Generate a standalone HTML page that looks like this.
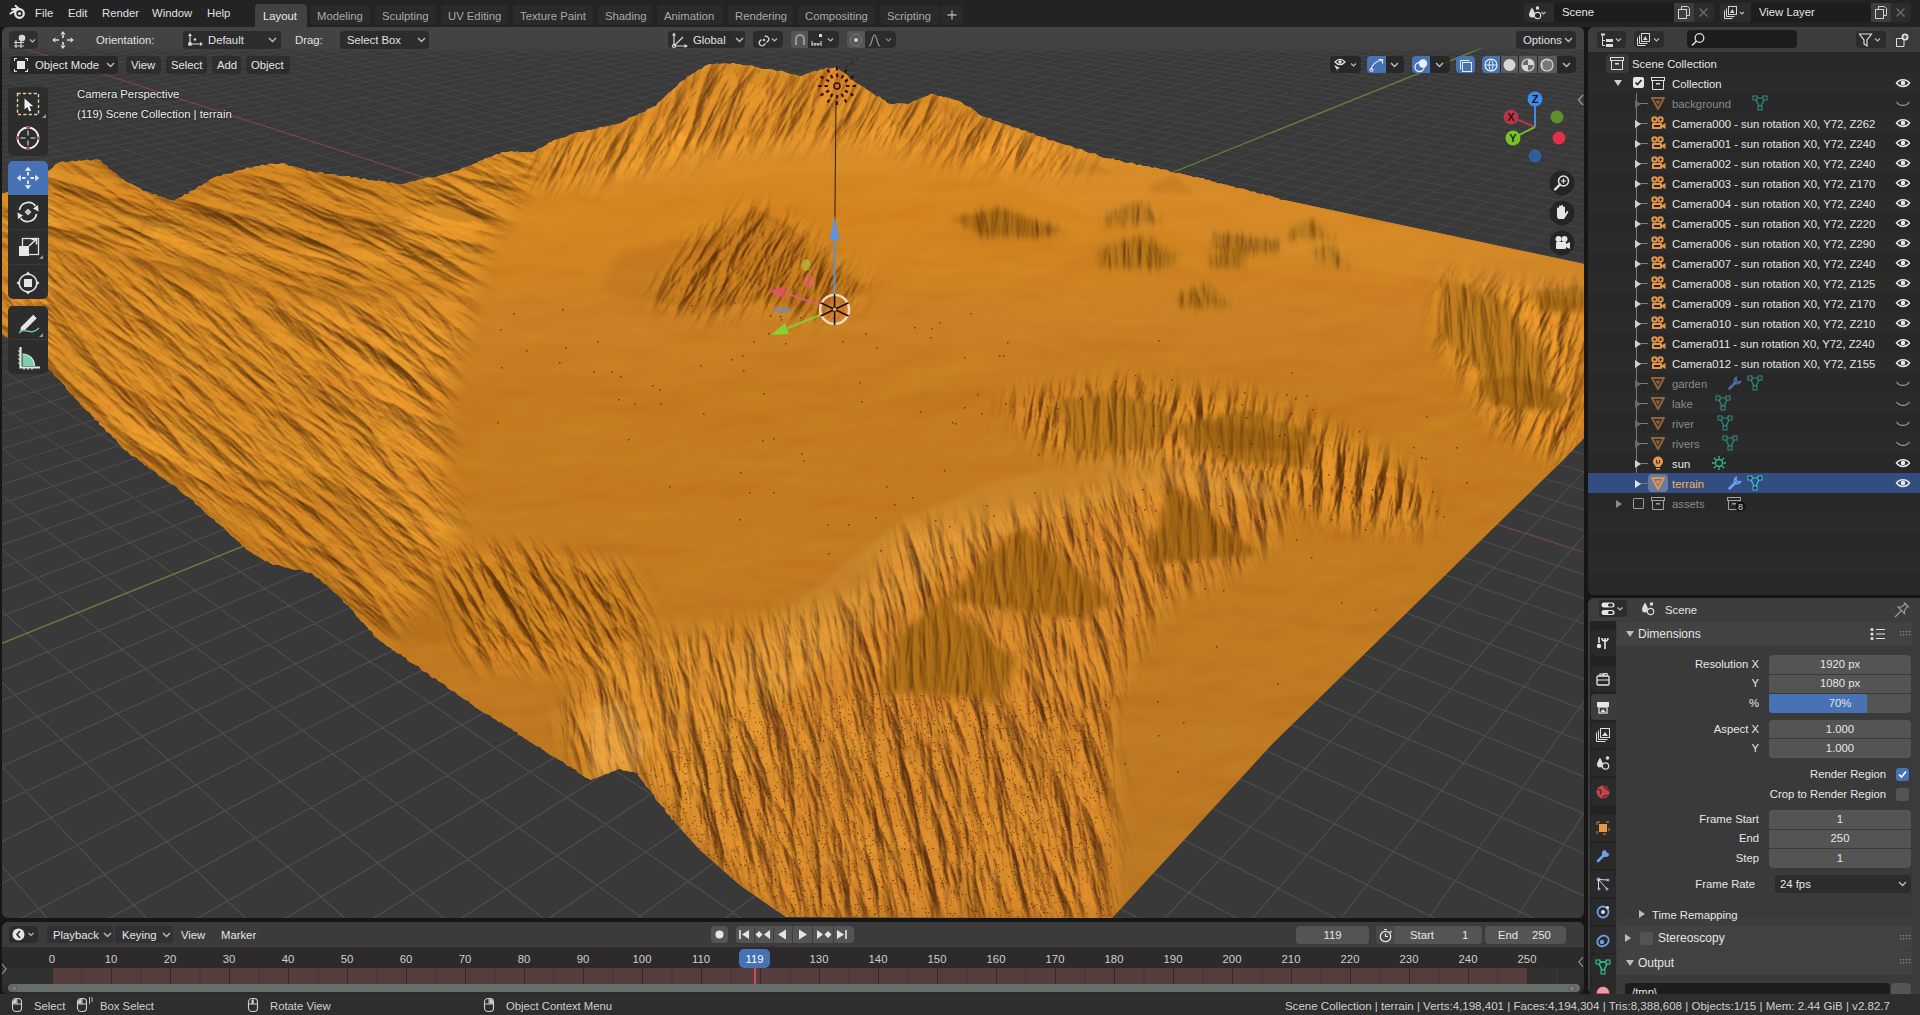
<!DOCTYPE html><html><head><meta charset="utf-8"><title>Blender</title><style>
*{box-sizing:border-box}
html,body{margin:0;padding:0}
body{width:1920px;height:1015px;overflow:hidden;position:relative;background:#161616;font-family:"Liberation Sans",sans-serif;font-size:11.3px;color:#e6e6e6}
.a{position:absolute}
.t{position:absolute;white-space:pre;line-height:14px;height:14px}
svg{position:absolute;overflow:visible}
</style></head><body>
<div class="a" style="left:0px;top:0px;width:1920px;height:27px;background:#232323;border-radius:0px;"></div><svg width="18" height="16" viewBox="0 0 18 16" style="left:9px;top:4px;"><circle cx="10.5" cy="9.5" r="4.3" stroke="#e6e6e6" stroke-width="2.2" fill="none"/><circle cx="10.5" cy="9.5" r="1.6" fill="#e6e6e6"/><path d="M1.5 9.5L7 6.2M3 5.2L9 4.8M6.5 1.8L10 5" stroke="#e6e6e6" stroke-width="2" stroke-linecap="round"/></svg><div class="t" style="left:35px;top:6px;color:#e0e0e0;">File</div><div class="t" style="left:68px;top:6px;color:#e0e0e0;">Edit</div><div class="t" style="left:102px;top:6px;color:#e0e0e0;">Render</div><div class="t" style="left:152px;top:6px;color:#e0e0e0;">Window</div><div class="t" style="left:207px;top:6px;color:#e0e0e0;">Help</div><div class="a" style="left:255px;top:4px;width:52px;height:23px;background:#424242;border-radius:4px;border-bottom-left-radius:0;border-bottom-right-radius:0"></div><div class="t" style="left:263px;top:9px;color:#e8e8e8;">Layout</div><div class="a" style="left:310px;top:5px;width:60px;height:20px;background:#2a2a2a;border-radius:4px;"></div><div class="t" style="left:317px;top:9px;color:#a9a9a9;">Modeling</div><div class="a" style="left:375px;top:5px;width:61px;height:20px;background:#2a2a2a;border-radius:4px;"></div><div class="t" style="left:382px;top:9px;color:#a9a9a9;">Sculpting</div><div class="a" style="left:441px;top:5px;width:67px;height:20px;background:#2a2a2a;border-radius:4px;"></div><div class="t" style="left:448px;top:9px;color:#a9a9a9;">UV Editing</div><div class="a" style="left:513px;top:5px;width:80px;height:20px;background:#2a2a2a;border-radius:4px;"></div><div class="t" style="left:520px;top:9px;color:#a9a9a9;">Texture Paint</div><div class="a" style="left:598px;top:5px;width:54px;height:20px;background:#2a2a2a;border-radius:4px;"></div><div class="t" style="left:605px;top:9px;color:#a9a9a9;">Shading</div><div class="a" style="left:657px;top:5px;width:66px;height:20px;background:#2a2a2a;border-radius:4px;"></div><div class="t" style="left:664px;top:9px;color:#a9a9a9;">Animation</div><div class="a" style="left:728px;top:5px;width:65px;height:20px;background:#2a2a2a;border-radius:4px;"></div><div class="t" style="left:735px;top:9px;color:#a9a9a9;">Rendering</div><div class="a" style="left:798px;top:5px;width:77px;height:20px;background:#2a2a2a;border-radius:4px;"></div><div class="t" style="left:805px;top:9px;color:#a9a9a9;">Compositing</div><div class="a" style="left:880px;top:5px;width:59px;height:20px;background:#2a2a2a;border-radius:4px;"></div><div class="t" style="left:887px;top:9px;color:#a9a9a9;">Scripting</div><div class="a" style="left:940px;top:5px;width:23px;height:20px;background:#2a2a2a;border-radius:4px;"></div><svg width="10" height="10" viewBox="0 0 10 10" style="left:947px;top:10px;"><path d="M5 0.5V9.5M0.5 5H9.5" stroke="#b0b0b0" stroke-width="1.3"/></svg><div class="a" style="left:1524px;top:3px;width:190px;height:19px;background:#2c2c2c;border-radius:4px;"></div><div class="a" style="left:1554px;top:3px;width:120px;height:19px;background:#1d1d1d;border-radius:0px;"></div><div class="a" style="left:1674px;top:3px;width:20px;height:19px;background:#3d3d3d;border-radius:0px;"></div><svg width="20" height="15" viewBox="0 0 20 15" style="left:1527px;top:5px;"><path d="M5 2.5C3 6 2 8 2 9.5a3 3 0 0 0 6 0C8 8 7 6 5 2.5Z" fill="#dcdcdc"/><circle cx="10.5" cy="10.5" r="3.2" stroke="#dcdcdc" stroke-width="1.2" fill="#232323"/><rect x="9" y="1.5" width="3" height="3" fill="#dcdcdc"/><path d="M14.5 7L16.5 9L18.5 7" stroke="#bbb" stroke-width="1.2" fill="none"/></svg><div class="t" style="left:1562px;top:5px;color:#e6e6e6;">Scene</div><svg width="14" height="15" viewBox="0 0 14 15" style="left:1677px;top:5px;"><rect x="1.5" y="4.5" width="8" height="9" stroke="#d0d0d0" fill="none"/><path d="M4.5 4.5V1.5H10.5L12.5 3.5V10.5H9.5" stroke="#d0d0d0" fill="none"/></svg><svg width="11" height="11" viewBox="0 0 11 11" style="left:1698px;top:7px;"><path d="M1.5 1.5L9.5 9.5M9.5 1.5L1.5 9.5" stroke="#6f6f6f" stroke-width="1.3"/></svg><div class="a" style="left:1720px;top:3px;width:191px;height:19px;background:#2c2c2c;border-radius:4px;"></div><div class="a" style="left:1751px;top:3px;width:120px;height:19px;background:#1d1d1d;border-radius:0px;"></div><div class="a" style="left:1871px;top:3px;width:20px;height:19px;background:#3d3d3d;border-radius:0px;"></div><svg width="24" height="15" viewBox="0 0 24 15" style="left:1724px;top:5px;"><rect x="4.5" y="1.5" width="8" height="8" stroke="#d8d8d8" fill="none"/><path d="M2.5 3.5V11.5H10.5M0.5 5.5V13.5H8.5" stroke="#d8d8d8" fill="none"/><path d="M6 8L8.3 4L10.5 8Z" fill="#d8d8d8"/><path d="M16 7L18 9L20 7" stroke="#bbb" stroke-width="1.2" fill="none"/></svg><div class="t" style="left:1759px;top:5px;color:#e6e6e6;">View Layer</div><svg width="14" height="15" viewBox="0 0 14 15" style="left:1874px;top:5px;"><rect x="1.5" y="4.5" width="8" height="9" stroke="#d0d0d0" fill="none"/><path d="M4.5 4.5V1.5H10.5L12.5 3.5V10.5H9.5" stroke="#d0d0d0" fill="none"/></svg><svg width="11" height="11" viewBox="0 0 11 11" style="left:1895px;top:7px;"><path d="M1.5 1.5L9.5 9.5M9.5 1.5L1.5 9.5" stroke="#6f6f6f" stroke-width="1.3"/></svg>
<svg width="1920" height="1015" viewBox="0 0 1920 1015" style="left:0;top:0"><defs><clipPath id="vpc"><rect x="2" y="27" width="1582" height="891" rx="6"/></clipPath><clipPath id="terr"><path d="M0.0 194.0 L4.1 193.2 L8.0 192.0 L11.0 190.9 L13.8 189.5 L16.8 188.3 L19.4 186.5 L22.4 185.3 L24.4 182.4 L27.6 181.7 L30.8 181.0 L33.3 179.0 L36.3 178.0 L38.5 175.2 L41.6 174.4 L44.2 172.5 L47.2 171.5 L50.0 170.0 L52.6 168.1 L54.5 165.3 L57.2 163.6 L60.0 162.0 L63.1 161.4 L66.2 162.4 L69.3 162.0 L72.3 160.8 L75.4 161.8 L78.4 160.4 L81.5 161.1 L84.6 160.1 L87.6 159.7 L90.8 161.1 L93.8 159.8 L96.9 159.6 L100.0 160.0 L101.7 162.6 L104.1 164.5 L107.0 165.7 L108.4 168.6 L111.2 170.1 L113.3 172.2 L116.1 173.6 L118.0 176.0 L120.4 178.3 L123.4 179.6 L125.9 181.7 L128.7 183.3 L132.1 184.0 L134.8 185.8 L137.8 187.2 L140.6 188.8 L143.0 191.0 L146.3 191.3 L149.3 192.7 L152.2 194.2 L155.7 194.1 L158.4 196.3 L161.7 196.7 L164.8 197.7 L167.6 199.5 L170.9 200.0 L174.0 201.0 L176.6 199.1 L179.5 197.8 L182.4 196.6 L184.6 194.1 L188.2 193.9 L190.1 190.9 L193.5 190.5 L196.3 189.0 L198.3 186.2 L201.8 185.8 L204.1 183.6 L207.1 182.4 L209.3 179.9 L212.1 178.4 L215.0 177.1 L218.0 176.0 L221.1 176.0 L223.7 173.9 L226.9 174.1 L229.9 173.7 L232.8 172.9 L235.5 171.1 L238.4 170.4 L241.4 169.9 L244.4 169.6 L247.1 167.6 L250.3 168.0 L253.2 167.3 L256.0 166.0 L259.3 166.3 L262.4 164.4 L265.8 165.7 L268.9 163.8 L272.2 163.8 L275.5 163.9 L278.8 164.1 L282.0 163.0 L285.2 163.7 L288.0 165.7 L291.4 166.1 L294.6 166.7 L297.7 167.7 L300.9 168.4 L304.1 169.3 L307.0 171.0 L310.1 170.8 L313.0 172.2 L315.9 173.1 L319.1 172.1 L322.1 172.3 L324.9 174.4 L328.0 174.0 L331.0 174.2 L334.1 174.3 L337.0 175.4 L339.9 176.2 L343.0 176.0 L346.0 176.3 L349.1 176.1 L351.9 178.0 L355.1 176.9 L358.0 178.1 L360.9 179.2 L364.1 178.3 L366.9 179.8 L369.9 180.6 L373.0 180.5 L375.9 181.2 L379.1 180.4 L382.0 181.4 L385.1 181.3 L387.9 182.9 L391.1 182.4 L394.0 183.1 L396.9 184.5 L400.0 184.0 L403.1 184.0 L406.2 183.5 L409.0 182.0 L412.0 181.4 L415.1 181.2 L418.0 180.1 L420.9 179.1 L424.0 178.7 L426.9 177.6 L430.0 177.3 L433.2 177.7 L436.2 177.0 L439.0 175.8 L442.0 174.9 L444.9 174.0 L447.8 172.9 L451.0 173.0 L453.7 171.5 L456.9 171.1 L459.8 170.1 L462.2 168.1 L465.4 167.6 L468.2 166.5 L471.0 165.2 L473.8 163.9 L476.7 162.9 L479.2 161.1 L482.3 160.5 L484.8 158.6 L487.8 157.8 L490.9 157.1 L493.6 155.8 L496.2 154.0 L499.5 153.9 L502.0 152.0 L505.1 152.3 L508.2 152.1 L511.3 151.1 L514.4 152.1 L517.5 151.6 L520.6 152.3 L523.7 151.9 L526.8 152.6 L529.9 152.3 L533.0 152.0 L535.9 151.0 L538.1 148.8 L541.0 147.7 L543.7 146.4 L546.4 145.0 L548.6 142.8 L551.7 142.0 L554.0 140.0 L557.3 139.6 L560.4 138.3 L563.6 137.8 L566.8 136.8 L569.6 135.0 L572.8 134.1 L575.7 132.4 L579.0 132.0 L582.1 132.0 L585.2 131.5 L588.0 130.1 L591.1 129.9 L594.1 129.3 L597.1 128.7 L599.9 127.1 L603.1 127.6 L606.0 126.6 L609.1 126.1 L612.0 125.1 L615.0 124.8 L618.0 124.0 L620.9 123.2 L623.5 121.7 L626.3 120.5 L628.5 118.1 L631.3 117.0 L634.2 116.2 L637.1 115.2 L639.5 113.3 L642.6 112.7 L645.2 111.4 L647.5 109.1 L650.5 108.5 L653.1 106.8 L656.0 106.0 L657.6 103.3 L659.9 101.4 L662.3 99.5 L664.3 97.3 L666.5 95.2 L668.4 92.9 L671.1 91.4 L673.2 89.2 L675.6 87.4 L677.8 85.3 L679.5 82.7 L682.0 81.0 L685.2 79.8 L687.1 76.7 L690.2 75.5 L692.9 73.6 L695.8 72.0 L698.3 69.7 L701.8 69.1 L704.1 66.6 L707.0 65.0 L710.2 63.9 L713.5 64.7 L716.7 63.5 L720.0 64.1 L723.2 63.5 L726.5 63.6 L729.8 64.1 L733.0 63.0 L736.1 64.1 L739.3 63.9 L742.4 65.2 L745.6 65.4 L748.8 65.5 L752.0 65.6 L755.0 66.9 L758.2 67.4 L761.2 68.7 L764.4 69.2 L767.7 69.1 L770.9 69.2 L774.0 70.0 L777.1 71.4 L780.7 70.6 L783.9 71.6 L787.0 73.1 L790.2 74.0 L793.6 73.9 L796.7 75.5 L800.0 76.0 L803.1 75.8 L805.7 74.0 L808.6 73.2 L811.4 72.0 L814.3 71.2 L817.6 71.5 L820.2 69.6 L823.4 69.7 L826.0 68.0 L829.0 68.7 L832.0 68.2 L835.0 67.6 L838.0 68.0 L840.0 70.8 L843.1 72.3 L845.8 74.3 L848.5 76.3 L850.3 79.4 L853.4 80.8 L856.0 83.0 L858.8 84.3 L861.3 86.2 L864.2 87.3 L866.3 89.6 L869.1 91.0 L871.9 92.4 L874.0 94.7 L876.6 96.4 L880.0 96.8 L882.1 99.2 L885.0 100.4 L887.0 103.1 L890.0 104.0 L893.4 104.5 L896.8 103.5 L900.2 103.6 L903.6 103.4 L907.0 104.0 L910.3 103.6 L912.9 101.2 L916.1 100.4 L919.0 99.0 L922.1 98.0 L925.1 96.7 L928.2 95.7 L931.0 94.0 L934.3 94.1 L937.1 96.0 L940.4 96.0 L943.4 97.2 L946.6 97.6 L949.8 98.3 L952.8 99.5 L955.9 100.2 L959.0 101.0 L961.9 102.6 L964.3 104.9 L967.2 106.5 L970.6 107.4 L973.1 109.5 L975.7 111.6 L978.0 114.1 L980.8 115.8 L984.0 117.0 L987.0 118.1 L990.3 118.2 L992.8 120.5 L996.0 120.9 L999.0 122.1 L1001.9 123.4 L1005.0 124.0 L1007.8 125.2 L1010.7 126.0 L1013.3 127.7 L1016.4 127.8 L1019.2 128.8 L1021.8 130.6 L1025.0 130.5 L1027.8 131.7 L1030.3 133.6 L1033.6 133.3 L1036.0 135.6 L1038.9 136.3 L1041.9 136.9 L1044.8 137.6 L1047.3 139.5 L1050.1 140.7 L1053.4 140.4 L1056.0 142.0 L1059.0 142.9 L1062.0 144.0 L1065.0 144.8 L1068.1 145.5 L1071.2 146.1 L1074.0 147.8 L1076.8 149.1 L1080.2 148.8 L1083.1 150.0 L1085.8 152.0 L1088.8 152.9 L1091.9 153.6 L1095.3 153.4 L1097.9 155.6 L1100.7 156.9 L1103.7 157.9 L1107.0 158.0 L1109.9 159.0 L1113.2 158.5 L1115.9 160.5 L1119.1 160.1 L1121.9 161.5 L1124.8 162.7 L1127.9 162.9 L1131.1 162.5 L1134.1 163.4 L1136.8 165.2 L1140.1 164.5 L1143.0 165.9 L1146.0 166.2 L1149.1 166.4 L1152.0 167.9 L1155.2 167.5 L1158.1 168.3 L1161.0 169.4 L1164.2 169.5 L1167.2 170.1 L1170.0 171.7 L1172.9 172.6 L1175.9 173.5 L1179.1 172.8 L1182.0 174.0 L1185.1 174.4 L1188.0 175.6 L1191.0 176.0 L1193.8 177.5 L1197.0 177.1 L1200.0 178.0 L1203.2 178.0 L1205.9 179.9 L1209.2 179.7 L1211.9 181.4 L1215.0 181.9 L1217.8 183.4 L1221.0 183.6 L1223.9 184.5 L1227.1 184.7 L1230.0 185.9 L1233.1 186.2 L1235.9 187.9 L1239.0 188.2 L1242.2 188.4 L1245.1 189.3 L1248.1 190.3 L1250.9 191.8 L1254.1 191.6 L1256.9 193.3 L1259.9 194.0 L1263.2 193.8 L1265.9 195.6 L1269.2 195.4 L1272.2 196.2 L1275.0 197.8 L1278.1 198.0 L1280.8 199.9 L1284 200 L1584 264 L1584 438 L1563 460 L1438 582 L1273 743 L1112 918 L786 917 L741 886 L700 850 L680.0 828.0 L678.0 825.6 L675.8 823.4 L674.4 820.5 L671.3 818.9 L670.3 815.7 L667.4 814.1 L665.5 811.6 L664.6 808.3 L662.3 806.2 L660.0 804.0 L657.6 801.6 L655.4 799.1 L654.7 795.5 L652.2 793.2 L650.5 790.3 L648.0 788.0 L645.6 785.9 L644.5 782.9 L642.3 780.7 L640.3 778.3 L638.6 775.7 L637.0 773.0 L633.6 772.0 L630.1 771.7 L626.8 770.8 L623.3 770.4 L620.0 769.0 L616.9 769.5 L614.1 771.0 L611.1 771.8 L608.4 773.5 L605.3 773.9 L602.6 775.6 L599.6 776.5 L596.8 777.7 L593.7 778.5 L591.0 780.0 L588.3 778.5 L585.5 777.4 L582.9 775.8 L580.5 773.9 L577.7 772.5 L576.0 769.6 L573.0 768.6 L570.7 766.6 L567.4 766.1 L565.3 763.7 L563.2 761.5 L560.3 760.3 L557.6 758.9 L555.1 757.2 L552.1 756.2 L549.6 754.4 L547.1 752.8 L544.7 750.8 L542.2 749.2 L540.1 746.8 L536.8 746.3 L534.3 744.5 L531.8 742.8 L529.1 741.4 L526.7 739.6 L524.0 738.0 L521.7 736.0 L518.7 735.1 L517.0 732.1 L513.9 731.3 L511.9 728.8 L509.1 727.5 L506.5 725.9 L503.8 724.6 L501.6 722.3 L498.3 721.9 L496.2 719.4 L493.3 718.4 L491.1 716.1 L488.6 714.4 L485.5 713.7 L483.0 712.0 L480.2 710.6 L477.9 708.7 L475.2 707.3 L473.0 705.0 L470.4 703.4 L468.5 700.8 L465.4 700.0 L462.8 698.3 L460.5 696.4 L457.8 694.9 L455.7 692.5 L453.2 690.8 L450.2 689.9 L447.7 688.0 L445.7 685.6 L443.5 683.5 L440.6 682.2 L437.9 680.8 L436.0 678.2 L432.5 677.9 L430.0 676.1 L428.3 673.3 L425.4 672.1 L422.5 670.9 L420.5 668.5 L418.5 666.1 L415.5 665.0 L412.8 663.5 L410.1 662.2 L407.6 660.5 L405.9 657.5 L403.0 656.4 L400.9 654.0 L397.5 653.6 L395.2 651.5 L392.5 650.1 L390.4 647.8 L387.5 646.6 L385.2 644.6 L382.9 642.6 L380.3 641.0 L378.0 639.0 L375.3 637.2 L373.2 634.9 L372.3 631.4 L369.1 630.1 L367.5 627.3 L365.2 625.1 L363.3 622.6 L360.6 620.8 L358.8 618.2 L356.4 616.1 L354.8 613.3 L353.2 610.5 L350.7 608.5 L348.9 605.9 L346.0 604.3 L343.6 602.2 L342.2 599.3 L340.0 597.0 L337.7 595.0 L335.4 592.9 L332.9 591.2 L330.8 588.8 L328.6 586.7 L326.5 584.4 L323.4 583.3 L321.3 581.1 L319.4 578.6 L316.3 577.4 L313.9 575.5 L312.0 573.0 L308.9 572.6 L305.8 572.3 L303.1 570.4 L300.1 569.6 L296.9 569.8 L293.8 569.4 L290.8 568.7 L287.9 567.7 L284.8 567.3 L282.0 566.0 L279.0 565.0 L275.9 564.9 L272.8 564.5 L270.0 563.0 L267.5 561.1 L264.3 560.6 L261.7 558.8 L259.1 557.1 L256.6 555.4 L253.6 554.3 L251.3 552.2 L248.5 550.8 L246.0 549.0 L244.0 546.6 L241.5 544.8 L239.6 542.2 L237.1 540.5 L234.9 538.3 L232.4 536.4 L230.0 534.5 L228.1 531.9 L225.7 530.1 L223.8 527.6 L221.2 525.8 L218.9 523.8 L216.1 522.3 L214.5 519.5 L211.7 518.0 L209.1 516.2 L206.7 514.2 L204.6 512.0 L202.4 509.8 L200.6 507.2 L197.9 505.6 L195.3 503.8 L193.9 500.8 L191.3 499.0 L189.0 497.0 L186.0 495.9 L183.6 494.0 L181.2 492.1 L179.0 490.0 L177.1 487.4 L174.7 485.5 L171.9 484.2 L169.0 482.9 L166.8 480.8 L164.2 479.1 L161.7 477.4 L158.9 476.0 L157.1 473.4 L154.9 471.2 L152.3 469.6 L149.2 468.7 L147.2 466.2 L144.3 464.9 L142.5 462.3 L139.7 460.9 L137.8 458.4 L135.2 456.8 L132.0 456.0 L129.7 453.9 L127.9 451.2 L125.0 450.0 L122.9 447.9 L120.7 445.7 L118.7 443.6 L117.0 441.0 L115.1 438.6 L112.5 436.9 L111.0 434.2 L108.4 432.5 L105.7 430.9 L104.5 427.9 L101.9 426.2 L99.4 424.5 L98.5 421.1 L95.2 420.1 L93.8 417.3 L91.6 415.2 L90.0 412.6 L87.3 411.0 L85.0 409.1 L83.0 406.8 L80.8 404.7 L79.2 402.1 L77.0 400.0 L74.7 397.9 L73.2 395.1 L70.4 393.4 L68.5 390.9 L66.3 388.8 L65.2 385.6 L62.9 383.4 L60.9 381.1 L58.5 379.1 L56.1 377.0 L53.7 375.0 L52.5 371.9 L50.0 370.0 L47.5 368.1 L44.5 366.9 L42.1 364.8 L39.6 363.0 L37.7 360.2 L35.4 358.0 L32.2 357.1 L30.3 354.4 L27.3 353.2 L25.2 350.7 L22.9 348.6 L20.1 347.0 L17.8 344.9 L14.9 343.6 L12.0 342.2 L10.0 339.6 L7.6 337.6 L4.7 336.3 L2.4 334.1 L0.0 332.0 L-0.3 329.0 L-0.9 326.0 L-0.3 323.0 L-0.2 320.0 L-0.0 317.0 L0.4 314.0 L-0.2 311.0 L0.9 308.0 L0.6 305.0 L0.8 302.0 L0.3 299.0 L0.3 296.0 L0.1 293.0 L0.5 290.0 L-0.2 287.0 L0.2 284.0 L0.3 281.0 L0.0 278.0 L-0.4 275.0 L-0.8 272.0 L-0.7 269.0 L-0.3 266.0 L0.1 263.0 L0.5 260.0 L0.4 257.0 L-0.3 254.0 L0.8 251.0 L-0.4 248.0 L0.4 245.0 L-0.8 242.0 L0.5 239.0 L0.3 236.0 L0.8 233.0 L0.7 230.0 L0.3 227.0 L0.6 224.0 L0.4 221.0 L0.2 218.0 L-0.5 215.0 L0.0 212.0 L0.7 209.0 L-0.5 206.0 L0.9 203.0 L0.1 200.0 L-0.2 197.0Z"/></clipPath><linearGradient id="tg" x1="0" y1="60" x2="0" y2="918" gradientUnits="userSpaceOnUse"><stop offset="0" stop-color="#d98d29"/><stop offset="0.186" stop-color="#d38520"/><stop offset="0.303" stop-color="#ca8024"/><stop offset="0.396" stop-color="#c37b1e"/><stop offset="0.559" stop-color="#c27b1f"/><stop offset="1" stop-color="#bb7622"/></linearGradient><linearGradient id="gfg" x1="0" y1="27" x2="0" y2="918" gradientUnits="userSpaceOnUse"><stop offset="0" stop-color="#fff" stop-opacity="0.4"/><stop offset="0.3" stop-color="#fff" stop-opacity="0.55"/><stop offset="0.6" stop-color="#fff" stop-opacity="0.9"/><stop offset="1" stop-color="#fff" stop-opacity="1"/></linearGradient><mask id="gfade" maskUnits="userSpaceOnUse" x="0" y="0" width="1920" height="1015"><rect x="0" y="0" width="1920" height="1015" fill="url(#gfg)"/></mask><pattern id="vst" width="3" height="40" patternUnits="userSpaceOnUse"><rect x="0" y="0" width="1.3" height="40" fill="#3a1e02" fill-opacity="0.35"/><rect x="1.8" y="0" width="0.8" height="40" fill="#ffc070" fill-opacity="0.15"/></pattern><filter id="sb" x="-5%" y="-5%" width="110%" height="110%"><feGaussianBlur stdDeviation="2.5"/></filter><filter id="bl" x="-20%" y="-20%" width="140%" height="140%"><feGaussianBlur stdDeviation="12"/></filter><pattern id="dots" width="12" height="12" patternUnits="userSpaceOnUse"><rect x="2.6" y="6.0" width="1.2" height="1.2" fill="#4a2806" fill-opacity="0.41"/><rect x="6.6" y="6.9" width="1.2" height="1.2" fill="#4a2806" fill-opacity="0.32"/><rect x="0.1" y="9.2" width="1.2" height="1.2" fill="#4a2806" fill-opacity="0.38"/><rect x="2.6" y="11.0" width="1.2" height="1.2" fill="#4a2806" fill-opacity="0.44"/><rect x="9.2" y="5.2" width="1.2" height="1.2" fill="#4a2806" fill-opacity="0.49"/><rect x="1.7" y="7.0" width="1.2" height="1.2" fill="#4a2806" fill-opacity="0.56"/><rect x="5.8" y="8.2" width="1.2" height="1.2" fill="#4a2806" fill-opacity="0.50"/><rect x="0.7" y="8.3" width="1.2" height="1.2" fill="#4a2806" fill-opacity="0.48"/><rect x="3.3" y="0.3" width="1.2" height="1.2" fill="#4a2806" fill-opacity="0.56"/></pattern><mask id="zm0" maskUnits="userSpaceOnUse" x="0" y="0" width="1920" height="1015"><path d="M0 194 L50 170 L100 160 L174 201 L256 166 L307 171 L400 184 L451 173 L502 152 L533 152 L554 140 L520 190 L480 250 L470 300 L300 300 L120 260 L0 250Z" fill="#fff" filter="url(#bl)"/></mask><filter id="tx0" x="0" y="0" width="100%" height="100%" filterUnits="objectBoundingBox" color-interpolation-filters="sRGB"><feTurbulence type="turbulence" baseFrequency="0.006 0.03" numOctaves="5" seed="11" result="n"/><feColorMatrix in="n" type="matrix" values="0 0 0 0 0  0 0 0 0 0  0 0 0 0 0  -1.3 0 0 0 1" result="h"/><feDiffuseLighting in="h" surfaceScale="6" diffuseConstant="1" lighting-color="#ffffff" result="lit"><feDistantLight azimuth="240" elevation="50"/></feDiffuseLighting><feColorMatrix in="lit" type="matrix" values="0.55 0 0 0 0.395  0.40 0 0 0 0.226  0.12 0 0 0 0.055  0 0 0 0 1"/></filter><mask id="zm1" maskUnits="userSpaceOnUse" x="0" y="0" width="1920" height="1015"><path d="M0 250 L120 260 L300 300 L470 300 L450 380 L440 470 L460 540 L430 600 L378 639 L340 597 L312 573 L270 563 L189 497 L125 450 L50 370 L0 332Z" fill="#fff" filter="url(#bl)"/></mask><filter id="tx1" x="0" y="0" width="100%" height="100%" filterUnits="objectBoundingBox" color-interpolation-filters="sRGB"><feTurbulence type="turbulence" baseFrequency="0.006 0.03" numOctaves="5" seed="12" result="n"/><feColorMatrix in="n" type="matrix" values="0 0 0 0 0  0 0 0 0 0  0 0 0 0 0  -1.3 0 0 0 1" result="h"/><feDiffuseLighting in="h" surfaceScale="6" diffuseConstant="1" lighting-color="#ffffff" result="lit"><feDistantLight azimuth="240" elevation="50"/></feDiffuseLighting><feColorMatrix in="lit" type="matrix" values="0.55 0 0 0 0.395  0.40 0 0 0 0.222  0.12 0 0 0 0.055  0 0 0 0 1"/></filter><mask id="zm2" maskUnits="userSpaceOnUse" x="0" y="0" width="1920" height="1015"><path d="M533 152 L554 140 L579 132 L618 124 L656 106 L682 81 L707 65 L733 63 L774 70 L800 76 L826 68 L838 68 L856 83 L890 104 L907 104 L931 94 L959 101 L984 117 L1005 124 L1056 142 L1107 158 L1060 168 L1000 165 L930 152 L880 142 L820 138 L760 142 L700 152 L640 168 L580 178 L540 182Z" fill="#fff" filter="url(#bl)"/></mask><filter id="tx2" x="0" y="0" width="100%" height="100%" filterUnits="objectBoundingBox" color-interpolation-filters="sRGB"><feTurbulence type="turbulence" baseFrequency="0.008 0.04" numOctaves="5" seed="13" result="n"/><feColorMatrix in="n" type="matrix" values="0 0 0 0 0  0 0 0 0 0  0 0 0 0 0  -1.3 0 0 0 1" result="h"/><feDiffuseLighting in="h" surfaceScale="6" diffuseConstant="1" lighting-color="#ffffff" result="lit"><feDistantLight azimuth="240" elevation="50"/></feDiffuseLighting><feColorMatrix in="lit" type="matrix" values="0.55 0 0 0 0.458  0.40 0 0 0 0.273  0.12 0 0 0 0.079  0 0 0 0 1"/></filter><mask id="zm3" maskUnits="userSpaceOnUse" x="0" y="0" width="1920" height="1015"><path d="M650 300 L700 240 L755 208 L790 225 L830 262 L870 290 L812 316 L760 300 L700 312Z" fill="#fff" filter="url(#bl)"/></mask><filter id="tx3" x="0" y="0" width="100%" height="100%" filterUnits="objectBoundingBox" color-interpolation-filters="sRGB"><feTurbulence type="turbulence" baseFrequency="0.012 0.05" numOctaves="5" seed="14" result="n"/><feColorMatrix in="n" type="matrix" values="0 0 0 0 0  0 0 0 0 0  0 0 0 0 0  -1.3 0 0 0 1" result="h"/><feDiffuseLighting in="h" surfaceScale="6" diffuseConstant="1" lighting-color="#ffffff" result="lit"><feDistantLight azimuth="240" elevation="50"/></feDiffuseLighting><feColorMatrix in="lit" type="matrix" values="0.55 0 0 0 0.368  0.40 0 0 0 0.195  0.12 0 0 0 0.040  0 0 0 0 1"/></filter><mask id="zm4" maskUnits="userSpaceOnUse" x="0" y="0" width="1920" height="1015"><path d="M600 650 L760 625 L860 600 L910 530 L990 520 L1066 500 L1158 475 L1210 440 L1282 470 L1290 510 L1250 560 L1160 600 L1110 700 L1112 918 L780 918 L709 857 L652 790 L634 771 L610 781 L586 776 L560 720Z" fill="#fff" filter="url(#bl)"/></mask><filter id="tx4" x="0" y="0" width="100%" height="100%" filterUnits="objectBoundingBox" color-interpolation-filters="sRGB"><feTurbulence type="turbulence" baseFrequency="0.007 0.035" numOctaves="5" seed="15" result="n"/><feColorMatrix in="n" type="matrix" values="0 0 0 0 0  0 0 0 0 0  0 0 0 0 0  -1.3 0 0 0 1" result="h"/><feDiffuseLighting in="h" surfaceScale="6" diffuseConstant="1" lighting-color="#ffffff" result="lit"><feDistantLight azimuth="240" elevation="50"/></feDiffuseLighting><feColorMatrix in="lit" type="matrix" values="0.55 0 0 0 0.380  0.40 0 0 0 0.215  0.12 0 0 0 0.071  0 0 0 0 1"/></filter><mask id="zm5" maskUnits="userSpaceOnUse" x="0" y="0" width="1920" height="1015"><path d="M431 560 L520 550 L630 575 L650 640 L600 670 L470 660Z" fill="#fff" filter="url(#bl)"/></mask><filter id="tx5" x="0" y="0" width="100%" height="100%" filterUnits="objectBoundingBox" color-interpolation-filters="sRGB"><feTurbulence type="turbulence" baseFrequency="0.01 0.05" numOctaves="5" seed="17" result="n"/><feColorMatrix in="n" type="matrix" values="0 0 0 0 0  0 0 0 0 0  0 0 0 0 0  -1.3 0 0 0 1" result="h"/><feDiffuseLighting in="h" surfaceScale="6" diffuseConstant="1" lighting-color="#ffffff" result="lit"><feDistantLight azimuth="240" elevation="50"/></feDiffuseLighting><feColorMatrix in="lit" type="matrix" values="0.55 0 0 0 0.388  0.40 0 0 0 0.211  0.12 0 0 0 0.047  0 0 0 0 1"/></filter><mask id="zm6" maskUnits="userSpaceOnUse" x="0" y="0" width="1920" height="1015"><path d="M1000 400 L1120 385 L1250 400 L1330 430 L1420 480 L1430 530 L1330 520 L1250 480 L1150 460 L1050 450Z" fill="#fff" filter="url(#bl)"/></mask><filter id="tx6" x="0" y="0" width="100%" height="100%" filterUnits="objectBoundingBox" color-interpolation-filters="sRGB"><feTurbulence type="turbulence" baseFrequency="0.012 0.05" numOctaves="5" seed="18" result="n"/><feColorMatrix in="n" type="matrix" values="0 0 0 0 0  0 0 0 0 0  0 0 0 0 0  -1.3 0 0 0 1" result="h"/><feDiffuseLighting in="h" surfaceScale="6" diffuseConstant="1" lighting-color="#ffffff" result="lit"><feDistantLight azimuth="240" elevation="50"/></feDiffuseLighting><feColorMatrix in="lit" type="matrix" values="0.55 0 0 0 0.368  0.40 0 0 0 0.195  0.12 0 0 0 0.047  0 0 0 0 1"/></filter><mask id="zm7" maskUnits="userSpaceOnUse" x="0" y="0" width="1920" height="1015"><path d="M1440 277 L1520 290 L1584 286 L1584 438 L1563 460 L1500 430 L1440 340Z" fill="#fff" filter="url(#bl)"/></mask><filter id="tx7" x="0" y="0" width="100%" height="100%" filterUnits="objectBoundingBox" color-interpolation-filters="sRGB"><feTurbulence type="turbulence" baseFrequency="0.01 0.04" numOctaves="5" seed="16" result="n"/><feColorMatrix in="n" type="matrix" values="0 0 0 0 0  0 0 0 0 0  0 0 0 0 0  -1.3 0 0 0 1" result="h"/><feDiffuseLighting in="h" surfaceScale="6" diffuseConstant="1" lighting-color="#ffffff" result="lit"><feDistantLight azimuth="240" elevation="50"/></feDiffuseLighting><feColorMatrix in="lit" type="matrix" values="0.55 0 0 0 0.395  0.40 0 0 0 0.218  0.12 0 0 0 0.055  0 0 0 0 1"/></filter><mask id="dzm" maskUnits="userSpaceOnUse" x="0" y="0" width="1920" height="1015"><path d="M637 758 L750 700 L900 700 L1100 760 L1200 780 L1112 918 L786 920 L705 861 L670 815Z" fill="#fff" filter="url(#bl)"/></mask></defs><g clip-path="url(#vpc)"><rect x="0" y="0" width="1920" height="1015" fill="#393939"/><path d="M1584.0 29.6L1562.6 27.0M1584.0 32.6L1537.7 27.0M1584.0 35.7L1512.7 27.0M1584.0 38.9L1487.8 27.0M1584.0 42.1L1462.9 27.0M1584.0 45.4L1438.0 27.0M1584.0 48.8L1413.0 27.0M1584.0 52.2L1388.1 27.0M1584.0 55.7L1363.1 27.0M1584.0 59.3L1338.2 27.0M1584.0 63.0L1313.2 27.0M1584.0 66.7L1288.3 27.0M1584.0 70.5L1263.3 27.0M1584.0 74.5L1238.3 27.0M1584.0 78.5L1213.4 27.0M1584.0 82.6L1188.4 27.0M1584.0 86.8L1163.4 27.0M1584.0 91.1L1138.4 27.0M1584.0 95.5L1113.4 27.0M1584.0 100.0L1088.4 27.0M1584.0 104.6L1063.4 27.0M1584.0 109.3L1038.4 27.0M1584.0 114.2L1013.4 27.0M1584.0 119.1L988.4 27.0M1584.0 124.2L963.3 27.0M1584.0 129.5L938.3 27.0M1584.0 134.8L913.3 27.0M1584.0 140.4L888.2 27.0M1584.0 146.0L863.2 27.0M1584.0 151.8L838.1 27.0M1584.0 157.8L813.1 27.0M1584.0 164.0L788.0 27.0M1584.0 170.3L763.0 27.0M1584.0 176.8L737.9 27.0M1584.0 183.6L712.8 27.0M1584.0 190.5L687.7 27.0M1584.0 197.6L662.6 27.0M1584.0 204.9L637.6 27.0M1584.0 212.5L612.5 27.0M1584.0 220.3L587.4 27.0M1584.0 228.4L562.3 27.0M1584.0 236.8L537.1 27.0M1584.0 245.4L512.0 27.0M1584.0 254.3L486.9 27.0M1584.0 263.5L461.8 27.0M1584.0 273.1L436.6 27.0M1584.0 283.0L411.5 27.0M1584.0 293.3L386.4 27.0M1584.0 303.9L361.2 27.0M1584.0 315.0L336.1 27.0M1584.0 326.5L310.9 27.0M1584.0 338.4L285.8 27.0M1584.0 350.8L260.6 27.0M1584.0 363.8L235.4 27.0M1584.0 377.2L210.2 27.0M1584.0 391.3L185.1 27.0M1584.0 406.0L159.9 27.0M1584.0 421.3L134.7 27.0M1584.0 437.4L109.5 27.0M1584.0 454.2L84.3 27.0M1584.0 471.8L59.1 27.0M1584.0 490.3L33.9 27.0M1584.0 509.7L8.6 27.0M1584.0 530.2L2.0 32.8M1584.0 574.4L2.0 49.9M1584.0 598.4L2.0 59.1M1584.0 623.8L2.0 68.9M1584.0 650.7L2.0 79.3M1584.0 679.2L2.0 90.3M1584.0 709.6L2.0 102.0M1584.0 742.0L2.0 114.5M1584.0 776.6L2.0 127.8M1584.0 813.6L2.0 142.1M1584.0 853.3L2.0 157.4M1584.0 896.0L2.0 173.8M1533.3 918.0L2.0 191.6M1434.3 918.0L2.0 210.8M1335.4 918.0L2.0 231.6M1236.4 918.0L2.0 254.3M1137.4 918.0L2.0 279.2M1038.3 918.0L2.0 306.4M939.3 918.0L2.0 336.5M840.2 918.0L2.0 369.8M741.1 918.0L2.0 406.9M642.0 918.0L2.0 448.6M542.9 918.0L2.0 495.6M443.8 918.0L2.0 549.2M344.6 918.0L2.0 610.7M245.4 918.0L2.0 682.2M146.2 918.0L2.0 766.1M47.0 918.0L2.0 866.1M1516.3 918.0L1584.0 812.9M1428.5 918.0L1584.0 701.4M1340.7 918.0L1584.0 610.6M1252.8 918.0L1584.0 535.2M1165.0 918.0L1584.0 471.7M1077.2 918.0L1584.0 417.4M989.3 918.0L1584.0 370.4M901.4 918.0L1584.0 329.4M813.5 918.0L1584.0 293.3M725.6 918.0L1584.0 261.3M637.7 918.0L1584.0 232.7M549.7 918.0L1584.0 206.9M461.8 918.0L1584.0 183.7M373.8 918.0L1584.0 162.6M285.8 918.0L1584.0 143.3M197.8 918.0L1584.0 125.7M109.7 918.0L1584.0 109.5M21.7 918.0L1584.0 94.5M2.0 883.3L1584.0 80.7M2.0 841.5L1584.0 67.8M2.0 802.6L1584.0 55.9M2.0 766.3L1584.0 44.7M2.0 732.4L1584.0 34.3M2.0 700.6L1578.3 27.0M2.0 670.7L1555.9 27.0M2.0 616.1L1511.3 27.0M2.0 591.1L1489.0 27.0M2.0 567.5L1466.6 27.0M2.0 545.1L1444.3 27.0M2.0 523.9L1422.0 27.0M2.0 503.7L1399.6 27.0M2.0 484.6L1377.3 27.0M2.0 466.3L1354.9 27.0M2.0 448.9L1332.6 27.0M2.0 432.3L1310.2 27.0M2.0 416.4L1287.8 27.0M2.0 401.3L1265.5 27.0M2.0 386.7L1243.1 27.0M2.0 372.8L1220.7 27.0M2.0 359.5L1198.3 27.0M2.0 346.7L1176.0 27.0M2.0 334.4L1153.6 27.0M2.0 322.6L1131.2 27.0M2.0 311.2L1108.8 27.0M2.0 300.2L1086.4 27.0M2.0 289.7L1064.0 27.0M2.0 279.5L1041.6 27.0M2.0 269.7L1019.2 27.0M2.0 260.2L996.8 27.0M2.0 251.0L974.3 27.0M2.0 242.2L951.9 27.0M2.0 233.6L929.5 27.0M2.0 225.4L907.0 27.0M2.0 217.3L884.6 27.0M2.0 209.6L862.2 27.0M2.0 202.0L839.7 27.0M2.0 194.8L817.3 27.0M2.0 187.7L794.8 27.0M2.0 180.8L772.4 27.0M2.0 174.1L749.9 27.0M2.0 167.7L727.4 27.0M2.0 161.4L705.0 27.0M2.0 155.2L682.5 27.0M2.0 149.3L660.0 27.0M2.0 143.5L637.5 27.0M2.0 137.9L615.1 27.0M2.0 132.4L592.6 27.0M2.0 127.0L570.1 27.0M2.0 121.8L547.6 27.0M2.0 116.8L525.1 27.0M2.0 111.8L502.6 27.0M2.0 107.0L480.1 27.0M2.0 102.3L457.6 27.0M2.0 97.7L435.0 27.0M2.0 93.2L412.5 27.0M2.0 88.8L390.0 27.0M2.0 84.6L367.5 27.0M2.0 80.4L344.9 27.0M2.0 76.3L322.4 27.0M2.0 72.3L299.8 27.0M2.0 68.4L277.3 27.0M2.0 64.6L254.7 27.0M2.0 60.9L232.2 27.0M2.0 57.2L209.6 27.0M2.0 53.6L187.1 27.0M2.0 50.1L164.5 27.0M2.0 46.7L141.9 27.0M2.0 43.4L119.4 27.0M2.0 40.1L96.8 27.0M2.0 36.9L74.2 27.0M2.0 33.7L51.6 27.0M2.0 30.6L29.0 27.0M2.0 27.6L6.4 27.0" stroke="#4f4f4f" stroke-width="1.15" fill="none" mask="url(#gfade)"/><path d="M0 40.7L1584 552.3" stroke="#7a4650" stroke-width="1.2" fill="none"/><path d="M0 644L1600 0.5" stroke="#64843a" stroke-width="1.3" fill="none"/><path d="M0.0 194.0 L4.1 193.2 L8.0 192.0 L11.0 190.9 L13.8 189.5 L16.8 188.3 L19.4 186.5 L22.4 185.3 L24.4 182.4 L27.6 181.7 L30.8 181.0 L33.3 179.0 L36.3 178.0 L38.5 175.2 L41.6 174.4 L44.2 172.5 L47.2 171.5 L50.0 170.0 L52.6 168.1 L54.5 165.3 L57.2 163.6 L60.0 162.0 L63.1 161.4 L66.2 162.4 L69.3 162.0 L72.3 160.8 L75.4 161.8 L78.4 160.4 L81.5 161.1 L84.6 160.1 L87.6 159.7 L90.8 161.1 L93.8 159.8 L96.9 159.6 L100.0 160.0 L101.7 162.6 L104.1 164.5 L107.0 165.7 L108.4 168.6 L111.2 170.1 L113.3 172.2 L116.1 173.6 L118.0 176.0 L120.4 178.3 L123.4 179.6 L125.9 181.7 L128.7 183.3 L132.1 184.0 L134.8 185.8 L137.8 187.2 L140.6 188.8 L143.0 191.0 L146.3 191.3 L149.3 192.7 L152.2 194.2 L155.7 194.1 L158.4 196.3 L161.7 196.7 L164.8 197.7 L167.6 199.5 L170.9 200.0 L174.0 201.0 L176.6 199.1 L179.5 197.8 L182.4 196.6 L184.6 194.1 L188.2 193.9 L190.1 190.9 L193.5 190.5 L196.3 189.0 L198.3 186.2 L201.8 185.8 L204.1 183.6 L207.1 182.4 L209.3 179.9 L212.1 178.4 L215.0 177.1 L218.0 176.0 L221.1 176.0 L223.7 173.9 L226.9 174.1 L229.9 173.7 L232.8 172.9 L235.5 171.1 L238.4 170.4 L241.4 169.9 L244.4 169.6 L247.1 167.6 L250.3 168.0 L253.2 167.3 L256.0 166.0 L259.3 166.3 L262.4 164.4 L265.8 165.7 L268.9 163.8 L272.2 163.8 L275.5 163.9 L278.8 164.1 L282.0 163.0 L285.2 163.7 L288.0 165.7 L291.4 166.1 L294.6 166.7 L297.7 167.7 L300.9 168.4 L304.1 169.3 L307.0 171.0 L310.1 170.8 L313.0 172.2 L315.9 173.1 L319.1 172.1 L322.1 172.3 L324.9 174.4 L328.0 174.0 L331.0 174.2 L334.1 174.3 L337.0 175.4 L339.9 176.2 L343.0 176.0 L346.0 176.3 L349.1 176.1 L351.9 178.0 L355.1 176.9 L358.0 178.1 L360.9 179.2 L364.1 178.3 L366.9 179.8 L369.9 180.6 L373.0 180.5 L375.9 181.2 L379.1 180.4 L382.0 181.4 L385.1 181.3 L387.9 182.9 L391.1 182.4 L394.0 183.1 L396.9 184.5 L400.0 184.0 L403.1 184.0 L406.2 183.5 L409.0 182.0 L412.0 181.4 L415.1 181.2 L418.0 180.1 L420.9 179.1 L424.0 178.7 L426.9 177.6 L430.0 177.3 L433.2 177.7 L436.2 177.0 L439.0 175.8 L442.0 174.9 L444.9 174.0 L447.8 172.9 L451.0 173.0 L453.7 171.5 L456.9 171.1 L459.8 170.1 L462.2 168.1 L465.4 167.6 L468.2 166.5 L471.0 165.2 L473.8 163.9 L476.7 162.9 L479.2 161.1 L482.3 160.5 L484.8 158.6 L487.8 157.8 L490.9 157.1 L493.6 155.8 L496.2 154.0 L499.5 153.9 L502.0 152.0 L505.1 152.3 L508.2 152.1 L511.3 151.1 L514.4 152.1 L517.5 151.6 L520.6 152.3 L523.7 151.9 L526.8 152.6 L529.9 152.3 L533.0 152.0 L535.9 151.0 L538.1 148.8 L541.0 147.7 L543.7 146.4 L546.4 145.0 L548.6 142.8 L551.7 142.0 L554.0 140.0 L557.3 139.6 L560.4 138.3 L563.6 137.8 L566.8 136.8 L569.6 135.0 L572.8 134.1 L575.7 132.4 L579.0 132.0 L582.1 132.0 L585.2 131.5 L588.0 130.1 L591.1 129.9 L594.1 129.3 L597.1 128.7 L599.9 127.1 L603.1 127.6 L606.0 126.6 L609.1 126.1 L612.0 125.1 L615.0 124.8 L618.0 124.0 L620.9 123.2 L623.5 121.7 L626.3 120.5 L628.5 118.1 L631.3 117.0 L634.2 116.2 L637.1 115.2 L639.5 113.3 L642.6 112.7 L645.2 111.4 L647.5 109.1 L650.5 108.5 L653.1 106.8 L656.0 106.0 L657.6 103.3 L659.9 101.4 L662.3 99.5 L664.3 97.3 L666.5 95.2 L668.4 92.9 L671.1 91.4 L673.2 89.2 L675.6 87.4 L677.8 85.3 L679.5 82.7 L682.0 81.0 L685.2 79.8 L687.1 76.7 L690.2 75.5 L692.9 73.6 L695.8 72.0 L698.3 69.7 L701.8 69.1 L704.1 66.6 L707.0 65.0 L710.2 63.9 L713.5 64.7 L716.7 63.5 L720.0 64.1 L723.2 63.5 L726.5 63.6 L729.8 64.1 L733.0 63.0 L736.1 64.1 L739.3 63.9 L742.4 65.2 L745.6 65.4 L748.8 65.5 L752.0 65.6 L755.0 66.9 L758.2 67.4 L761.2 68.7 L764.4 69.2 L767.7 69.1 L770.9 69.2 L774.0 70.0 L777.1 71.4 L780.7 70.6 L783.9 71.6 L787.0 73.1 L790.2 74.0 L793.6 73.9 L796.7 75.5 L800.0 76.0 L803.1 75.8 L805.7 74.0 L808.6 73.2 L811.4 72.0 L814.3 71.2 L817.6 71.5 L820.2 69.6 L823.4 69.7 L826.0 68.0 L829.0 68.7 L832.0 68.2 L835.0 67.6 L838.0 68.0 L840.0 70.8 L843.1 72.3 L845.8 74.3 L848.5 76.3 L850.3 79.4 L853.4 80.8 L856.0 83.0 L858.8 84.3 L861.3 86.2 L864.2 87.3 L866.3 89.6 L869.1 91.0 L871.9 92.4 L874.0 94.7 L876.6 96.4 L880.0 96.8 L882.1 99.2 L885.0 100.4 L887.0 103.1 L890.0 104.0 L893.4 104.5 L896.8 103.5 L900.2 103.6 L903.6 103.4 L907.0 104.0 L910.3 103.6 L912.9 101.2 L916.1 100.4 L919.0 99.0 L922.1 98.0 L925.1 96.7 L928.2 95.7 L931.0 94.0 L934.3 94.1 L937.1 96.0 L940.4 96.0 L943.4 97.2 L946.6 97.6 L949.8 98.3 L952.8 99.5 L955.9 100.2 L959.0 101.0 L961.9 102.6 L964.3 104.9 L967.2 106.5 L970.6 107.4 L973.1 109.5 L975.7 111.6 L978.0 114.1 L980.8 115.8 L984.0 117.0 L987.0 118.1 L990.3 118.2 L992.8 120.5 L996.0 120.9 L999.0 122.1 L1001.9 123.4 L1005.0 124.0 L1007.8 125.2 L1010.7 126.0 L1013.3 127.7 L1016.4 127.8 L1019.2 128.8 L1021.8 130.6 L1025.0 130.5 L1027.8 131.7 L1030.3 133.6 L1033.6 133.3 L1036.0 135.6 L1038.9 136.3 L1041.9 136.9 L1044.8 137.6 L1047.3 139.5 L1050.1 140.7 L1053.4 140.4 L1056.0 142.0 L1059.0 142.9 L1062.0 144.0 L1065.0 144.8 L1068.1 145.5 L1071.2 146.1 L1074.0 147.8 L1076.8 149.1 L1080.2 148.8 L1083.1 150.0 L1085.8 152.0 L1088.8 152.9 L1091.9 153.6 L1095.3 153.4 L1097.9 155.6 L1100.7 156.9 L1103.7 157.9 L1107.0 158.0 L1109.9 159.0 L1113.2 158.5 L1115.9 160.5 L1119.1 160.1 L1121.9 161.5 L1124.8 162.7 L1127.9 162.9 L1131.1 162.5 L1134.1 163.4 L1136.8 165.2 L1140.1 164.5 L1143.0 165.9 L1146.0 166.2 L1149.1 166.4 L1152.0 167.9 L1155.2 167.5 L1158.1 168.3 L1161.0 169.4 L1164.2 169.5 L1167.2 170.1 L1170.0 171.7 L1172.9 172.6 L1175.9 173.5 L1179.1 172.8 L1182.0 174.0 L1185.1 174.4 L1188.0 175.6 L1191.0 176.0 L1193.8 177.5 L1197.0 177.1 L1200.0 178.0 L1203.2 178.0 L1205.9 179.9 L1209.2 179.7 L1211.9 181.4 L1215.0 181.9 L1217.8 183.4 L1221.0 183.6 L1223.9 184.5 L1227.1 184.7 L1230.0 185.9 L1233.1 186.2 L1235.9 187.9 L1239.0 188.2 L1242.2 188.4 L1245.1 189.3 L1248.1 190.3 L1250.9 191.8 L1254.1 191.6 L1256.9 193.3 L1259.9 194.0 L1263.2 193.8 L1265.9 195.6 L1269.2 195.4 L1272.2 196.2 L1275.0 197.8 L1278.1 198.0 L1280.8 199.9 L1284 200 L1584 264 L1584 438 L1563 460 L1438 582 L1273 743 L1112 918 L786 917 L741 886 L700 850 L680.0 828.0 L678.0 825.6 L675.8 823.4 L674.4 820.5 L671.3 818.9 L670.3 815.7 L667.4 814.1 L665.5 811.6 L664.6 808.3 L662.3 806.2 L660.0 804.0 L657.6 801.6 L655.4 799.1 L654.7 795.5 L652.2 793.2 L650.5 790.3 L648.0 788.0 L645.6 785.9 L644.5 782.9 L642.3 780.7 L640.3 778.3 L638.6 775.7 L637.0 773.0 L633.6 772.0 L630.1 771.7 L626.8 770.8 L623.3 770.4 L620.0 769.0 L616.9 769.5 L614.1 771.0 L611.1 771.8 L608.4 773.5 L605.3 773.9 L602.6 775.6 L599.6 776.5 L596.8 777.7 L593.7 778.5 L591.0 780.0 L588.3 778.5 L585.5 777.4 L582.9 775.8 L580.5 773.9 L577.7 772.5 L576.0 769.6 L573.0 768.6 L570.7 766.6 L567.4 766.1 L565.3 763.7 L563.2 761.5 L560.3 760.3 L557.6 758.9 L555.1 757.2 L552.1 756.2 L549.6 754.4 L547.1 752.8 L544.7 750.8 L542.2 749.2 L540.1 746.8 L536.8 746.3 L534.3 744.5 L531.8 742.8 L529.1 741.4 L526.7 739.6 L524.0 738.0 L521.7 736.0 L518.7 735.1 L517.0 732.1 L513.9 731.3 L511.9 728.8 L509.1 727.5 L506.5 725.9 L503.8 724.6 L501.6 722.3 L498.3 721.9 L496.2 719.4 L493.3 718.4 L491.1 716.1 L488.6 714.4 L485.5 713.7 L483.0 712.0 L480.2 710.6 L477.9 708.7 L475.2 707.3 L473.0 705.0 L470.4 703.4 L468.5 700.8 L465.4 700.0 L462.8 698.3 L460.5 696.4 L457.8 694.9 L455.7 692.5 L453.2 690.8 L450.2 689.9 L447.7 688.0 L445.7 685.6 L443.5 683.5 L440.6 682.2 L437.9 680.8 L436.0 678.2 L432.5 677.9 L430.0 676.1 L428.3 673.3 L425.4 672.1 L422.5 670.9 L420.5 668.5 L418.5 666.1 L415.5 665.0 L412.8 663.5 L410.1 662.2 L407.6 660.5 L405.9 657.5 L403.0 656.4 L400.9 654.0 L397.5 653.6 L395.2 651.5 L392.5 650.1 L390.4 647.8 L387.5 646.6 L385.2 644.6 L382.9 642.6 L380.3 641.0 L378.0 639.0 L375.3 637.2 L373.2 634.9 L372.3 631.4 L369.1 630.1 L367.5 627.3 L365.2 625.1 L363.3 622.6 L360.6 620.8 L358.8 618.2 L356.4 616.1 L354.8 613.3 L353.2 610.5 L350.7 608.5 L348.9 605.9 L346.0 604.3 L343.6 602.2 L342.2 599.3 L340.0 597.0 L337.7 595.0 L335.4 592.9 L332.9 591.2 L330.8 588.8 L328.6 586.7 L326.5 584.4 L323.4 583.3 L321.3 581.1 L319.4 578.6 L316.3 577.4 L313.9 575.5 L312.0 573.0 L308.9 572.6 L305.8 572.3 L303.1 570.4 L300.1 569.6 L296.9 569.8 L293.8 569.4 L290.8 568.7 L287.9 567.7 L284.8 567.3 L282.0 566.0 L279.0 565.0 L275.9 564.9 L272.8 564.5 L270.0 563.0 L267.5 561.1 L264.3 560.6 L261.7 558.8 L259.1 557.1 L256.6 555.4 L253.6 554.3 L251.3 552.2 L248.5 550.8 L246.0 549.0 L244.0 546.6 L241.5 544.8 L239.6 542.2 L237.1 540.5 L234.9 538.3 L232.4 536.4 L230.0 534.5 L228.1 531.9 L225.7 530.1 L223.8 527.6 L221.2 525.8 L218.9 523.8 L216.1 522.3 L214.5 519.5 L211.7 518.0 L209.1 516.2 L206.7 514.2 L204.6 512.0 L202.4 509.8 L200.6 507.2 L197.9 505.6 L195.3 503.8 L193.9 500.8 L191.3 499.0 L189.0 497.0 L186.0 495.9 L183.6 494.0 L181.2 492.1 L179.0 490.0 L177.1 487.4 L174.7 485.5 L171.9 484.2 L169.0 482.9 L166.8 480.8 L164.2 479.1 L161.7 477.4 L158.9 476.0 L157.1 473.4 L154.9 471.2 L152.3 469.6 L149.2 468.7 L147.2 466.2 L144.3 464.9 L142.5 462.3 L139.7 460.9 L137.8 458.4 L135.2 456.8 L132.0 456.0 L129.7 453.9 L127.9 451.2 L125.0 450.0 L122.9 447.9 L120.7 445.7 L118.7 443.6 L117.0 441.0 L115.1 438.6 L112.5 436.9 L111.0 434.2 L108.4 432.5 L105.7 430.9 L104.5 427.9 L101.9 426.2 L99.4 424.5 L98.5 421.1 L95.2 420.1 L93.8 417.3 L91.6 415.2 L90.0 412.6 L87.3 411.0 L85.0 409.1 L83.0 406.8 L80.8 404.7 L79.2 402.1 L77.0 400.0 L74.7 397.9 L73.2 395.1 L70.4 393.4 L68.5 390.9 L66.3 388.8 L65.2 385.6 L62.9 383.4 L60.9 381.1 L58.5 379.1 L56.1 377.0 L53.7 375.0 L52.5 371.9 L50.0 370.0 L47.5 368.1 L44.5 366.9 L42.1 364.8 L39.6 363.0 L37.7 360.2 L35.4 358.0 L32.2 357.1 L30.3 354.4 L27.3 353.2 L25.2 350.7 L22.9 348.6 L20.1 347.0 L17.8 344.9 L14.9 343.6 L12.0 342.2 L10.0 339.6 L7.6 337.6 L4.7 336.3 L2.4 334.1 L0.0 332.0 L-0.3 329.0 L-0.9 326.0 L-0.3 323.0 L-0.2 320.0 L-0.0 317.0 L0.4 314.0 L-0.2 311.0 L0.9 308.0 L0.6 305.0 L0.8 302.0 L0.3 299.0 L0.3 296.0 L0.1 293.0 L0.5 290.0 L-0.2 287.0 L0.2 284.0 L0.3 281.0 L0.0 278.0 L-0.4 275.0 L-0.8 272.0 L-0.7 269.0 L-0.3 266.0 L0.1 263.0 L0.5 260.0 L0.4 257.0 L-0.3 254.0 L0.8 251.0 L-0.4 248.0 L0.4 245.0 L-0.8 242.0 L0.5 239.0 L0.3 236.0 L0.8 233.0 L0.7 230.0 L0.3 227.0 L0.6 224.0 L0.4 221.0 L0.2 218.0 L-0.5 215.0 L0.0 212.0 L0.7 209.0 L-0.5 206.0 L0.9 203.0 L0.1 200.0 L-0.2 197.0Z" fill="url(#tg)"/><g clip-path="url(#terr)"><rect x="0" y="40" width="1600" height="890" fill="url(#tg)"/><g mask="url(#zm0)"><rect x="-693" y="-799" width="2000" height="2000" transform="rotate(25 307 201)" filter="url(#tx0)"/></g><g mask="url(#zm1)"><rect x="-729" y="-555" width="2000" height="2000" transform="rotate(42 271 445)" filter="url(#tx1)"/></g><g mask="url(#zm2)"><rect x="-197" y="-879" width="2000" height="2000" transform="rotate(-62 803 121)" filter="url(#tx2)"/></g><g mask="url(#zm3)"><rect x="-237" y="-727" width="2000" height="2000" transform="rotate(-60 763 273)" filter="url(#tx3)"/></g><g mask="url(#zm4)"><rect x="-81" y="-347" width="2000" height="2000" transform="rotate(78 919 653)" filter="url(#tx4)"/></g><g mask="url(#zm5)"><rect x="-450" y="-391" width="2000" height="2000" transform="rotate(60 550 609)" filter="url(#tx5)"/></g><g mask="url(#zm6)"><rect x="233" y="-546" width="2000" height="2000" transform="rotate(100 1233 454)" filter="url(#tx6)"/></g><g mask="url(#zm7)"><rect x="519" y="-640" width="2000" height="2000" transform="rotate(-65 1519 360)" filter="url(#tx7)"/></g><defs><filter id="mbl" x="-20%" y="-20%" width="140%" height="140%"><feGaussianBlur stdDeviation="4"/></filter><mask id="mdm" maskUnits="userSpaceOnUse" x="0" y="0" width="1920" height="1015"><g filter="url(#mbl)"><path d="M55.0 165.0 L59.1 164.3 L63.2 164.4 L67.5 165.7 L71.3 163.0 L75.5 162.8 L79.6 162.7 L83.5 160.3 L87.7 161.4 L91.9 161.6 L96.1 161.9 L100.0 160.0 L104.5 160.7 L107.2 164.0 L111.1 165.5 L112.3 170.8 L116.0 172.7 L121.2 172.4 L121.7 178.6 L125.1 181.0 L129.3 182.1 L132.7 184.3 L137.4 184.8 L141.1 186.6 L143.0 191.0 L146.8 192.4 L151.4 191.4 L155.1 193.3 L158.9 194.8 L163.1 195.0 L166.3 198.3 L170.2 199.5 L174.0 201.0 L170.0 203.1 L168.6 207.4 L165.5 210.2 L163.3 213.9 L160.0 216.6 L158.2 220.5 L156.2 224.3 L150.7 225.2 L150.0 230.0 L145.2 229.8 L142.0 232.5 L138.7 235.1 L136.0 238.8 L132.7 241.2 L128.9 242.9 L125.8 245.9 L120.6 244.8 L117.8 248.4 L114.0 250.0 L110.2 247.5 L105.6 249.0 L102.0 245.4 L97.7 245.2 L92.8 248.6 L88.8 246.8 L85.3 242.6 L80.7 244.0 L77.1 240.7 L72.4 242.8 L67.9 243.6 L64.3 240.1 L60.0 240.0 L61.1 235.7 L58.3 231.7 L57.1 227.6 L58.1 223.4 L60.9 219.0 L59.6 214.9 L56.1 211.0 L56.5 206.8 L55.5 202.6 L55.0 198.5 L58.4 194.1 L55.1 190.1 L56.7 185.8 L55.8 181.7 L54.3 177.6 L56.7 173.3 L53.4 169.3Z" fill="#fff"/><path d="M114.0 250.0 L118.0 249.9 L122.0 250.6 L125.9 252.6 L130.0 250.4 L134.0 250.8 L138.0 251.3 L142.1 249.5 L146.0 251.2 L150.0 252.0 L153.9 252.9 L158.1 249.6 L162.0 250.8 L166.1 249.9 L169.9 253.6 L174.0 253.2 L178.1 250.1 L181.9 254.9 L185.9 255.0 L190.0 253.6 L194.0 253.5 L198.1 251.4 L202.1 250.8 L206.0 253.5 L210.1 251.3 L214.1 252.1 L218.0 252.5 L222.1 251.6 L226.0 253.9 L230.0 254.0 L233.9 256.1 L238.0 254.7 L242.0 255.4 L246.0 254.9 L250.0 255.0 L253.9 256.1 L258.0 255.3 L262.1 254.7 L265.8 258.5 L269.8 258.7 L273.9 258.2 L277.9 257.8 L282.1 256.1 L286.1 255.9 L290.1 256.5 L294.1 255.7 L297.9 259.4 L302.0 257.8 L305.9 260.3 L310.0 258.3 L313.9 261.4 L317.9 261.1 L322.2 257.1 L326.1 258.4 L329.9 262.1 L334.0 260.2 L337.8 263.0 L342.0 260.4 L346.1 259.0 L350.0 262.0 L353.9 263.0 L358.1 260.7 L362.1 260.1 L366.1 261.6 L369.9 265.0 L373.9 264.2 L378.1 261.3 L382.1 262.1 L386.1 261.7 L390.1 261.7 L393.9 265.7 L398.1 262.8 L402.0 265.0 L406.0 264.7 L410.1 263.7 L413.9 266.6 L418.1 263.9 L422.0 266.7 L426.1 264.3 L430.0 266.1 L434.1 265.3 L438.1 265.8 L441.9 269.6 L445.9 269.0 L450.1 266.8 L454.0 268.0 L453.3 272.9 L457.8 276.4 L458.1 281.1 L457.1 286.1 L460.0 290.0 L455.9 289.6 L452.0 292.6 L447.6 288.5 L443.9 292.7 L439.8 292.8 L435.5 290.5 L431.6 293.0 L427.6 293.5 L423.6 294.9 L419.5 295.2 L415.3 293.0 L411.3 295.0 L407.1 293.6 L403.2 295.0 L399.1 294.9 L394.8 292.7 L390.9 295.4 L386.8 295.3 L382.7 294.1 L378.9 297.8 L374.8 298.3 L370.5 294.8 L366.4 295.6 L362.6 298.7 L358.6 299.4 L354.3 296.9 L350.1 296.2 L346.4 300.3 L342.0 296.8 L338.0 297.5 L334.0 299.2 L330.0 300.0 L325.9 300.1 L321.7 301.3 L317.6 301.4 L313.9 296.4 L309.6 299.7 L305.7 297.1 L301.5 299.0 L297.6 295.9 L293.5 296.7 L289.3 297.9 L285.2 298.2 L281.3 295.2 L277.0 298.1 L273.0 297.0 L269.1 295.0 L265.1 293.2 L261.0 294.1 L256.8 295.5 L253.0 292.0 L248.6 295.2 L244.5 295.8 L240.5 294.3 L236.5 293.1 L232.3 294.7 L228.3 293.8 L224.3 292.5 L220.3 291.2 L216.1 293.1 L212.1 291.6 L208.3 288.7 L204.2 287.9 L200.0 290.0 L196.6 287.5 L192.9 285.7 L189.0 284.4 L184.3 284.7 L180.3 283.4 L176.5 281.8 L174.7 276.0 L170.5 275.2 L167.3 272.2 L161.6 274.8 L159.2 270.3 L155.1 269.2 L151.9 266.3 L147.3 266.5 L145.0 261.6 L139.3 264.1 L136.5 260.2 L133.2 257.6 L129.8 255.1 L125.7 254.1 L121.9 252.6 L118.4 250.4Z" fill="#fff"/><path d="M200.0 470.0 L204.1 470.1 L208.1 470.9 L212.0 473.1 L216.3 471.1 L220.3 471.6 L224.3 472.3 L228.6 470.6 L232.5 472.6 L236.5 473.5 L240.5 474.6 L244.8 471.4 L248.8 472.8 L253.0 472.0 L256.8 475.9 L260.9 475.7 L265.2 472.7 L268.9 477.7 L272.9 477.9 L277.1 476.7 L281.2 476.8 L285.4 474.9 L289.6 474.5 L293.4 477.3 L297.7 475.3 L301.7 476.3 L305.7 476.8 L309.9 476.1 L313.8 478.6 L317.8 478.8 L321.7 481.1 L325.9 479.8 L330.0 480.0 L332.7 483.0 L336.3 485.0 L338.9 488.1 L342.6 489.8 L346.3 491.6 L347.2 496.9 L350.3 499.4 L353.9 501.3 L357.5 503.3 L361.8 504.3 L365.2 506.4 L368.2 509.2 L372.0 510.8 L372.9 516.0 L377.2 517.1 L378.9 521.4 L383.5 522.1 L384.8 526.8 L388.3 528.9 L394.1 528.0 L396.5 531.4 L397.5 536.6 L402.0 537.4 L403.5 541.9 L408.4 542.1 L412.6 543.3 L414.0 548.0 L416.6 551.1 L421.3 551.6 L425.0 553.4 L427.4 556.8 L430.0 560.0 L429.7 564.7 L432.5 567.8 L437.2 570.1 L438.4 574.0 L440.9 577.3 L442.9 580.8 L441.4 586.1 L446.0 588.4 L446.1 592.9 L448.4 596.2 L451.4 599.3 L450.8 604.2 L455.3 606.4 L454.8 611.2 L459.0 613.7 L459.4 618.0 L462.2 621.2 L463.8 624.9 L462.4 630.1 L465.0 633.4 L469.1 635.9 L470.0 640.0 L466.0 638.0 L462.0 641.4 L458.0 640.4 L454.0 638.1 L450.0 639.1 L446.0 641.7 L442.0 637.2 L438.0 641.1 L434.0 640.8 L430.0 638.2 L426.0 640.4 L422.0 640.5 L418.0 641.6 L414.0 641.4 L410.0 638.9 L406.0 640.6 L402.0 638.8 L398.0 639.9 L394.0 639.4 L390.0 636.8 L386.0 639.2 L382.0 638.7 L378.0 639.0 L376.4 634.8 L371.1 634.4 L368.2 631.6 L368.0 626.1 L364.8 623.5 L359.9 622.7 L356.8 620.0 L355.9 615.2 L353.7 611.6 L348.2 611.4 L348.0 605.8 L344.9 603.2 L341.1 601.3 L337.5 599.1 L333.6 597.4 L330.5 594.7 L330.9 588.6 L325.4 588.3 L324.2 583.8 L319.7 582.5 L318.9 577.6 L315.2 575.5 L312.0 573.0 L307.8 572.6 L303.7 571.7 L300.7 567.7 L295.7 569.4 L292.1 567.2 L288.8 564.3 L285.4 561.5 L281.1 561.2 L276.7 561.3 L273.9 556.9 L268.8 558.9 L264.6 558.3 L261.1 555.7 L257.6 553.5 L253.0 553.9 L249.3 551.9 L246.0 549.0 L243.3 545.7 L242.1 541.6 L238.1 539.2 L237.0 535.0 L237.2 530.1 L235.5 526.2 L232.0 523.5 L230.1 519.8 L227.5 516.5 L223.5 514.0 L221.0 510.7 L218.8 507.1 L220.6 501.3 L217.6 498.2 L216.6 494.0 L210.5 492.7 L211.0 487.6 L208.3 484.4 L207.3 480.2 L203.4 477.6 L204.2 472.3Z" fill="#fff"/><path d="M435.0 571.0 L439.0 570.2 L443.1 570.2 L447.4 571.5 L451.2 568.7 L455.2 568.4 L459.3 568.3 L463.1 565.8 L467.4 566.9 L471.5 566.9 L475.7 567.2 L479.3 563.2 L483.4 563.7 L487.4 562.2 L491.9 565.2 L495.8 564.1 L499.5 560.3 L504.1 564.5 L508.2 563.9 L512.0 561.8 L516.0 561.1 L520.0 560.0 L524.4 559.1 L528.6 559.1 L532.2 562.4 L536.7 560.8 L540.6 562.2 L544.7 563.2 L548.9 562.9 L552.6 565.7 L556.7 566.4 L560.4 569.1 L564.8 568.2 L568.8 569.6 L573.0 569.6 L576.9 571.2 L581.1 570.9 L585.4 570.8 L588.8 575.0 L592.9 575.8 L597.1 575.7 L601.3 575.8 L605.7 574.6 L609.9 575.0 L613.9 576.0 L618.2 575.7 L621.6 579.8 L626.0 578.8 L630.0 580.0 L629.0 584.3 L631.9 587.9 L629.7 592.4 L631.0 596.3 L635.8 599.6 L635.4 603.8 L632.6 608.3 L635.5 612.0 L633.6 616.4 L637.2 619.9 L639.4 623.6 L637.4 628.1 L637.3 632.2 L640.5 635.8 L640.0 640.0 L636.3 642.5 L632.1 641.8 L627.7 639.2 L623.8 640.7 L620.2 644.4 L616.2 644.3 L612.2 645.5 L608.3 646.2 L603.8 643.0 L600.2 646.6 L596.0 645.2 L592.0 646.3 L588.2 648.0 L583.9 645.8 L580.2 649.3 L575.9 647.3 L572.2 650.4 L568.0 649.4 L564.2 650.9 L560.0 650.0 L555.8 650.7 L552.1 646.8 L547.9 647.1 L543.5 649.2 L539.8 645.8 L535.3 648.7 L531.3 647.3 L527.5 644.6 L523.3 645.2 L518.9 647.4 L515.3 642.6 L510.8 646.0 L506.7 645.3 L502.9 642.3 L498.5 644.0 L494.4 643.7 L490.2 644.4 L486.1 643.9 L482.3 641.0 L478.0 642.2 L474.1 640.0 L470.0 640.0 L467.6 636.7 L466.1 632.8 L466.5 628.1 L462.6 625.5 L461.1 621.7 L460.6 617.4 L455.7 615.3 L453.7 611.7 L455.2 606.4 L453.0 603.0 L448.6 600.6 L446.5 597.1 L447.1 592.2 L446.2 588.2 L441.0 586.2 L442.5 580.9 L440.4 577.4 L437.3 574.4Z" fill="#fff"/><path d="M890.0 104.0 L894.0 102.8 L898.3 102.3 L902.8 103.1 L906.4 99.8 L910.5 99.0 L914.7 98.4 L918.3 95.5 L922.8 96.1 L927.1 95.6 L931.0 94.0 L934.2 97.0 L939.4 95.4 L942.7 98.0 L947.0 98.7 L949.3 103.6 L953.3 104.7 L958.4 103.4 L960.3 109.4 L964.1 110.9 L968.6 111.1 L972.4 112.6 L977.1 112.1 L981.2 113.1 L984.0 117.0 L988.2 118.5 L993.1 117.7 L997.1 119.7 L1001.2 121.4 L1005.0 124.0 L1004.4 128.9 L1000.1 131.1 L997.7 134.7 L993.6 137.0 L992.4 141.4 L990.0 145.0 L986.0 144.4 L982.0 145.3 L978.0 144.6 L974.0 145.7 L970.0 146.8 L965.9 143.3 L961.9 143.5 L957.9 144.4 L954.0 145.2 L950.0 147.3 L946.0 147.8 L942.0 147.7 L938.1 148.9 L934.0 145.5 L930.0 147.0 L925.9 146.1 L922.8 142.7 L918.1 143.5 L915.2 139.5 L911.1 138.7 L905.9 141.4 L902.3 139.0 L899.6 134.4 L895.0 135.0 L894.1 130.6 L895.9 125.8 L892.4 121.8 L890.0 117.6 L892.1 112.8 L892.1 108.2Z" fill="#fff"/><path d="M533.0 152.0 L536.7 150.1 L540.8 148.9 L545.3 148.9 L548.3 145.2 L552.2 143.7 L556.2 142.4 L559.2 138.9 L563.7 138.7 L567.8 137.6 L571.9 136.7 L574.4 131.8 L579.0 132.0 L583.1 130.1 L587.3 128.2 L592.3 130.8 L596.5 129.4 L600.2 125.3 L605.5 129.0 L609.8 128.1 L613.8 125.6 L618.0 124.0 L622.0 122.7 L624.9 118.9 L628.4 116.4 L633.3 116.9 L636.1 113.0 L640.1 111.8 L644.0 110.2 L647.4 107.5 L652.1 107.6 L656.0 106.0 L656.7 110.0 L655.0 114.2 L657.0 118.0 L656.8 122.1 L657.8 126.0 L657.4 130.1 L658.8 134.0 L660.0 137.9 L656.8 142.2 L657.2 146.2 L660.0 150.0 L655.5 149.7 L651.7 151.7 L648.3 154.9 L644.4 156.6 L640.3 157.7 L636.7 160.0 L631.6 158.1 L628.2 161.1 L623.5 160.4 L620.2 163.9 L615.3 162.5 L611.5 164.4 L608.8 169.7 L604.5 170.0 L600.0 170.0 L595.7 168.6 L592.0 171.5 L587.6 169.6 L584.1 173.2 L580.4 175.4 L575.9 173.4 L571.8 173.3 L568.2 176.5 L564.3 178.0 L560.1 177.5 L555.6 175.0 L551.8 176.7 L548.3 180.6 L544.2 180.6 L540.0 180.0 L537.1 176.5 L535.9 172.5 L538.4 167.6 L534.4 164.4 L535.3 159.9 L533.7 156.1Z" fill="#fff"/><path d="M953.0 218.0 L956.9 216.9 L960.9 216.6 L965.2 217.6 L968.6 214.5 L972.6 213.9 L976.6 213.4 L980.1 210.6 L984.3 211.4 L988.4 211.1 L992.5 211.1 L995.7 206.8 L1000.0 208.0 L1004.2 208.4 L1008.4 208.8 L1011.1 213.6 L1015.2 214.4 L1020.1 212.7 L1022.4 218.5 L1026.3 219.8 L1030.7 219.7 L1034.7 220.9 L1039.3 220.1 L1043.4 220.8 L1046.5 224.6 L1051.1 223.8 L1054.8 225.8 L1058.6 227.4 L1062.0 230.0 L1058.4 233.8 L1053.3 233.4 L1048.9 235.1 L1043.8 234.8 L1040.0 238.0 L1036.0 237.8 L1032.0 237.0 L1028.0 237.6 L1024.0 236.7 L1020.0 237.5 L1016.0 238.3 L1012.1 234.6 L1008.1 234.5 L1004.1 235.1 L1000.0 235.6 L996.0 237.5 L992.0 237.8 L988.0 237.3 L983.9 238.3 L980.0 236.0 L977.4 232.6 L973.0 231.9 L970.8 227.8 L966.2 227.5 L964.4 222.8 L960.7 221.1 L955.0 222.3Z" fill="#fff"/><path d="M620.0 250.0 L624.0 249.3 L628.0 249.3 L632.3 250.6 L636.0 247.8 L640.0 247.5 L644.1 247.4 L647.8 244.9 L652.0 246.1 L656.1 246.1 L660.2 246.5 L663.7 242.5 L667.9 243.0 L671.7 241.5 L676.2 244.5 L680.1 243.5 L683.7 239.7 L688.3 243.9 L692.3 243.3 L696.1 241.3 L700.0 240.0 L696.9 242.8 L696.1 247.4 L694.0 251.0 L689.4 252.5 L688.5 257.2 L685.4 259.9 L682.6 262.9 L680.8 266.8 L676.5 268.5 L673.9 271.8 L669.7 273.6 L668.3 277.8 L665.3 280.6 L663.2 284.2 L659.9 286.8 L658.1 290.7 L656.1 294.4 L650.7 295.2 L650.0 300.0 L646.3 296.7 L642.0 296.7 L637.7 296.5 L633.2 297.6 L628.9 297.2 L624.8 296.0 L620.4 296.3 L616.9 292.0 L612.4 293.0 L608.7 290.0 L604.1 291.4 L600.0 290.0 L603.9 287.4 L605.2 283.5 L603.2 278.0 L606.0 274.8 L610.9 272.7 L610.8 268.1 L614.9 265.6 L614.1 260.7 L614.5 256.3 L618.8 253.9Z" fill="#fff"/><path d="M1214.0 232.0 L1218.1 232.3 L1222.1 233.3 L1225.9 235.6 L1230.3 233.8 L1234.3 234.5 L1238.3 235.4 L1242.6 233.9 L1246.5 236.1 L1250.5 237.1 L1254.4 238.5 L1258.9 235.5 L1262.9 237.0 L1267.1 236.5 L1270.7 240.5 L1274.8 240.5 L1279.0 240.0 L1281.3 244.3 L1276.6 248.7 L1279.0 253.0 L1275.0 250.5 L1270.9 251.9 L1266.8 251.9 L1262.7 254.0 L1258.6 254.5 L1254.6 251.7 L1250.5 253.9 L1246.4 253.0 L1242.4 252.6 L1238.3 253.5 L1234.3 251.1 L1230.2 251.0 L1226.3 248.9 L1222.1 250.3 L1218.1 249.5 L1214.0 250.0 L1214.0 245.5 L1214.8 241.0 L1213.8 236.5Z" fill="#fff"/><path d="M1211.0 255.0 L1215.0 254.1 L1219.0 254.0 L1223.3 255.2 L1227.0 252.3 L1231.0 251.9 L1235.1 251.7 L1238.8 249.1 L1243.0 250.0 L1242.9 254.5 L1242.4 259.0 L1241.5 263.5 L1243.0 268.0 L1239.0 270.0 L1235.0 269.0 L1231.0 270.0 L1227.0 266.5 L1223.0 267.0 L1219.0 270.3 L1215.0 265.6 L1211.0 268.0 L1213.3 263.7 L1211.8 259.3Z" fill="#fff"/><path d="M1098.0 250.0 L1101.7 248.5 L1105.7 247.7 L1110.1 248.2 L1113.2 244.7 L1117.1 243.7 L1121.0 242.8 L1124.2 239.6 L1128.6 239.9 L1132.6 239.2 L1136.6 238.7 L1140.0 236.0 L1144.7 236.1 L1148.0 238.9 L1152.3 239.9 L1154.5 245.0 L1158.6 246.4 L1163.8 245.4 L1165.5 251.5 L1169.4 253.3 L1173.9 253.8 L1178.0 255.0 L1174.8 259.0 L1174.1 264.6 L1170.0 268.0 L1165.9 270.4 L1161.8 267.9 L1157.6 270.2 L1153.5 269.5 L1149.4 269.3 L1145.3 270.3 L1141.2 268.2 L1137.1 268.3 L1132.9 266.3 L1128.8 267.9 L1124.7 267.3 L1120.6 268.0 L1116.5 267.2 L1112.4 268.2 L1108.2 269.1 L1104.1 265.5 L1100.0 268.0 L1102.0 263.2 L1100.7 258.8 L1099.5 254.4Z" fill="#fff"/><path d="M1104.0 215.0 L1107.9 213.1 L1112.1 211.9 L1116.8 212.0 L1119.9 208.2 L1124.0 206.7 L1128.2 205.4 L1131.4 201.9 L1136.0 201.7 L1140.0 200.0 L1142.4 203.4 L1144.7 207.0 L1150.1 207.6 L1152.2 211.3 L1155.9 213.6 L1156.1 219.1 L1159.4 221.7 L1163.0 224.0 L1158.8 226.3 L1154.6 221.6 L1150.4 221.7 L1146.1 223.2 L1141.9 223.4 L1137.7 225.7 L1133.5 226.4 L1129.3 223.9 L1125.1 226.2 L1120.9 225.5 L1116.6 225.3 L1112.4 226.3 L1108.2 224.2 L1104.0 224.0 L1103.7 219.5Z" fill="#fff"/><path d="M1149.0 185.0 L1152.6 183.2 L1156.5 182.1 L1161.0 182.2 L1163.8 178.6 L1167.6 177.2 L1171.5 176.0 L1175.0 174.0 L1179.1 175.7 L1181.0 179.8 L1183.6 183.0 L1186.0 186.5 L1191.4 186.8 L1193.7 190.4 L1196.0 194.0 L1191.8 196.0 L1187.6 192.5 L1183.5 193.0 L1179.3 196.3 L1175.1 191.6 L1170.9 191.7 L1166.7 193.2 L1162.5 193.4 L1158.4 195.7 L1154.2 196.4 L1150.0 194.0 L1149.6 189.5Z" fill="#fff"/><path d="M1060.0 165.0 L1064.2 163.9 L1068.6 163.6 L1073.3 164.5 L1077.1 161.4 L1081.4 160.8 L1085.8 160.3 L1090.0 159.0 L1094.5 159.8 L1097.4 163.3 L1100.8 166.0 L1104.1 168.8 L1109.6 168.0 L1112.8 171.0 L1116.0 174.0 L1112.0 176.0 L1108.0 172.5 L1104.0 173.0 L1100.0 176.3 L1096.0 171.6 L1092.0 171.7 L1088.0 173.2 L1084.0 173.4 L1080.0 175.7 L1076.0 176.4 L1072.0 173.9 L1068.0 176.2 L1064.0 175.5 L1060.0 174.0 L1058.7 169.5Z" fill="#fff"/><path d="M1288.0 232.0 L1291.5 229.5 L1295.5 227.6 L1300.1 226.8 L1302.6 222.5 L1306.4 220.4 L1310.0 218.0 L1312.8 221.0 L1317.3 222.0 L1319.3 225.9 L1322.1 229.0 L1324.7 232.2 L1330.1 232.2 L1332.5 235.6 L1335.0 239.0 L1330.9 241.0 L1326.8 237.5 L1322.7 238.0 L1318.6 241.3 L1314.5 236.6 L1310.5 236.7 L1306.4 238.2 L1302.3 238.4 L1298.2 240.7 L1294.1 241.4 L1290.0 239.0Z" fill="#fff"/><path d="M1314.0 250.0 L1317.9 247.8 L1322.1 246.3 L1326.9 245.9 L1330.0 242.0 L1332.6 245.1 L1335.0 248.5 L1337.2 252.0 L1341.2 254.0 L1342.5 258.3 L1344.5 261.9 L1346.3 265.6 L1350.0 268.0 L1345.6 269.2 L1341.8 267.5 L1337.6 267.8 L1334.3 263.5 L1330.2 263.3 L1325.6 265.8 L1322.4 260.4 L1318.0 262.0 L1318.9 257.3 L1316.1 253.8Z" fill="#fff"/><path d="M1178.0 295.0 L1181.8 293.1 L1185.8 291.8 L1190.4 291.8 L1193.4 288.0 L1197.3 286.5 L1201.3 285.1 L1205.0 283.0 L1209.3 284.8 L1211.5 289.0 L1214.3 292.5 L1217.0 296.1 L1222.6 296.5 L1225.2 300.3 L1229.1 302.5 L1231.0 307.0 L1226.8 305.5 L1222.5 306.0 L1218.2 309.3 L1214.0 304.6 L1209.8 304.7 L1205.5 306.2 L1201.2 306.4 L1197.0 308.7 L1192.8 309.4 L1188.5 306.9 L1184.2 309.2 L1180.0 307.0 L1177.8 303.3 L1177.4 299.2Z" fill="#fff"/><path d="M1533.0 290.0 L1537.2 289.4 L1541.5 289.6 L1545.9 291.1 L1550.0 288.5 L1554.3 288.4 L1558.5 288.4 L1562.6 286.1 L1567.0 287.4 L1571.3 287.6 L1575.6 288.1 L1579.6 284.3 L1584.0 286.0 L1585.0 290.3 L1586.0 294.7 L1582.5 299.0 L1583.0 303.3 L1586.3 307.7 L1584.0 312.0 L1580.1 309.4 L1576.1 309.3 L1572.0 310.7 L1568.0 310.7 L1563.9 312.8 L1559.9 313.3 L1556.0 310.6 L1551.9 312.7 L1547.9 311.9 L1543.9 311.5 L1540.0 310.0 L1536.4 306.8 L1537.0 302.1 L1535.5 298.1 L1536.0 293.4Z" fill="#fff"/><path d="M1480.0 380.0 L1484.0 379.3 L1488.0 379.3 L1492.3 380.6 L1496.0 377.8 L1500.0 377.5 L1504.1 377.4 L1507.8 374.9 L1512.0 376.1 L1516.1 376.1 L1520.0 375.0 L1523.2 378.0 L1528.3 376.5 L1531.6 379.1 L1535.8 379.8 L1538.1 384.7 L1542.1 385.9 L1547.2 384.6 L1549.0 390.5 L1552.8 392.1 L1557.2 392.4 L1561.0 393.9 L1565.0 395.0 L1565.0 400.5 L1564.0 405.8 L1560.0 410.0 L1555.9 409.6 L1551.6 411.6 L1547.5 410.7 L1543.4 410.1 L1539.2 410.9 L1535.3 408.4 L1531.2 408.2 L1527.2 405.9 L1522.9 407.3 L1518.9 406.4 L1514.7 406.8 L1510.6 405.7 L1506.5 406.4 L1502.3 407.0 L1498.4 403.1 L1494.3 402.8 L1490.0 405.0 L1489.9 400.2 L1487.6 396.3 L1484.1 392.8 L1482.1 388.8 L1480.7 384.6Z" fill="#fff"/><path d="M1444.0 277.0 L1447.8 278.3 L1451.4 280.3 L1454.4 283.6 L1459.0 283.0 L1462.7 284.7 L1466.2 286.6 L1470.7 286.3 L1473.8 289.3 L1477.4 291.4 L1480.8 293.7 L1485.8 292.0 L1489.2 294.5 L1493.3 295.0 L1495.7 299.9 L1500.0 300.0 L1501.8 303.8 L1506.8 304.9 L1505.7 311.0 L1508.3 314.1 L1512.0 316.3 L1514.7 319.3 L1519.0 321.0 L1522.1 323.7 L1522.6 328.5 L1527.0 330.2 L1529.0 333.8 L1531.3 337.1 L1534.7 339.6 L1535.5 344.1 L1538.1 347.2 L1539.1 351.6 L1542.9 353.7 L1544.9 357.3 L1548.0 360.0 L1548.0 364.1 L1547.2 368.2 L1548.2 372.3 L1549.1 376.4 L1545.5 380.5 L1545.5 384.6 L1546.3 388.7 L1547.0 392.8 L1548.9 396.9 L1548.0 401.0 L1543.7 400.9 L1539.9 399.2 L1535.7 398.8 L1533.0 394.1 L1528.5 394.5 L1525.4 391.0 L1520.7 391.7 L1517.8 387.6 L1513.8 386.8 L1508.5 389.3 L1505.0 387.0 L1502.3 382.3 L1497.7 382.9 L1494.7 379.1 L1490.0 380.0 L1486.7 377.4 L1482.6 375.6 L1481.6 370.7 L1479.2 367.3 L1474.5 366.1 L1470.9 363.8 L1468.8 360.0 L1468.1 354.8 L1464.4 352.6 L1459.2 351.9 L1456.8 348.5 L1453.3 346.1 L1450.2 343.3 L1449.9 337.8 L1444.7 337.0 L1443.2 332.7 L1440.0 330.0 L1440.0 325.9 L1439.1 321.7 L1442.1 317.9 L1439.4 313.6 L1442.3 309.7 L1439.9 305.4 L1441.8 301.4 L1441.0 297.3 L1441.6 293.2 L1445.4 289.4 L1444.9 285.3 L1442.7 281.0Z" fill="#fff"/><path d="M1178.0 425.0 L1182.0 423.9 L1186.1 423.6 L1190.4 424.6 L1194.0 421.5 L1198.0 420.9 L1202.1 420.4 L1205.7 417.6 L1210.0 418.4 L1214.1 418.1 L1218.3 418.1 L1221.6 413.8 L1225.8 414.0 L1229.6 412.2 L1234.3 414.8 L1238.2 413.4 L1241.5 409.4 L1246.5 413.2 L1250.0 410.0 L1252.9 413.7 L1257.3 413.7 L1261.2 415.0 L1265.8 414.4 L1269.9 415.2 L1272.7 419.1 L1277.4 418.5 L1281.0 420.6 L1284.7 422.3 L1288.9 422.8 L1291.9 426.3 L1295.7 427.7 L1298.8 431.1 L1303.2 431.1 L1306.7 433.2 L1310.8 434.0 L1314.3 436.3 L1318.5 436.8 L1322.6 437.5 L1326.0 440.0 L1320.8 439.3 L1316.4 441.0 L1312.4 443.4 L1308.3 445.7 L1304.7 449.2 L1300.0 450.0 L1295.9 451.4 L1291.9 451.1 L1287.8 452.1 L1283.7 448.7 L1279.6 450.5 L1275.6 448.3 L1271.5 450.6 L1267.4 447.7 L1263.3 448.3 L1259.3 452.5 L1255.2 451.5 L1251.1 447.9 L1247.0 450.2 L1243.0 447.6 L1238.9 450.5 L1234.8 452.1 L1230.7 449.4 L1226.7 448.6 L1222.6 451.2 L1218.5 452.1 L1214.4 450.8 L1210.4 447.7 L1206.3 448.7 L1202.2 451.9 L1198.1 451.3 L1194.1 452.0 L1190.0 450.0 L1186.0 446.8 L1187.3 441.0 L1182.5 438.2 L1182.3 433.2 L1179.8 429.3Z" fill="#fff"/><path d="M1060.0 400.0 L1064.0 399.2 L1068.0 399.2 L1072.3 400.5 L1076.0 397.7 L1080.0 397.4 L1084.1 397.2 L1087.8 394.7 L1092.0 395.8 L1096.1 395.8 L1100.2 396.1 L1103.7 392.1 L1107.9 392.6 L1111.7 391.0 L1116.2 394.1 L1120.0 392.0 L1123.2 394.6 L1128.2 393.4 L1129.8 399.4 L1133.5 401.1 L1137.8 401.4 L1141.5 403.0 L1146.1 402.7 L1150.1 403.8 L1152.6 407.9 L1157.2 407.5 L1160.5 409.9 L1164.1 411.8 L1168.1 412.6 L1170.8 416.3 L1174.5 418.0 L1178.0 420.0 L1173.9 421.8 L1172.3 425.9 L1169.1 428.5 L1166.8 432.0 L1163.4 434.4 L1161.4 438.1 L1159.2 441.8 L1153.8 442.3 L1151.0 445.3 L1150.0 450.0 L1146.0 448.3 L1142.0 449.0 L1138.0 450.9 L1134.0 451.4 L1130.0 451.1 L1126.0 452.1 L1122.0 448.7 L1118.0 450.5 L1114.0 448.3 L1110.0 450.6 L1106.0 447.7 L1102.0 448.3 L1098.0 452.5 L1094.0 451.5 L1090.0 447.9 L1086.0 450.2 L1082.0 447.6 L1078.0 450.5 L1074.0 452.1 L1070.0 450.0 L1069.8 445.7 L1069.7 441.4 L1066.4 437.7 L1064.6 433.7 L1065.0 429.3 L1067.3 424.5 L1065.4 420.6 L1061.5 417.0 L1061.3 412.7 L1059.7 408.7 L1058.7 404.6Z" fill="#fff"/><path d="M1173.0 486.0 L1176.3 488.3 L1179.2 491.3 L1181.2 495.2 L1185.8 495.9 L1188.9 498.6 L1191.8 501.5 L1196.3 502.4 L1198.4 506.2 L1201.3 509.2 L1203.9 512.3 L1209.3 512.1 L1211.8 515.5 L1215.7 517.1 L1216.6 522.5 L1220.2 524.5 L1225.4 524.5 L1225.7 530.7 L1228.9 533.2 L1233.0 534.5 L1236.3 536.8 L1241.0 537.5 L1244.6 539.5 L1246.2 544.0 L1250.8 544.7 L1253.6 547.7 L1256.6 550.5 L1259.0 554.0 L1255.1 556.7 L1250.8 555.0 L1246.7 555.5 L1242.4 553.9 L1238.5 555.9 L1234.3 555.7 L1230.3 556.8 L1226.1 556.3 L1222.1 557.7 L1218.0 559.0 L1213.6 555.8 L1209.5 556.2 L1205.4 557.4 L1201.4 558.5 L1197.5 560.8 L1193.4 561.6 L1189.3 561.7 L1185.3 563.2 L1180.8 560.1 L1176.9 562.4 L1172.6 560.5 L1168.7 563.2 L1164.3 560.8 L1160.3 561.7 L1156.6 566.3 L1152.4 565.7 L1147.9 562.6 L1144.0 565.0 L1145.2 561.2 L1149.0 558.3 L1147.7 553.5 L1147.5 549.2 L1151.5 546.4 L1153.6 542.9 L1152.6 538.3 L1153.1 534.2 L1155.6 530.9 L1160.0 528.2 L1160.4 524.1 L1158.8 519.2 L1160.8 515.7 L1161.5 511.6 L1162.6 507.8 L1167.5 505.3 L1166.0 500.5 L1169.1 497.4 L1170.0 493.4 L1170.2 489.2Z" fill="#fff"/><path d="M1022.0 527.0 L1025.3 529.3 L1028.2 532.3 L1030.2 536.2 L1034.8 536.9 L1037.8 539.6 L1040.8 542.4 L1045.2 543.4 L1047.3 547.2 L1050.1 550.2 L1052.8 553.3 L1058.2 553.1 L1060.7 556.4 L1064.5 558.1 L1065.5 563.5 L1069.0 565.5 L1074.2 565.5 L1074.4 571.7 L1077.7 574.1 L1081.8 575.4 L1085.1 577.8 L1089.7 578.5 L1093.3 580.5 L1094.9 585.0 L1099.5 585.7 L1102.3 588.7 L1105.3 591.4 L1109.1 593.1 L1110.9 597.3 L1114.0 600.0 L1110.4 602.4 L1105.6 602.7 L1102.6 606.2 L1098.5 607.8 L1095.1 610.6 L1090.9 612.0 L1087.7 615.0 L1084.3 617.9 L1080.0 619.0 L1076.4 616.0 L1072.4 615.4 L1068.3 615.6 L1064.3 615.7 L1060.0 617.1 L1056.0 617.0 L1052.1 616.1 L1047.9 616.7 L1044.5 612.7 L1040.2 613.9 L1036.6 611.1 L1032.3 612.9 L1028.7 609.5 L1024.7 609.5 L1020.1 613.1 L1016.3 611.5 L1012.8 607.5 L1008.5 609.1 L1004.9 606.0 L1000.5 608.3 L996.3 609.4 L992.7 606.1 L988.9 604.8 L984.5 606.7 L980.4 607.1 L976.6 605.3 L973.1 601.6 L969.0 602.1 L964.6 604.7 L960.7 603.5 L956.6 603.7 L952.6 603.3 L949.2 599.1 L945.0 600.0 L946.8 595.9 L951.0 594.4 L953.6 591.1 L955.6 587.2 L960.4 586.2 L961.2 581.2 L965.9 580.1 L967.0 575.3 L971.0 573.5 L973.2 569.8 L976.3 567.1 L980.0 565.0 L984.6 564.0 L987.0 560.7 L988.3 556.1 L993.3 555.6 L994.0 550.4 L997.6 548.3 L1002.2 547.3 L1004.5 543.8 L1005.7 539.1 L1011.6 539.7 L1012.0 534.1 L1015.2 531.5 L1019.9 530.7Z" fill="#fff"/><path d="M940.0 600.0 L943.4 602.4 L946.2 605.4 L948.3 609.5 L953.0 610.3 L956.1 613.1 L959.0 616.0 L963.5 617.0 L965.7 620.9 L968.5 624.0 L971.3 627.2 L976.7 627.1 L979.2 630.5 L983.1 632.3 L984.1 637.7 L987.7 639.9 L992.9 640.0 L993.2 646.2 L996.4 648.8 L1000.6 650.2 L1004.0 652.6 L1008.6 653.5 L1012.3 655.5 L1014.0 660.0 L1012.5 664.0 L1013.3 668.7 L1011.3 672.5 L1009.6 676.4 L1009.2 680.8 L1005.8 684.1 L1004.5 688.1 L1001.2 691.4 L1001.3 696.0 L1000.0 700.0 L996.1 699.0 L992.0 699.3 L988.1 698.2 L984.0 698.9 L979.9 699.4 L976.2 695.5 L972.2 695.2 L968.1 695.6 L964.1 696.0 L959.9 697.6 L955.9 697.7 L951.9 697.1 L947.8 697.8 L944.1 694.0 L940.0 695.5 L936.1 692.9 L932.0 694.9 L928.2 691.7 L924.1 691.9 L919.8 695.8 L915.9 694.4 L912.2 690.6 L908.0 692.5 L904.2 689.6 L900.0 692.2 L895.8 693.5 L892.1 690.4 L888.1 689.3 L883.9 691.5 L880.0 690.0 L879.5 685.4 L882.1 682.0 L886.5 679.2 L886.9 675.0 L885.4 670.1 L887.4 666.4 L888.1 662.3 L889.4 658.4 L894.2 655.8 L892.8 650.9 L896.0 647.7 L896.9 643.6 L897.1 639.3 L900.0 636.0 L903.9 634.1 L904.9 629.1 L909.7 628.2 L911.0 623.5 L915.1 621.9 L917.5 618.3 L920.8 615.8 L926.2 615.6 L928.7 612.2 L930.1 607.6 L935.1 607.0 L936.0 601.7Z" fill="#fff"/><path d="M1200.0 421.0 L1204.0 421.4 L1208.0 422.5 L1211.7 424.9 L1216.0 423.2 L1220.0 424.0 L1223.9 425.0 L1228.2 423.6 L1232.0 425.9 L1235.9 427.0 L1239.8 428.4 L1244.3 425.6 L1248.1 427.2 L1252.3 426.8 L1255.8 430.9 L1260.0 430.0 L1263.5 432.4 L1268.5 431.0 L1270.6 436.9 L1274.5 438.3 L1278.9 438.4 L1282.9 439.8 L1287.6 439.2 L1291.7 440.1 L1294.6 444.0 L1299.3 443.3 L1302.9 445.5 L1306.6 447.3 L1310.0 450.0 L1312.3 454.5 L1310.2 459.0 L1310.3 463.5 L1310.0 468.0 L1306.1 465.9 L1301.8 467.2 L1297.8 466.2 L1293.6 466.5 L1289.6 465.4 L1285.4 466.0 L1281.3 466.6 L1277.5 462.6 L1273.4 462.3 L1269.2 462.7 L1265.1 463.0 L1260.8 464.6 L1256.7 464.6 L1252.6 464.0 L1248.4 464.7 L1244.7 460.9 L1240.4 462.3 L1236.5 459.7 L1232.2 461.7 L1228.4 458.4 L1224.2 458.6 L1220.0 460.0 L1215.8 457.2 L1214.7 452.9 L1215.8 447.4 L1211.9 444.5 L1212.1 439.4 L1207.5 436.8 L1204.1 433.7 L1204.6 428.5 L1203.2 424.3Z" fill="#fff"/></g></mask><filter id="mrel" x="0" y="0" width="100%" height="100%" filterUnits="objectBoundingBox" color-interpolation-filters="sRGB"><feTurbulence type="turbulence" baseFrequency="0.01 0.06" numOctaves="3" seed="21" result="n"/><feColorMatrix in="n" type="matrix" values="0 0 0 0 0  0 0 0 0 0  0 0 0 0 0  -1.3 0 0 0 1" result="h"/><feDiffuseLighting in="h" surfaceScale="2.5" diffuseConstant="1" lighting-color="#ffffff" result="lit"><feDistantLight azimuth="240" elevation="50"/></feDiffuseLighting><feColorMatrix in="lit" type="matrix" values="0.45 0 0 0 0.37  0.33 0 0 0 0.22  0.1 0 0 0 0.04  0 0 0 0 1"/></filter></defs><defs><filter id="und" x="0" y="0" width="100%" height="100%" filterUnits="objectBoundingBox" color-interpolation-filters="sRGB"><feTurbulence type="fractalNoise" baseFrequency="0.008 0.02" numOctaves="3" seed="31" result="n"/><feColorMatrix in="n" type="matrix" values="0 0 0 0 0  0 0 0 0 0  0 0 0 0 0  1 0 0 0 0" result="h"/><feDiffuseLighting in="h" surfaceScale="3" diffuseConstant="1" lighting-color="#ffffff" result="lit"><feDistantLight azimuth="240" elevation="50"/></feDiffuseLighting><feColorMatrix in="lit" type="matrix" values="1 0 0 0 -0.266  1 0 0 0 -0.266  1 0 0 0 -0.266  0 0 0 0 1"/></filter></defs><g style="mix-blend-mode:overlay" opacity="0.28"><rect x="0" y="40" width="1600" height="890" filter="url(#und)"/></g><g mask="url(#mdm)"><rect x="900" y="100" width="700" height="900" transform="rotate(90 1250 550)" filter="url(#mrel)"/></g><g filter="url(#sb)"><path d="M176 185 L256 166 L307 171 L400 184 L430 200 L380 240 L335 253 L217 247 L176 220Z" fill="rgb(110,55,5)" fill-opacity="0.12"/><path d="M55 165 L100 160 L143 191 L174 201 L150 230 L114 250 L60 240Z" fill="rgb(110,55,5)" fill-opacity="0.1"/><path d="M50 260 L114 253 L247 300 L330 340 L380 420 L360 500 L250 480 L150 420 L60 370Z" fill="rgb(110,55,5)" fill-opacity="0.07"/><path d="M114 250 L250 255 L454 268 L460 290 L330 300 L200 290Z" fill="rgb(110,55,5)" fill-opacity="0.1"/><path d="M200 470 L330 480 L430 560 L470 640 L378 639 L312 573 L246 549Z" fill="rgb(110,55,5)" fill-opacity="0.12"/><path d="M435 571 L520 560 L630 580 L640 640 L560 650 L470 640Z" fill="rgb(110,55,5)" fill-opacity="0.18"/><path d="M656 106 L707 65 L733 63 L774 70 L800 76 L826 68 L856 83 L890 104 L880 130 L820 132 L760 135 L700 140 L660 125Z" fill="rgb(110,55,5)" fill-opacity="0.15"/><path d="M890 104 L931 94 L984 117 L1005 124 L990 145 L930 147 L895 135Z" fill="rgb(110,55,5)" fill-opacity="0.15"/><path d="M533 152 L579 132 L618 124 L656 106 L660 150 L600 170 L540 180Z" fill="rgb(110,55,5)" fill-opacity="0.12"/><path d="M650 300 L700 240 L755 208 L790 225 L830 262 L870 290 L812 316 L760 300 L700 312Z" fill="rgb(110,55,5)" fill-opacity="0.22"/><path d="M953 218 L1000 208 L1062 230 L1040 238 L980 236Z" fill="rgb(110,55,5)" fill-opacity="0.3"/><path d="M620 250 L700 240 L650 300 L600 290Z" fill="rgb(110,55,5)" fill-opacity="0.1"/><path d="M1214 232 L1279 240 L1279 253 L1214 250Z" fill="rgb(110,55,5)" fill-opacity="0.3"/><path d="M1211 255 L1243 250 L1243 268 L1211 268Z" fill="rgb(110,55,5)" fill-opacity="0.25"/><path d="M1098 250 L1140 236 L1178 255 L1170 268 L1100 268Z" fill="rgb(110,55,5)" fill-opacity="0.2"/><path d="M1104 215 L1140 200 L1163 224 L1104 224Z" fill="rgb(110,55,5)" fill-opacity="0.18"/><path d="M1149 185 L1175 174 L1196 194 L1150 194Z" fill="rgb(110,55,5)" fill-opacity="0.15"/><path d="M1060 165 L1090 159 L1116 174 L1060 174Z" fill="rgb(110,55,5)" fill-opacity="0.15"/><path d="M1288 232 L1310 218 L1335 239 L1290 239Z" fill="rgb(110,55,5)" fill-opacity="0.15"/><path d="M1314 250 L1330 242 L1350 268 L1318 262Z" fill="rgb(110,55,5)" fill-opacity="0.15"/><path d="M1178 295 L1205 283 L1231 307 L1180 307Z" fill="rgb(110,55,5)" fill-opacity="0.15"/><path d="M1533 290 L1584 286 L1584 312 L1540 310Z" fill="rgb(110,55,5)" fill-opacity="0.3"/><path d="M1480 380 L1520 375 L1565 395 L1560 410 L1490 405Z" fill="rgb(110,55,5)" fill-opacity="0.3"/><path d="M1444 277 L1500 300 L1548 360 L1548 401 L1490 380 L1440 330Z" fill="rgb(110,55,5)" fill-opacity="0.12"/><path d="M1178 425 L1250 410 L1326 440 L1300 450 L1190 450Z" fill="rgb(110,55,5)" fill-opacity="0.25"/><path d="M1060 400 L1120 392 L1178 420 L1150 450 L1070 450Z" fill="rgb(110,55,5)" fill-opacity="0.15"/><path d="M1173 486 L1259 554 L1144 565Z" fill="rgb(110,55,5)" fill-opacity="0.28"/><path d="M1022 527 L1114 600 L1080 619 L945 600 L980 565Z" fill="rgb(110,55,5)" fill-opacity="0.22"/><path d="M940 600 L1014 660 L1000 700 L880 690 L900 636Z" fill="rgb(110,55,5)" fill-opacity="0.2"/><path d="M1200 421 L1260 430 L1310 450 L1310 468 L1220 460Z" fill="rgb(110,55,5)" fill-opacity="0.22"/><path d="M780 700 L900 560 L1022 520 L1173 480 L1282 503 L1250 560 L1160 600 L1110 700 L1112 918 L780 918 L700 850Z" fill="rgb(110,55,5)" fill-opacity="0.06"/><path d="M1107 158 L1200 178 L1284 200 L1584 264 L1584 300 L1300 260 L1100 220 L1000 180Z" fill="rgb(255,205,120)" fill-opacity="0.07"/><path d="M720 670 L800 600 L900 520 L1000 480 L1150 450 L1250 470 L1282 503 L1173 486 L1022 527 L945 565 L850 640 L780 700Z" fill="rgb(255,205,120)" fill-opacity="0.1"/><path d="M560 180 L640 168 L700 152 L760 142 L820 138 L880 142 L930 152 L900 175 L800 170 L700 185 L600 200Z" fill="rgb(255,205,120)" fill-opacity="0.06"/><path d="M588 709 L620 700 L648 740 L637 773 L620 769 L591 780Z" fill="rgb(255,205,120)" fill-opacity="0.22"/></g><path d="M1022 764h1.2v1.2h-1.2zM748 878h1.2v1.2h-1.2zM686 799h1.2v1.2h-1.2zM903 829h1.2v1.2h-1.2zM701 834h1.2v1.2h-1.2zM875 884h1.2v1.2h-1.2zM879 881h1.2v1.2h-1.2zM720 763h1.2v1.2h-1.2zM892 737h1.2v1.2h-1.2zM728 818h1.2v1.2h-1.2zM844 851h1.2v1.2h-1.2zM1111 859h1.2v1.2h-1.2zM994 884h1.2v1.2h-1.2zM677 795h1.2v1.2h-1.2zM894 714h1.2v1.2h-1.2zM848 867h1.2v1.2h-1.2zM901 718h1.2v1.2h-1.2zM1089 703h1.2v1.2h-1.2zM1043 912h1.2v1.2h-1.2zM998 906h1.2v1.2h-1.2zM890 740h1.2v1.2h-1.2zM861 858h1.2v1.2h-1.2zM1007 778h1.2v1.2h-1.2zM873 699h1.2v1.2h-1.2zM805 916h1.2v1.2h-1.2zM1074 847h1.2v1.2h-1.2zM657 798h1.2v1.2h-1.2zM969 712h1.2v1.2h-1.2zM776 711h1.2v1.2h-1.2zM1043 899h1.2v1.2h-1.2zM1083 861h1.2v1.2h-1.2zM912 704h1.2v1.2h-1.2zM866 863h1.2v1.2h-1.2zM1083 716h1.2v1.2h-1.2zM821 799h1.2v1.2h-1.2zM1063 721h1.2v1.2h-1.2zM758 866h1.2v1.2h-1.2zM744 804h1.2v1.2h-1.2zM816 914h1.2v1.2h-1.2zM979 827h1.2v1.2h-1.2zM870 751h1.2v1.2h-1.2zM1041 713h1.2v1.2h-1.2zM935 757h1.2v1.2h-1.2zM765 793h1.2v1.2h-1.2zM723 825h1.2v1.2h-1.2zM1060 806h1.2v1.2h-1.2zM963 868h1.2v1.2h-1.2zM818 795h1.2v1.2h-1.2zM869 849h1.2v1.2h-1.2zM1007 734h1.2v1.2h-1.2zM1036 788h1.2v1.2h-1.2zM753 887h1.2v1.2h-1.2zM1057 886h1.2v1.2h-1.2zM789 898h1.2v1.2h-1.2zM1010 911h1.2v1.2h-1.2zM864 861h1.2v1.2h-1.2zM1013 810h1.2v1.2h-1.2zM877 781h1.2v1.2h-1.2zM1056 776h1.2v1.2h-1.2zM996 818h1.2v1.2h-1.2zM976 760h1.2v1.2h-1.2zM701 772h1.2v1.2h-1.2zM1013 701h1.2v1.2h-1.2zM1076 824h1.2v1.2h-1.2zM905 844h1.2v1.2h-1.2zM983 824h1.2v1.2h-1.2zM943 878h1.2v1.2h-1.2zM763 727h1.2v1.2h-1.2zM1105 704h1.2v1.2h-1.2zM883 832h1.2v1.2h-1.2zM1098 710h1.2v1.2h-1.2zM974 708h1.2v1.2h-1.2zM852 831h1.2v1.2h-1.2zM1046 701h1.2v1.2h-1.2zM997 724h1.2v1.2h-1.2zM828 914h1.2v1.2h-1.2zM1047 707h1.2v1.2h-1.2zM1015 874h1.2v1.2h-1.2zM1031 904h1.2v1.2h-1.2zM940 878h1.2v1.2h-1.2zM896 842h1.2v1.2h-1.2zM980 731h1.2v1.2h-1.2zM866 813h1.2v1.2h-1.2zM1007 764h1.2v1.2h-1.2zM860 733h1.2v1.2h-1.2zM913 904h1.2v1.2h-1.2zM819 840h1.2v1.2h-1.2zM903 735h1.2v1.2h-1.2zM971 738h1.2v1.2h-1.2zM931 917h1.2v1.2h-1.2zM780 842h1.2v1.2h-1.2zM796 837h1.2v1.2h-1.2zM724 804h1.2v1.2h-1.2zM1015 739h1.2v1.2h-1.2zM804 741h1.2v1.2h-1.2zM707 843h1.2v1.2h-1.2zM1037 810h1.2v1.2h-1.2zM849 759h1.2v1.2h-1.2zM865 845h1.2v1.2h-1.2zM767 729h1.2v1.2h-1.2zM835 809h1.2v1.2h-1.2zM932 848h1.2v1.2h-1.2zM1060 873h1.2v1.2h-1.2zM967 873h1.2v1.2h-1.2zM895 798h1.2v1.2h-1.2zM1078 894h1.2v1.2h-1.2zM819 888h1.2v1.2h-1.2zM841 861h1.2v1.2h-1.2zM1094 790h1.2v1.2h-1.2zM1057 845h1.2v1.2h-1.2zM792 911h1.2v1.2h-1.2zM952 826h1.2v1.2h-1.2zM1051 770h1.2v1.2h-1.2zM702 792h1.2v1.2h-1.2zM1075 728h1.2v1.2h-1.2zM871 757h1.2v1.2h-1.2zM805 711h1.2v1.2h-1.2zM1075 748h1.2v1.2h-1.2zM1017 729h1.2v1.2h-1.2zM839 696h1.2v1.2h-1.2zM918 806h1.2v1.2h-1.2zM842 736h1.2v1.2h-1.2zM943 698h1.2v1.2h-1.2zM1087 800h1.2v1.2h-1.2zM929 787h1.2v1.2h-1.2zM986 801h1.2v1.2h-1.2zM766 813h1.2v1.2h-1.2zM1057 806h1.2v1.2h-1.2zM884 823h1.2v1.2h-1.2zM955 821h1.2v1.2h-1.2zM981 728h1.2v1.2h-1.2zM1036 871h1.2v1.2h-1.2zM943 851h1.2v1.2h-1.2zM865 746h1.2v1.2h-1.2zM897 792h1.2v1.2h-1.2zM818 784h1.2v1.2h-1.2zM856 774h1.2v1.2h-1.2zM690 803h1.2v1.2h-1.2zM769 871h1.2v1.2h-1.2zM1098 860h1.2v1.2h-1.2zM792 799h1.2v1.2h-1.2zM992 742h1.2v1.2h-1.2zM1022 700h1.2v1.2h-1.2zM1104 817h1.2v1.2h-1.2zM1009 827h1.2v1.2h-1.2zM1046 786h1.2v1.2h-1.2zM996 914h1.2v1.2h-1.2zM742 801h1.2v1.2h-1.2zM1013 760h1.2v1.2h-1.2zM745 864h1.2v1.2h-1.2zM687 766h1.2v1.2h-1.2zM921 803h1.2v1.2h-1.2zM1095 800h1.2v1.2h-1.2zM830 733h1.2v1.2h-1.2zM1030 701h1.2v1.2h-1.2zM638 773h1.2v1.2h-1.2zM1024 748h1.2v1.2h-1.2zM859 711h1.2v1.2h-1.2zM1051 712h1.2v1.2h-1.2zM1098 797h1.2v1.2h-1.2zM696 774h1.2v1.2h-1.2zM1101 732h1.2v1.2h-1.2zM1003 903h1.2v1.2h-1.2zM1078 862h1.2v1.2h-1.2zM1082 716h1.2v1.2h-1.2zM971 909h1.2v1.2h-1.2zM886 693h1.2v1.2h-1.2zM772 791h1.2v1.2h-1.2zM832 855h1.2v1.2h-1.2zM952 915h1.2v1.2h-1.2zM867 845h1.2v1.2h-1.2zM978 843h1.2v1.2h-1.2zM975 789h1.2v1.2h-1.2zM819 873h1.2v1.2h-1.2zM1028 880h1.2v1.2h-1.2zM1080 740h1.2v1.2h-1.2zM921 896h1.2v1.2h-1.2zM896 845h1.2v1.2h-1.2zM684 753h1.2v1.2h-1.2zM888 866h1.2v1.2h-1.2zM1027 852h1.2v1.2h-1.2zM926 809h1.2v1.2h-1.2zM1008 788h1.2v1.2h-1.2zM816 781h1.2v1.2h-1.2zM935 780h1.2v1.2h-1.2zM839 712h1.2v1.2h-1.2zM1022 772h1.2v1.2h-1.2zM1079 820h1.2v1.2h-1.2zM997 725h1.2v1.2h-1.2zM1099 793h1.2v1.2h-1.2zM1011 871h1.2v1.2h-1.2zM761 757h1.2v1.2h-1.2zM1077 743h1.2v1.2h-1.2zM1071 878h1.2v1.2h-1.2zM831 794h1.2v1.2h-1.2zM828 772h1.2v1.2h-1.2zM975 845h1.2v1.2h-1.2zM781 811h1.2v1.2h-1.2zM1018 916h1.2v1.2h-1.2zM1032 712h1.2v1.2h-1.2zM1004 740h1.2v1.2h-1.2zM841 707h1.2v1.2h-1.2zM1060 756h1.2v1.2h-1.2zM767 710h1.2v1.2h-1.2zM1071 803h1.2v1.2h-1.2zM863 848h1.2v1.2h-1.2zM798 778h1.2v1.2h-1.2zM1012 842h1.2v1.2h-1.2zM1065 820h1.2v1.2h-1.2zM1035 880h1.2v1.2h-1.2zM746 836h1.2v1.2h-1.2zM902 727h1.2v1.2h-1.2zM738 779h1.2v1.2h-1.2zM1102 907h1.2v1.2h-1.2zM827 832h1.2v1.2h-1.2zM778 700h1.2v1.2h-1.2zM742 806h1.2v1.2h-1.2zM822 795h1.2v1.2h-1.2zM1101 807h1.2v1.2h-1.2zM1106 781h1.2v1.2h-1.2zM1043 808h1.2v1.2h-1.2zM967 822h1.2v1.2h-1.2zM1058 702h1.2v1.2h-1.2zM774 767h1.2v1.2h-1.2zM764 796h1.2v1.2h-1.2zM1017 766h1.2v1.2h-1.2zM694 816h1.2v1.2h-1.2zM803 894h1.2v1.2h-1.2zM661 785h1.2v1.2h-1.2zM837 875h1.2v1.2h-1.2zM900 879h1.2v1.2h-1.2zM1025 805h1.2v1.2h-1.2zM983 721h1.2v1.2h-1.2zM1000 738h1.2v1.2h-1.2zM904 728h1.2v1.2h-1.2zM1094 781h1.2v1.2h-1.2zM952 806h1.2v1.2h-1.2zM968 734h1.2v1.2h-1.2zM1009 779h1.2v1.2h-1.2zM945 903h1.2v1.2h-1.2zM952 862h1.2v1.2h-1.2zM870 798h1.2v1.2h-1.2zM1077 797h1.2v1.2h-1.2zM864 694h1.2v1.2h-1.2zM678 820h1.2v1.2h-1.2zM689 760h1.2v1.2h-1.2zM676 777h1.2v1.2h-1.2zM803 716h1.2v1.2h-1.2zM786 850h1.2v1.2h-1.2zM952 843h1.2v1.2h-1.2zM853 790h1.2v1.2h-1.2zM948 723h1.2v1.2h-1.2zM675 793h1.2v1.2h-1.2zM910 745h1.2v1.2h-1.2zM961 806h1.2v1.2h-1.2zM785 810h1.2v1.2h-1.2zM902 810h1.2v1.2h-1.2zM707 770h1.2v1.2h-1.2zM776 787h1.2v1.2h-1.2zM818 774h1.2v1.2h-1.2zM717 846h1.2v1.2h-1.2zM1039 819h1.2v1.2h-1.2zM744 865h1.2v1.2h-1.2zM844 734h1.2v1.2h-1.2zM1109 707h1.2v1.2h-1.2zM787 841h1.2v1.2h-1.2zM1056 727h1.2v1.2h-1.2zM817 758h1.2v1.2h-1.2zM949 834h1.2v1.2h-1.2zM713 750h1.2v1.2h-1.2zM870 898h1.2v1.2h-1.2zM865 838h1.2v1.2h-1.2zM1025 844h1.2v1.2h-1.2zM1047 777h1.2v1.2h-1.2zM988 713h1.2v1.2h-1.2zM1049 730h1.2v1.2h-1.2zM861 765h1.2v1.2h-1.2zM767 720h1.2v1.2h-1.2zM845 802h1.2v1.2h-1.2zM889 844h1.2v1.2h-1.2zM1059 812h1.2v1.2h-1.2zM898 730h1.2v1.2h-1.2zM814 760h1.2v1.2h-1.2zM975 719h1.2v1.2h-1.2zM862 743h1.2v1.2h-1.2zM1067 730h1.2v1.2h-1.2zM911 762h1.2v1.2h-1.2zM923 695h1.2v1.2h-1.2zM1011 756h1.2v1.2h-1.2zM824 826h1.2v1.2h-1.2zM1086 818h1.2v1.2h-1.2zM887 710h1.2v1.2h-1.2zM710 731h1.2v1.2h-1.2zM1028 766h1.2v1.2h-1.2zM1007 796h1.2v1.2h-1.2zM1078 778h1.2v1.2h-1.2zM710 773h1.2v1.2h-1.2zM921 724h1.2v1.2h-1.2zM944 881h1.2v1.2h-1.2zM795 822h1.2v1.2h-1.2zM1084 833h1.2v1.2h-1.2zM1091 858h1.2v1.2h-1.2zM1067 866h1.2v1.2h-1.2zM879 744h1.2v1.2h-1.2zM942 880h1.2v1.2h-1.2zM833 738h1.2v1.2h-1.2zM840 699h1.2v1.2h-1.2zM768 727h1.2v1.2h-1.2zM834 708h1.2v1.2h-1.2zM1091 855h1.2v1.2h-1.2zM1040 906h1.2v1.2h-1.2zM819 809h1.2v1.2h-1.2zM927 917h1.2v1.2h-1.2zM1093 764h1.2v1.2h-1.2zM999 706h1.2v1.2h-1.2zM1066 709h1.2v1.2h-1.2zM968 869h1.2v1.2h-1.2zM1107 754h1.2v1.2h-1.2zM876 714h1.2v1.2h-1.2zM975 910h1.2v1.2h-1.2zM1087 859h1.2v1.2h-1.2zM1006 787h1.2v1.2h-1.2zM938 897h1.2v1.2h-1.2zM849 779h1.2v1.2h-1.2zM769 793h1.2v1.2h-1.2zM917 742h1.2v1.2h-1.2zM701 741h1.2v1.2h-1.2zM838 864h1.2v1.2h-1.2zM824 844h1.2v1.2h-1.2zM875 812h1.2v1.2h-1.2zM1084 724h1.2v1.2h-1.2zM950 757h1.2v1.2h-1.2zM784 832h1.2v1.2h-1.2zM777 897h1.2v1.2h-1.2zM720 794h1.2v1.2h-1.2zM745 721h1.2v1.2h-1.2zM974 890h1.2v1.2h-1.2zM946 852h1.2v1.2h-1.2zM772 885h1.2v1.2h-1.2zM796 741h1.2v1.2h-1.2zM926 732h1.2v1.2h-1.2zM1037 781h1.2v1.2h-1.2zM1058 836h1.2v1.2h-1.2zM1106 729h1.2v1.2h-1.2zM752 828h1.2v1.2h-1.2zM748 818h1.2v1.2h-1.2zM754 843h1.2v1.2h-1.2zM1019 898h1.2v1.2h-1.2zM981 734h1.2v1.2h-1.2zM947 716h1.2v1.2h-1.2zM957 756h1.2v1.2h-1.2zM1000 706h1.2v1.2h-1.2zM1040 757h1.2v1.2h-1.2zM1111 907h1.2v1.2h-1.2zM757 877h1.2v1.2h-1.2zM828 908h1.2v1.2h-1.2zM840 841h1.2v1.2h-1.2zM879 906h1.2v1.2h-1.2zM1099 899h1.2v1.2h-1.2zM928 860h1.2v1.2h-1.2zM1053 796h1.2v1.2h-1.2zM1045 798h1.2v1.2h-1.2zM940 700h1.2v1.2h-1.2zM1085 799h1.2v1.2h-1.2zM713 759h1.2v1.2h-1.2zM757 776h1.2v1.2h-1.2zM845 849h1.2v1.2h-1.2zM1033 711h1.2v1.2h-1.2zM912 864h1.2v1.2h-1.2zM795 767h1.2v1.2h-1.2zM669 806h1.2v1.2h-1.2zM694 838h1.2v1.2h-1.2zM949 731h1.2v1.2h-1.2zM889 751h1.2v1.2h-1.2zM847 879h1.2v1.2h-1.2zM1036 827h1.2v1.2h-1.2zM977 823h1.2v1.2h-1.2zM877 886h1.2v1.2h-1.2zM746 861h1.2v1.2h-1.2zM1067 752h1.2v1.2h-1.2zM769 883h1.2v1.2h-1.2zM853 781h1.2v1.2h-1.2zM912 859h1.2v1.2h-1.2zM917 789h1.2v1.2h-1.2zM808 819h1.2v1.2h-1.2zM786 851h1.2v1.2h-1.2zM766 763h1.2v1.2h-1.2zM935 770h1.2v1.2h-1.2zM699 826h1.2v1.2h-1.2zM843 874h1.2v1.2h-1.2zM826 777h1.2v1.2h-1.2zM689 748h1.2v1.2h-1.2zM1001 750h1.2v1.2h-1.2zM1044 775h1.2v1.2h-1.2zM899 718h1.2v1.2h-1.2zM974 727h1.2v1.2h-1.2zM812 890h1.2v1.2h-1.2zM754 782h1.2v1.2h-1.2zM897 772h1.2v1.2h-1.2zM951 832h1.2v1.2h-1.2zM1059 901h1.2v1.2h-1.2zM938 835h1.2v1.2h-1.2zM703 817h1.2v1.2h-1.2zM1036 846h1.2v1.2h-1.2zM806 753h1.2v1.2h-1.2zM1099 869h1.2v1.2h-1.2zM935 792h1.2v1.2h-1.2zM854 866h1.2v1.2h-1.2zM673 816h1.2v1.2h-1.2zM987 824h1.2v1.2h-1.2zM874 696h1.2v1.2h-1.2zM1034 852h1.2v1.2h-1.2zM923 761h1.2v1.2h-1.2zM836 725h1.2v1.2h-1.2zM1007 753h1.2v1.2h-1.2zM1070 784h1.2v1.2h-1.2zM1091 706h1.2v1.2h-1.2zM740 864h1.2v1.2h-1.2zM731 715h1.2v1.2h-1.2zM817 869h1.2v1.2h-1.2zM975 852h1.2v1.2h-1.2zM877 804h1.2v1.2h-1.2zM775 785h1.2v1.2h-1.2zM767 825h1.2v1.2h-1.2zM1081 843h1.2v1.2h-1.2zM1075 746h1.2v1.2h-1.2zM887 772h1.2v1.2h-1.2zM1060 749h1.2v1.2h-1.2zM882 726h1.2v1.2h-1.2zM787 753h1.2v1.2h-1.2zM1064 714h1.2v1.2h-1.2zM933 750h1.2v1.2h-1.2zM1032 790h1.2v1.2h-1.2zM944 726h1.2v1.2h-1.2zM975 861h1.2v1.2h-1.2zM836 845h1.2v1.2h-1.2zM790 709h1.2v1.2h-1.2zM753 731h1.2v1.2h-1.2zM938 770h1.2v1.2h-1.2zM1002 819h1.2v1.2h-1.2zM918 723h1.2v1.2h-1.2zM902 778h1.2v1.2h-1.2zM928 912h1.2v1.2h-1.2zM979 878h1.2v1.2h-1.2zM949 753h1.2v1.2h-1.2zM982 792h1.2v1.2h-1.2zM825 729h1.2v1.2h-1.2zM888 818h1.2v1.2h-1.2zM756 786h1.2v1.2h-1.2zM1060 912h1.2v1.2h-1.2zM743 811h1.2v1.2h-1.2zM1021 787h1.2v1.2h-1.2zM984 862h1.2v1.2h-1.2zM778 746h1.2v1.2h-1.2zM1109 844h1.2v1.2h-1.2zM742 707h1.2v1.2h-1.2zM849 834h1.2v1.2h-1.2zM1036 712h1.2v1.2h-1.2zM1049 736h1.2v1.2h-1.2zM907 914h1.2v1.2h-1.2zM857 770h1.2v1.2h-1.2zM919 709h1.2v1.2h-1.2zM784 814h1.2v1.2h-1.2zM769 846h1.2v1.2h-1.2zM758 809h1.2v1.2h-1.2zM941 844h1.2v1.2h-1.2zM722 757h1.2v1.2h-1.2zM1040 884h1.2v1.2h-1.2zM882 886h1.2v1.2h-1.2zM949 729h1.2v1.2h-1.2zM1051 717h1.2v1.2h-1.2zM1062 857h1.2v1.2h-1.2zM1007 758h1.2v1.2h-1.2zM823 878h1.2v1.2h-1.2zM820 717h1.2v1.2h-1.2zM773 715h1.2v1.2h-1.2zM786 747h1.2v1.2h-1.2zM801 718h1.2v1.2h-1.2zM1098 712h1.2v1.2h-1.2zM790 895h1.2v1.2h-1.2zM899 801h1.2v1.2h-1.2zM983 909h1.2v1.2h-1.2zM774 817h1.2v1.2h-1.2zM859 714h1.2v1.2h-1.2zM848 714h1.2v1.2h-1.2zM870 872h1.2v1.2h-1.2zM1009 712h1.2v1.2h-1.2zM822 756h1.2v1.2h-1.2zM914 885h1.2v1.2h-1.2zM938 730h1.2v1.2h-1.2zM820 726h1.2v1.2h-1.2zM679 752h1.2v1.2h-1.2zM713 854h1.2v1.2h-1.2zM1109 835h1.2v1.2h-1.2zM731 727h1.2v1.2h-1.2zM870 845h1.2v1.2h-1.2zM1100 850h1.2v1.2h-1.2zM931 819h1.2v1.2h-1.2zM803 791h1.2v1.2h-1.2zM838 837h1.2v1.2h-1.2zM961 698h1.2v1.2h-1.2zM1029 839h1.2v1.2h-1.2zM898 903h1.2v1.2h-1.2zM855 758h1.2v1.2h-1.2zM732 760h1.2v1.2h-1.2zM917 811h1.2v1.2h-1.2zM812 824h1.2v1.2h-1.2zM1025 894h1.2v1.2h-1.2zM1057 752h1.2v1.2h-1.2zM864 706h1.2v1.2h-1.2zM963 837h1.2v1.2h-1.2zM989 889h1.2v1.2h-1.2zM915 812h1.2v1.2h-1.2zM759 770h1.2v1.2h-1.2zM822 855h1.2v1.2h-1.2zM865 759h1.2v1.2h-1.2zM921 744h1.2v1.2h-1.2zM834 730h1.2v1.2h-1.2zM933 900h1.2v1.2h-1.2zM914 797h1.2v1.2h-1.2zM724 770h1.2v1.2h-1.2zM962 833h1.2v1.2h-1.2zM902 869h1.2v1.2h-1.2zM845 882h1.2v1.2h-1.2zM1086 737h1.2v1.2h-1.2zM987 787h1.2v1.2h-1.2zM1108 701h1.2v1.2h-1.2zM780 819h1.2v1.2h-1.2zM1073 739h1.2v1.2h-1.2zM860 852h1.2v1.2h-1.2zM976 849h1.2v1.2h-1.2zM1080 842h1.2v1.2h-1.2zM974 911h1.2v1.2h-1.2zM1031 738h1.2v1.2h-1.2zM889 798h1.2v1.2h-1.2zM1041 726h1.2v1.2h-1.2zM849 723h1.2v1.2h-1.2zM923 817h1.2v1.2h-1.2zM726 864h1.2v1.2h-1.2zM753 703h1.2v1.2h-1.2zM773 865h1.2v1.2h-1.2zM1009 780h1.2v1.2h-1.2zM986 741h1.2v1.2h-1.2zM745 736h1.2v1.2h-1.2zM987 822h1.2v1.2h-1.2zM989 823h1.2v1.2h-1.2zM774 845h1.2v1.2h-1.2zM996 728h1.2v1.2h-1.2zM846 807h1.2v1.2h-1.2zM995 912h1.2v1.2h-1.2zM758 700h1.2v1.2h-1.2zM1080 734h1.2v1.2h-1.2zM766 792h1.2v1.2h-1.2zM879 861h1.2v1.2h-1.2zM963 726h1.2v1.2h-1.2zM782 838h1.2v1.2h-1.2zM796 866h1.2v1.2h-1.2zM866 759h1.2v1.2h-1.2zM922 785h1.2v1.2h-1.2zM888 801h1.2v1.2h-1.2zM1102 774h1.2v1.2h-1.2zM896 873h1.2v1.2h-1.2zM887 906h1.2v1.2h-1.2zM775 797h1.2v1.2h-1.2zM907 803h1.2v1.2h-1.2zM861 724h1.2v1.2h-1.2zM1025 811h1.2v1.2h-1.2zM1089 741h1.2v1.2h-1.2zM959 763h1.2v1.2h-1.2zM762 737h1.2v1.2h-1.2zM971 825h1.2v1.2h-1.2zM735 856h1.2v1.2h-1.2zM675 773h1.2v1.2h-1.2zM740 712h1.2v1.2h-1.2zM858 909h1.2v1.2h-1.2zM812 904h1.2v1.2h-1.2zM897 898h1.2v1.2h-1.2zM683 808h1.2v1.2h-1.2zM1018 834h1.2v1.2h-1.2zM1078 749h1.2v1.2h-1.2zM748 829h1.2v1.2h-1.2zM1055 797h1.2v1.2h-1.2zM750 789h1.2v1.2h-1.2zM957 864h1.2v1.2h-1.2zM991 753h1.2v1.2h-1.2zM986 831h1.2v1.2h-1.2zM793 749h1.2v1.2h-1.2zM914 817h1.2v1.2h-1.2zM1097 836h1.2v1.2h-1.2zM798 859h1.2v1.2h-1.2zM878 869h1.2v1.2h-1.2zM902 737h1.2v1.2h-1.2zM1006 910h1.2v1.2h-1.2zM710 818h1.2v1.2h-1.2zM933 848h1.2v1.2h-1.2zM735 836h1.2v1.2h-1.2zM770 872h1.2v1.2h-1.2zM1060 815h1.2v1.2h-1.2zM908 722h1.2v1.2h-1.2zM853 778h1.2v1.2h-1.2zM830 710h1.2v1.2h-1.2zM995 799h1.2v1.2h-1.2zM1037 820h1.2v1.2h-1.2zM843 834h1.2v1.2h-1.2zM1047 820h1.2v1.2h-1.2zM839 901h1.2v1.2h-1.2zM979 783h1.2v1.2h-1.2zM1050 763h1.2v1.2h-1.2zM945 883h1.2v1.2h-1.2zM827 714h1.2v1.2h-1.2zM856 814h1.2v1.2h-1.2zM767 819h1.2v1.2h-1.2zM1031 823h1.2v1.2h-1.2zM727 751h1.2v1.2h-1.2zM870 722h1.2v1.2h-1.2zM905 797h1.2v1.2h-1.2zM981 700h1.2v1.2h-1.2zM795 777h1.2v1.2h-1.2zM1037 722h1.2v1.2h-1.2zM686 797h1.2v1.2h-1.2zM1043 776h1.2v1.2h-1.2zM915 771h1.2v1.2h-1.2zM754 784h1.2v1.2h-1.2zM838 783h1.2v1.2h-1.2zM768 797h1.2v1.2h-1.2zM1060 778h1.2v1.2h-1.2zM1016 739h1.2v1.2h-1.2zM815 887h1.2v1.2h-1.2zM1008 916h1.2v1.2h-1.2zM933 697h1.2v1.2h-1.2zM942 758h1.2v1.2h-1.2zM797 719h1.2v1.2h-1.2zM1095 817h1.2v1.2h-1.2zM1020 818h1.2v1.2h-1.2zM1043 787h1.2v1.2h-1.2zM834 893h1.2v1.2h-1.2zM1077 782h1.2v1.2h-1.2zM991 880h1.2v1.2h-1.2zM934 751h1.2v1.2h-1.2zM1048 850h1.2v1.2h-1.2zM1079 895h1.2v1.2h-1.2zM898 726h1.2v1.2h-1.2zM978 731h1.2v1.2h-1.2zM862 746h1.2v1.2h-1.2zM761 721h1.2v1.2h-1.2zM749 702h1.2v1.2h-1.2zM788 863h1.2v1.2h-1.2zM935 766h1.2v1.2h-1.2zM882 798h1.2v1.2h-1.2zM869 898h1.2v1.2h-1.2zM852 803h1.2v1.2h-1.2zM984 716h1.2v1.2h-1.2zM764 840h1.2v1.2h-1.2zM802 894h1.2v1.2h-1.2zM772 875h1.2v1.2h-1.2zM820 766h1.2v1.2h-1.2zM967 802h1.2v1.2h-1.2zM1073 725h1.2v1.2h-1.2zM997 768h1.2v1.2h-1.2zM700 821h1.2v1.2h-1.2zM987 776h1.2v1.2h-1.2zM964 789h1.2v1.2h-1.2zM1085 862h1.2v1.2h-1.2zM964 698h1.2v1.2h-1.2zM1022 846h1.2v1.2h-1.2zM1065 774h1.2v1.2h-1.2zM771 826h1.2v1.2h-1.2zM886 877h1.2v1.2h-1.2zM884 806h1.2v1.2h-1.2zM977 797h1.2v1.2h-1.2zM807 750h1.2v1.2h-1.2zM947 739h1.2v1.2h-1.2zM782 808h1.2v1.2h-1.2zM1022 845h1.2v1.2h-1.2zM798 829h1.2v1.2h-1.2zM813 736h1.2v1.2h-1.2zM946 730h1.2v1.2h-1.2zM908 864h1.2v1.2h-1.2zM707 816h1.2v1.2h-1.2zM842 856h1.2v1.2h-1.2zM812 722h1.2v1.2h-1.2zM726 723h1.2v1.2h-1.2zM1041 830h1.2v1.2h-1.2zM968 734h1.2v1.2h-1.2zM739 802h1.2v1.2h-1.2zM1010 763h1.2v1.2h-1.2zM801 899h1.2v1.2h-1.2zM959 879h1.2v1.2h-1.2zM789 769h1.2v1.2h-1.2zM975 791h1.2v1.2h-1.2zM935 869h1.2v1.2h-1.2zM970 794h1.2v1.2h-1.2zM731 798h1.2v1.2h-1.2zM1028 805h1.2v1.2h-1.2zM919 831h1.2v1.2h-1.2zM782 757h1.2v1.2h-1.2zM982 757h1.2v1.2h-1.2zM910 786h1.2v1.2h-1.2zM674 751h1.2v1.2h-1.2zM852 796h1.2v1.2h-1.2zM792 891h1.2v1.2h-1.2zM889 850h1.2v1.2h-1.2zM704 749h1.2v1.2h-1.2zM1055 856h1.2v1.2h-1.2zM817 794h1.2v1.2h-1.2zM953 807h1.2v1.2h-1.2zM760 733h1.2v1.2h-1.2zM1015 889h1.2v1.2h-1.2zM845 833h1.2v1.2h-1.2zM1045 751h1.2v1.2h-1.2zM901 717h1.2v1.2h-1.2zM1067 829h1.2v1.2h-1.2zM1011 834h1.2v1.2h-1.2zM1090 838h1.2v1.2h-1.2zM715 827h1.2v1.2h-1.2zM798 852h1.2v1.2h-1.2zM917 834h1.2v1.2h-1.2zM854 733h1.2v1.2h-1.2zM1004 777h1.2v1.2h-1.2zM974 872h1.2v1.2h-1.2zM1008 835h1.2v1.2h-1.2zM1028 796h1.2v1.2h-1.2zM844 820h1.2v1.2h-1.2zM783 810h1.2v1.2h-1.2zM1083 714h1.2v1.2h-1.2zM676 812h1.2v1.2h-1.2zM749 884h1.2v1.2h-1.2zM825 719h1.2v1.2h-1.2zM945 907h1.2v1.2h-1.2zM900 758h1.2v1.2h-1.2zM767 741h1.2v1.2h-1.2zM774 879h1.2v1.2h-1.2zM1025 865h1.2v1.2h-1.2zM909 763h1.2v1.2h-1.2zM761 771h1.2v1.2h-1.2zM1034 834h1.2v1.2h-1.2zM1068 843h1.2v1.2h-1.2zM914 723h1.2v1.2h-1.2zM716 852h1.2v1.2h-1.2zM1082 870h1.2v1.2h-1.2zM968 869h1.2v1.2h-1.2zM697 741h1.2v1.2h-1.2zM924 734h1.2v1.2h-1.2zM868 865h1.2v1.2h-1.2zM941 882h1.2v1.2h-1.2zM835 735h1.2v1.2h-1.2zM911 831h1.2v1.2h-1.2zM983 912h1.2v1.2h-1.2zM826 826h1.2v1.2h-1.2zM869 800h1.2v1.2h-1.2zM830 890h1.2v1.2h-1.2zM1059 780h1.2v1.2h-1.2zM813 763h1.2v1.2h-1.2zM859 886h1.2v1.2h-1.2zM1007 808h1.2v1.2h-1.2zM836 699h1.2v1.2h-1.2zM868 835h1.2v1.2h-1.2zM992 908h1.2v1.2h-1.2zM715 820h1.2v1.2h-1.2zM815 785h1.2v1.2h-1.2zM839 885h1.2v1.2h-1.2zM900 772h1.2v1.2h-1.2zM780 905h1.2v1.2h-1.2zM1011 898h1.2v1.2h-1.2zM975 832h1.2v1.2h-1.2zM744 772h1.2v1.2h-1.2zM1021 746h1.2v1.2h-1.2zM1073 760h1.2v1.2h-1.2zM1070 728h1.2v1.2h-1.2zM721 823h1.2v1.2h-1.2zM916 733h1.2v1.2h-1.2zM788 738h1.2v1.2h-1.2zM1009 735h1.2v1.2h-1.2zM741 746h1.2v1.2h-1.2zM727 810h1.2v1.2h-1.2zM999 769h1.2v1.2h-1.2zM998 848h1.2v1.2h-1.2zM826 782h1.2v1.2h-1.2zM877 879h1.2v1.2h-1.2zM854 871h1.2v1.2h-1.2zM974 798h1.2v1.2h-1.2zM799 732h1.2v1.2h-1.2zM941 785h1.2v1.2h-1.2zM758 853h1.2v1.2h-1.2zM1059 772h1.2v1.2h-1.2zM1051 895h1.2v1.2h-1.2zM892 858h1.2v1.2h-1.2zM823 847h1.2v1.2h-1.2zM1061 715h1.2v1.2h-1.2zM682 823h1.2v1.2h-1.2zM895 838h1.2v1.2h-1.2zM1018 849h1.2v1.2h-1.2zM856 822h1.2v1.2h-1.2zM775 717h1.2v1.2h-1.2zM735 714h1.2v1.2h-1.2zM870 888h1.2v1.2h-1.2zM837 727h1.2v1.2h-1.2zM978 797h1.2v1.2h-1.2zM793 898h1.2v1.2h-1.2zM1069 839h1.2v1.2h-1.2zM949 905h1.2v1.2h-1.2zM951 732h1.2v1.2h-1.2zM935 751h1.2v1.2h-1.2zM828 905h1.2v1.2h-1.2zM867 804h1.2v1.2h-1.2zM745 713h1.2v1.2h-1.2zM822 837h1.2v1.2h-1.2zM1026 713h1.2v1.2h-1.2zM776 907h1.2v1.2h-1.2zM907 699h1.2v1.2h-1.2zM766 794h1.2v1.2h-1.2zM876 842h1.2v1.2h-1.2zM1044 912h1.2v1.2h-1.2zM1040 799h1.2v1.2h-1.2zM733 751h1.2v1.2h-1.2zM1013 864h1.2v1.2h-1.2zM844 749h1.2v1.2h-1.2zM1058 898h1.2v1.2h-1.2zM808 884h1.2v1.2h-1.2zM703 834h1.2v1.2h-1.2zM1040 846h1.2v1.2h-1.2zM860 749h1.2v1.2h-1.2zM860 726h1.2v1.2h-1.2zM915 854h1.2v1.2h-1.2zM789 762h1.2v1.2h-1.2zM777 855h1.2v1.2h-1.2zM687 760h1.2v1.2h-1.2zM938 704h1.2v1.2h-1.2zM1110 780h1.2v1.2h-1.2zM865 714h1.2v1.2h-1.2zM917 738h1.2v1.2h-1.2zM997 833h1.2v1.2h-1.2zM930 762h1.2v1.2h-1.2zM991 761h1.2v1.2h-1.2zM1001 728h1.2v1.2h-1.2zM874 778h1.2v1.2h-1.2zM1108 864h1.2v1.2h-1.2zM818 757h1.2v1.2h-1.2zM926 812h1.2v1.2h-1.2zM773 741h1.2v1.2h-1.2zM1005 781h1.2v1.2h-1.2zM950 913h1.2v1.2h-1.2zM685 792h1.2v1.2h-1.2zM864 802h1.2v1.2h-1.2zM814 745h1.2v1.2h-1.2zM907 800h1.2v1.2h-1.2zM1105 701h1.2v1.2h-1.2zM823 909h1.2v1.2h-1.2zM1022 907h1.2v1.2h-1.2zM866 701h1.2v1.2h-1.2zM799 899h1.2v1.2h-1.2zM1109 914h1.2v1.2h-1.2zM839 861h1.2v1.2h-1.2zM686 802h1.2v1.2h-1.2zM729 745h1.2v1.2h-1.2zM1087 707h1.2v1.2h-1.2zM779 760h1.2v1.2h-1.2zM983 818h1.2v1.2h-1.2zM795 773h1.2v1.2h-1.2zM1057 795h1.2v1.2h-1.2zM1072 715h1.2v1.2h-1.2zM786 881h1.2v1.2h-1.2zM828 794h1.2v1.2h-1.2zM684 782h1.2v1.2h-1.2zM1011 795h1.2v1.2h-1.2zM1043 797h1.2v1.2h-1.2zM973 769h1.2v1.2h-1.2zM890 701h1.2v1.2h-1.2zM840 916h1.2v1.2h-1.2zM870 754h1.2v1.2h-1.2zM861 699h1.2v1.2h-1.2zM1079 843h1.2v1.2h-1.2zM878 845h1.2v1.2h-1.2zM788 826h1.2v1.2h-1.2zM904 849h1.2v1.2h-1.2zM1015 827h1.2v1.2h-1.2zM766 772h1.2v1.2h-1.2zM763 874h1.2v1.2h-1.2zM997 847h1.2v1.2h-1.2zM752 792h1.2v1.2h-1.2zM701 823h1.2v1.2h-1.2zM1065 817h1.2v1.2h-1.2zM812 851h1.2v1.2h-1.2zM1085 802h1.2v1.2h-1.2zM794 749h1.2v1.2h-1.2zM981 820h1.2v1.2h-1.2zM981 880h1.2v1.2h-1.2zM1019 759h1.2v1.2h-1.2zM1075 725h1.2v1.2h-1.2zM1012 738h1.2v1.2h-1.2zM1075 726h1.2v1.2h-1.2zM929 764h1.2v1.2h-1.2zM1014 775h1.2v1.2h-1.2zM1030 788h1.2v1.2h-1.2zM780 755h1.2v1.2h-1.2zM880 859h1.2v1.2h-1.2zM804 896h1.2v1.2h-1.2zM679 786h1.2v1.2h-1.2zM794 863h1.2v1.2h-1.2zM1083 824h1.2v1.2h-1.2zM781 750h1.2v1.2h-1.2zM912 714h1.2v1.2h-1.2zM699 848h1.2v1.2h-1.2zM985 729h1.2v1.2h-1.2zM911 729h1.2v1.2h-1.2zM1032 807h1.2v1.2h-1.2zM946 841h1.2v1.2h-1.2zM822 773h1.2v1.2h-1.2zM960 917h1.2v1.2h-1.2zM939 744h1.2v1.2h-1.2zM1019 865h1.2v1.2h-1.2zM757 813h1.2v1.2h-1.2zM1081 726h1.2v1.2h-1.2zM858 873h1.2v1.2h-1.2zM804 821h1.2v1.2h-1.2zM940 814h1.2v1.2h-1.2zM928 769h1.2v1.2h-1.2zM905 723h1.2v1.2h-1.2zM901 848h1.2v1.2h-1.2zM1059 748h1.2v1.2h-1.2zM709 788h1.2v1.2h-1.2zM733 849h1.2v1.2h-1.2zM809 834h1.2v1.2h-1.2zM853 827h1.2v1.2h-1.2zM908 840h1.2v1.2h-1.2zM995 752h1.2v1.2h-1.2zM909 889h1.2v1.2h-1.2zM887 917h1.2v1.2h-1.2zM1088 746h1.2v1.2h-1.2zM872 764h1.2v1.2h-1.2zM846 799h1.2v1.2h-1.2zM945 828h1.2v1.2h-1.2zM762 831h1.2v1.2h-1.2zM762 749h1.2v1.2h-1.2zM959 832h1.2v1.2h-1.2zM867 889h1.2v1.2h-1.2zM997 706h1.2v1.2h-1.2zM861 837h1.2v1.2h-1.2zM962 857h1.2v1.2h-1.2zM1008 740h1.2v1.2h-1.2zM882 825h1.2v1.2h-1.2zM950 790h1.2v1.2h-1.2zM782 706h1.2v1.2h-1.2zM826 763h1.2v1.2h-1.2zM835 763h1.2v1.2h-1.2zM842 831h1.2v1.2h-1.2zM958 710h1.2v1.2h-1.2zM670 768h1.2v1.2h-1.2zM844 791h1.2v1.2h-1.2zM1093 857h1.2v1.2h-1.2zM703 803h1.2v1.2h-1.2zM724 861h1.2v1.2h-1.2zM822 787h1.2v1.2h-1.2zM774 755h1.2v1.2h-1.2zM743 786h1.2v1.2h-1.2zM934 720h1.2v1.2h-1.2zM1027 859h1.2v1.2h-1.2zM855 774h1.2v1.2h-1.2zM910 738h1.2v1.2h-1.2zM895 839h1.2v1.2h-1.2zM920 787h1.2v1.2h-1.2zM1066 750h1.2v1.2h-1.2zM925 781h1.2v1.2h-1.2zM1074 755h1.2v1.2h-1.2zM935 831h1.2v1.2h-1.2zM772 882h1.2v1.2h-1.2zM888 800h1.2v1.2h-1.2zM842 810h1.2v1.2h-1.2zM984 781h1.2v1.2h-1.2zM913 772h1.2v1.2h-1.2zM798 880h1.2v1.2h-1.2zM958 916h1.2v1.2h-1.2zM1075 739h1.2v1.2h-1.2zM986 755h1.2v1.2h-1.2zM973 886h1.2v1.2h-1.2zM1055 795h1.2v1.2h-1.2zM681 785h1.2v1.2h-1.2zM1047 783h1.2v1.2h-1.2zM998 709h1.2v1.2h-1.2zM911 762h1.2v1.2h-1.2zM798 750h1.2v1.2h-1.2zM975 812h1.2v1.2h-1.2zM881 905h1.2v1.2h-1.2zM927 841h1.2v1.2h-1.2zM1012 855h1.2v1.2h-1.2zM893 911h1.2v1.2h-1.2zM1029 799h1.2v1.2h-1.2zM762 747h1.2v1.2h-1.2zM982 884h1.2v1.2h-1.2zM805 821h1.2v1.2h-1.2zM833 876h1.2v1.2h-1.2zM883 739h1.2v1.2h-1.2zM1000 807h1.2v1.2h-1.2zM795 835h1.2v1.2h-1.2zM983 728h1.2v1.2h-1.2zM828 887h1.2v1.2h-1.2zM887 909h1.2v1.2h-1.2zM1062 916h1.2v1.2h-1.2zM731 759h1.2v1.2h-1.2zM735 721h1.2v1.2h-1.2zM962 878h1.2v1.2h-1.2zM999 757h1.2v1.2h-1.2zM754 717h1.2v1.2h-1.2zM1006 902h1.2v1.2h-1.2zM699 841h1.2v1.2h-1.2zM1082 859h1.2v1.2h-1.2zM993 751h1.2v1.2h-1.2zM871 799h1.2v1.2h-1.2zM970 830h1.2v1.2h-1.2zM1082 849h1.2v1.2h-1.2zM814 904h1.2v1.2h-1.2zM965 814h1.2v1.2h-1.2zM940 745h1.2v1.2h-1.2zM1081 785h1.2v1.2h-1.2zM998 751h1.2v1.2h-1.2zM906 820h1.2v1.2h-1.2zM977 760h1.2v1.2h-1.2zM686 773h1.2v1.2h-1.2zM678 815h1.2v1.2h-1.2zM661 768h1.2v1.2h-1.2zM1054 710h1.2v1.2h-1.2zM724 790h1.2v1.2h-1.2zM684 764h1.2v1.2h-1.2zM716 739h1.2v1.2h-1.2zM1029 782h1.2v1.2h-1.2zM1006 845h1.2v1.2h-1.2zM719 746h1.2v1.2h-1.2zM993 851h1.2v1.2h-1.2zM1102 758h1.2v1.2h-1.2zM1024 849h1.2v1.2h-1.2zM976 767h1.2v1.2h-1.2zM888 909h1.2v1.2h-1.2zM950 890h1.2v1.2h-1.2zM985 855h1.2v1.2h-1.2zM1095 842h1.2v1.2h-1.2zM728 751h1.2v1.2h-1.2zM802 887h1.2v1.2h-1.2zM1063 827h1.2v1.2h-1.2zM664 808h1.2v1.2h-1.2zM880 761h1.2v1.2h-1.2zM800 796h1.2v1.2h-1.2zM1016 715h1.2v1.2h-1.2zM919 852h1.2v1.2h-1.2zM846 866h1.2v1.2h-1.2zM821 843h1.2v1.2h-1.2zM727 725h1.2v1.2h-1.2zM942 883h1.2v1.2h-1.2zM820 881h1.2v1.2h-1.2zM868 898h1.2v1.2h-1.2zM1006 762h1.2v1.2h-1.2zM874 770h1.2v1.2h-1.2zM818 723h1.2v1.2h-1.2zM932 900h1.2v1.2h-1.2zM1076 847h1.2v1.2h-1.2zM891 801h1.2v1.2h-1.2zM967 904h1.2v1.2h-1.2zM1082 878h1.2v1.2h-1.2zM951 717h1.2v1.2h-1.2zM713 832h1.2v1.2h-1.2zM968 752h1.2v1.2h-1.2zM850 906h1.2v1.2h-1.2zM1098 729h1.2v1.2h-1.2zM839 705h1.2v1.2h-1.2zM911 874h1.2v1.2h-1.2zM810 900h1.2v1.2h-1.2zM703 756h1.2v1.2h-1.2zM949 751h1.2v1.2h-1.2zM856 915h1.2v1.2h-1.2zM924 846h1.2v1.2h-1.2zM868 751h1.2v1.2h-1.2zM1066 801h1.2v1.2h-1.2zM733 825h1.2v1.2h-1.2zM889 890h1.2v1.2h-1.2zM932 756h1.2v1.2h-1.2zM1057 756h1.2v1.2h-1.2zM894 803h1.2v1.2h-1.2zM1090 819h1.2v1.2h-1.2zM869 737h1.2v1.2h-1.2zM904 743h1.2v1.2h-1.2zM732 726h1.2v1.2h-1.2zM769 733h1.2v1.2h-1.2zM1039 870h1.2v1.2h-1.2zM824 761h1.2v1.2h-1.2zM1086 771h1.2v1.2h-1.2zM988 785h1.2v1.2h-1.2zM941 829h1.2v1.2h-1.2zM831 706h1.2v1.2h-1.2zM895 743h1.2v1.2h-1.2zM1041 737h1.2v1.2h-1.2zM995 787h1.2v1.2h-1.2zM891 787h1.2v1.2h-1.2zM956 796h1.2v1.2h-1.2zM755 722h1.2v1.2h-1.2zM783 810h1.2v1.2h-1.2zM1061 844h1.2v1.2h-1.2zM1082 838h1.2v1.2h-1.2zM1032 820h1.2v1.2h-1.2zM663 803h1.2v1.2h-1.2zM972 875h1.2v1.2h-1.2zM960 823h1.2v1.2h-1.2zM799 744h1.2v1.2h-1.2zM990 835h1.2v1.2h-1.2zM1008 912h1.2v1.2h-1.2zM977 742h1.2v1.2h-1.2zM898 876h1.2v1.2h-1.2zM848 720h1.2v1.2h-1.2zM876 694h1.2v1.2h-1.2zM941 883h1.2v1.2h-1.2zM748 803h1.2v1.2h-1.2zM1080 862h1.2v1.2h-1.2zM799 863h1.2v1.2h-1.2zM955 853h1.2v1.2h-1.2zM919 700h1.2v1.2h-1.2zM1063 902h1.2v1.2h-1.2zM888 775h1.2v1.2h-1.2zM900 819h1.2v1.2h-1.2zM932 774h1.2v1.2h-1.2zM831 756h1.2v1.2h-1.2zM902 692h1.2v1.2h-1.2zM1042 832h1.2v1.2h-1.2zM775 805h1.2v1.2h-1.2zM896 739h1.2v1.2h-1.2zM1077 824h1.2v1.2h-1.2zM849 885h1.2v1.2h-1.2zM860 880h1.2v1.2h-1.2zM837 745h1.2v1.2h-1.2zM785 744h1.2v1.2h-1.2zM823 909h1.2v1.2h-1.2zM984 753h1.2v1.2h-1.2zM809 905h1.2v1.2h-1.2zM917 818h1.2v1.2h-1.2zM788 749h1.2v1.2h-1.2zM811 774h1.2v1.2h-1.2zM832 783h1.2v1.2h-1.2zM757 815h1.2v1.2h-1.2zM753 740h1.2v1.2h-1.2zM1006 728h1.2v1.2h-1.2zM1025 731h1.2v1.2h-1.2zM1093 731h1.2v1.2h-1.2zM990 782h1.2v1.2h-1.2zM1031 768h1.2v1.2h-1.2zM723 825h1.2v1.2h-1.2zM978 703h1.2v1.2h-1.2zM698 840h1.2v1.2h-1.2zM766 824h1.2v1.2h-1.2zM959 899h1.2v1.2h-1.2zM848 709h1.2v1.2h-1.2zM875 737h1.2v1.2h-1.2zM812 904h1.2v1.2h-1.2zM952 836h1.2v1.2h-1.2zM905 828h1.2v1.2h-1.2zM1071 770h1.2v1.2h-1.2zM1103 756h1.2v1.2h-1.2zM997 896h1.2v1.2h-1.2zM735 719h1.2v1.2h-1.2zM1086 718h1.2v1.2h-1.2zM736 821h1.2v1.2h-1.2zM946 769h1.2v1.2h-1.2zM993 873h1.2v1.2h-1.2zM824 735h1.2v1.2h-1.2zM757 825h1.2v1.2h-1.2zM744 797h1.2v1.2h-1.2zM1012 893h1.2v1.2h-1.2zM1005 800h1.2v1.2h-1.2zM721 830h1.2v1.2h-1.2zM1079 844h1.2v1.2h-1.2zM773 898h1.2v1.2h-1.2zM791 783h1.2v1.2h-1.2zM702 780h1.2v1.2h-1.2zM784 785h1.2v1.2h-1.2zM891 706h1.2v1.2h-1.2zM735 794h1.2v1.2h-1.2zM758 750h1.2v1.2h-1.2zM1039 890h1.2v1.2h-1.2zM1074 806h1.2v1.2h-1.2zM989 849h1.2v1.2h-1.2zM673 817h1.2v1.2h-1.2zM756 760h1.2v1.2h-1.2zM959 805h1.2v1.2h-1.2zM785 868h1.2v1.2h-1.2zM795 904h1.2v1.2h-1.2zM685 763h1.2v1.2h-1.2zM894 769h1.2v1.2h-1.2zM823 740h1.2v1.2h-1.2zM759 722h1.2v1.2h-1.2zM850 874h1.2v1.2h-1.2zM761 724h1.2v1.2h-1.2zM1026 846h1.2v1.2h-1.2zM797 844h1.2v1.2h-1.2zM937 699h1.2v1.2h-1.2zM779 759h1.2v1.2h-1.2zM915 768h1.2v1.2h-1.2zM769 788h1.2v1.2h-1.2zM912 804h1.2v1.2h-1.2zM985 852h1.2v1.2h-1.2zM1022 843h1.2v1.2h-1.2zM819 916h1.2v1.2h-1.2zM898 741h1.2v1.2h-1.2zM871 799h1.2v1.2h-1.2zM1023 815h1.2v1.2h-1.2zM1011 771h1.2v1.2h-1.2zM711 835h1.2v1.2h-1.2zM1062 901h1.2v1.2h-1.2zM1077 823h1.2v1.2h-1.2zM926 877h1.2v1.2h-1.2zM860 757h1.2v1.2h-1.2zM856 848h1.2v1.2h-1.2zM835 764h1.2v1.2h-1.2zM1040 723h1.2v1.2h-1.2zM1090 761h1.2v1.2h-1.2zM834 720h1.2v1.2h-1.2zM845 809h1.2v1.2h-1.2zM939 764h1.2v1.2h-1.2zM1101 786h1.2v1.2h-1.2zM823 804h1.2v1.2h-1.2zM1046 719h1.2v1.2h-1.2zM805 812h1.2v1.2h-1.2zM726 817h1.2v1.2h-1.2zM1017 763h1.2v1.2h-1.2zM823 786h1.2v1.2h-1.2zM727 874h1.2v1.2h-1.2zM965 780h1.2v1.2h-1.2zM824 791h1.2v1.2h-1.2zM869 836h1.2v1.2h-1.2zM828 797h1.2v1.2h-1.2zM1111 906h1.2v1.2h-1.2zM990 705h1.2v1.2h-1.2zM938 868h1.2v1.2h-1.2zM1107 832h1.2v1.2h-1.2zM1013 871h1.2v1.2h-1.2zM758 885h1.2v1.2h-1.2zM852 700h1.2v1.2h-1.2zM896 763h1.2v1.2h-1.2zM730 826h1.2v1.2h-1.2zM972 910h1.2v1.2h-1.2zM824 772h1.2v1.2h-1.2zM833 807h1.2v1.2h-1.2zM903 774h1.2v1.2h-1.2zM920 792h1.2v1.2h-1.2zM1047 865h1.2v1.2h-1.2zM711 812h1.2v1.2h-1.2zM725 864h1.2v1.2h-1.2zM950 723h1.2v1.2h-1.2zM1050 807h1.2v1.2h-1.2zM1047 918h1.2v1.2h-1.2zM741 723h1.2v1.2h-1.2zM710 808h1.2v1.2h-1.2zM1029 870h1.2v1.2h-1.2zM888 851h1.2v1.2h-1.2zM835 781h1.2v1.2h-1.2zM868 763h1.2v1.2h-1.2zM932 866h1.2v1.2h-1.2zM927 806h1.2v1.2h-1.2zM957 849h1.2v1.2h-1.2zM1030 748h1.2v1.2h-1.2zM897 769h1.2v1.2h-1.2zM786 710h1.2v1.2h-1.2zM1040 890h1.2v1.2h-1.2zM1032 907h1.2v1.2h-1.2zM1051 720h1.2v1.2h-1.2zM822 756h1.2v1.2h-1.2zM716 835h1.2v1.2h-1.2zM816 855h1.2v1.2h-1.2zM737 821h1.2v1.2h-1.2zM694 762h1.2v1.2h-1.2zM1014 738h1.2v1.2h-1.2zM761 863h1.2v1.2h-1.2zM852 763h1.2v1.2h-1.2zM1066 747h1.2v1.2h-1.2zM1042 759h1.2v1.2h-1.2zM953 874h1.2v1.2h-1.2zM1037 825h1.2v1.2h-1.2zM913 889h1.2v1.2h-1.2zM914 760h1.2v1.2h-1.2zM773 835h1.2v1.2h-1.2zM1065 858h1.2v1.2h-1.2zM760 813h1.2v1.2h-1.2zM831 698h1.2v1.2h-1.2zM733 777h1.2v1.2h-1.2zM762 704h1.2v1.2h-1.2zM1017 838h1.2v1.2h-1.2zM1040 908h1.2v1.2h-1.2zM1037 735h1.2v1.2h-1.2zM926 819h1.2v1.2h-1.2zM1078 847h1.2v1.2h-1.2zM999 886h1.2v1.2h-1.2zM839 892h1.2v1.2h-1.2zM740 721h1.2v1.2h-1.2zM928 732h1.2v1.2h-1.2zM1038 853h1.2v1.2h-1.2zM773 896h1.2v1.2h-1.2zM957 793h1.2v1.2h-1.2zM924 745h1.2v1.2h-1.2zM852 703h1.2v1.2h-1.2zM741 815h1.2v1.2h-1.2zM1069 822h1.2v1.2h-1.2zM723 837h1.2v1.2h-1.2zM1043 750h1.2v1.2h-1.2zM883 709h1.2v1.2h-1.2zM1090 797h1.2v1.2h-1.2zM845 890h1.2v1.2h-1.2zM821 811h1.2v1.2h-1.2zM874 794h1.2v1.2h-1.2zM1096 817h1.2v1.2h-1.2zM686 832h1.2v1.2h-1.2zM1105 705h1.2v1.2h-1.2zM954 913h1.2v1.2h-1.2zM969 725h1.2v1.2h-1.2zM1046 770h1.2v1.2h-1.2zM856 768h1.2v1.2h-1.2zM746 859h1.2v1.2h-1.2zM775 838h1.2v1.2h-1.2zM916 773h1.2v1.2h-1.2zM1106 809h1.2v1.2h-1.2zM913 825h1.2v1.2h-1.2zM1031 903h1.2v1.2h-1.2zM939 902h1.2v1.2h-1.2zM1083 726h1.2v1.2h-1.2zM1002 852h1.2v1.2h-1.2zM696 834h1.2v1.2h-1.2zM1051 916h1.2v1.2h-1.2zM781 821h1.2v1.2h-1.2zM680 819h1.2v1.2h-1.2zM835 837h1.2v1.2h-1.2zM801 833h1.2v1.2h-1.2zM916 803h1.2v1.2h-1.2zM795 854h1.2v1.2h-1.2zM1021 786h1.2v1.2h-1.2zM892 783h1.2v1.2h-1.2zM866 793h1.2v1.2h-1.2zM790 874h1.2v1.2h-1.2zM1082 810h1.2v1.2h-1.2zM906 699h1.2v1.2h-1.2zM1033 725h1.2v1.2h-1.2zM879 865h1.2v1.2h-1.2zM757 813h1.2v1.2h-1.2zM886 705h1.2v1.2h-1.2zM906 831h1.2v1.2h-1.2zM858 912h1.2v1.2h-1.2zM1015 727h1.2v1.2h-1.2zM721 729h1.2v1.2h-1.2zM837 768h1.2v1.2h-1.2zM920 733h1.2v1.2h-1.2zM737 804h1.2v1.2h-1.2zM733 778h1.2v1.2h-1.2zM1045 770h1.2v1.2h-1.2zM1006 813h1.2v1.2h-1.2zM1059 828h1.2v1.2h-1.2zM982 812h1.2v1.2h-1.2zM932 814h1.2v1.2h-1.2zM904 758h1.2v1.2h-1.2zM928 708h1.2v1.2h-1.2zM1064 915h1.2v1.2h-1.2zM733 719h1.2v1.2h-1.2zM983 735h1.2v1.2h-1.2zM825 905h1.2v1.2h-1.2zM834 881h1.2v1.2h-1.2zM1046 752h1.2v1.2h-1.2zM937 814h1.2v1.2h-1.2zM1065 789h1.2v1.2h-1.2zM1026 779h1.2v1.2h-1.2zM951 758h1.2v1.2h-1.2zM1031 781h1.2v1.2h-1.2zM804 890h1.2v1.2h-1.2zM793 776h1.2v1.2h-1.2zM810 897h1.2v1.2h-1.2zM879 728h1.2v1.2h-1.2zM676 756h1.2v1.2h-1.2zM825 828h1.2v1.2h-1.2zM916 726h1.2v1.2h-1.2zM773 819h1.2v1.2h-1.2zM1085 706h1.2v1.2h-1.2zM1017 754h1.2v1.2h-1.2zM728 809h1.2v1.2h-1.2zM916 791h1.2v1.2h-1.2zM919 780h1.2v1.2h-1.2zM918 793h1.2v1.2h-1.2zM853 769h1.2v1.2h-1.2zM942 766h1.2v1.2h-1.2zM873 707h1.2v1.2h-1.2zM769 891h1.2v1.2h-1.2zM995 790h1.2v1.2h-1.2zM1087 913h1.2v1.2h-1.2zM972 858h1.2v1.2h-1.2zM777 782h1.2v1.2h-1.2zM789 829h1.2v1.2h-1.2zM892 841h1.2v1.2h-1.2zM1010 758h1.2v1.2h-1.2zM781 871h1.2v1.2h-1.2zM848 852h1.2v1.2h-1.2zM1103 769h1.2v1.2h-1.2zM814 857h1.2v1.2h-1.2zM841 731h1.2v1.2h-1.2zM947 696h1.2v1.2h-1.2zM1021 870h1.2v1.2h-1.2zM1030 823h1.2v1.2h-1.2zM1046 849h1.2v1.2h-1.2zM823 790h1.2v1.2h-1.2zM1065 826h1.2v1.2h-1.2zM1044 893h1.2v1.2h-1.2zM802 728h1.2v1.2h-1.2zM709 727h1.2v1.2h-1.2zM990 702h1.2v1.2h-1.2zM880 770h1.2v1.2h-1.2zM1035 833h1.2v1.2h-1.2zM761 837h1.2v1.2h-1.2zM909 786h1.2v1.2h-1.2zM1073 859h1.2v1.2h-1.2zM771 727h1.2v1.2h-1.2zM1054 902h1.2v1.2h-1.2zM883 701h1.2v1.2h-1.2zM895 724h1.2v1.2h-1.2zM1013 832h1.2v1.2h-1.2zM1087 757h1.2v1.2h-1.2zM940 761h1.2v1.2h-1.2zM860 781h1.2v1.2h-1.2zM1010 832h1.2v1.2h-1.2zM959 832h1.2v1.2h-1.2zM1047 701h1.2v1.2h-1.2zM741 810h1.2v1.2h-1.2zM1088 726h1.2v1.2h-1.2zM737 758h1.2v1.2h-1.2zM1059 849h1.2v1.2h-1.2zM1049 906h1.2v1.2h-1.2zM941 835h1.2v1.2h-1.2zM869 856h1.2v1.2h-1.2zM852 803h1.2v1.2h-1.2zM825 776h1.2v1.2h-1.2zM753 872h1.2v1.2h-1.2zM939 816h1.2v1.2h-1.2zM761 883h1.2v1.2h-1.2zM817 740h1.2v1.2h-1.2zM909 716h1.2v1.2h-1.2zM1002 896h1.2v1.2h-1.2zM888 908h1.2v1.2h-1.2zM900 731h1.2v1.2h-1.2zM696 806h1.2v1.2h-1.2zM1097 783h1.2v1.2h-1.2zM762 898h1.2v1.2h-1.2zM896 825h1.2v1.2h-1.2zM1078 893h1.2v1.2h-1.2zM1035 738h1.2v1.2h-1.2zM880 848h1.2v1.2h-1.2zM843 888h1.2v1.2h-1.2zM900 699h1.2v1.2h-1.2zM929 828h1.2v1.2h-1.2zM680 806h1.2v1.2h-1.2zM854 916h1.2v1.2h-1.2zM779 747h1.2v1.2h-1.2zM697 735h1.2v1.2h-1.2zM829 849h1.2v1.2h-1.2zM704 730h1.2v1.2h-1.2zM861 859h1.2v1.2h-1.2zM912 780h1.2v1.2h-1.2zM708 850h1.2v1.2h-1.2zM823 725h1.2v1.2h-1.2zM714 812h1.2v1.2h-1.2zM755 819h1.2v1.2h-1.2zM661 770h1.2v1.2h-1.2zM974 791h1.2v1.2h-1.2zM853 769h1.2v1.2h-1.2zM718 771h1.2v1.2h-1.2zM902 730h1.2v1.2h-1.2zM771 883h1.2v1.2h-1.2zM1110 723h1.2v1.2h-1.2zM802 868h1.2v1.2h-1.2zM998 832h1.2v1.2h-1.2zM850 732h1.2v1.2h-1.2zM768 793h1.2v1.2h-1.2zM1040 915h1.2v1.2h-1.2zM797 786h1.2v1.2h-1.2zM1053 729h1.2v1.2h-1.2zM727 783h1.2v1.2h-1.2zM757 885h1.2v1.2h-1.2zM1034 731h1.2v1.2h-1.2zM900 730h1.2v1.2h-1.2zM1089 784h1.2v1.2h-1.2zM763 810h1.2v1.2h-1.2zM1061 864h1.2v1.2h-1.2zM732 716h1.2v1.2h-1.2zM934 742h1.2v1.2h-1.2zM972 899h1.2v1.2h-1.2zM972 831h1.2v1.2h-1.2zM1036 872h1.2v1.2h-1.2zM998 864h1.2v1.2h-1.2zM1083 797h1.2v1.2h-1.2zM847 737h1.2v1.2h-1.2zM1036 842h1.2v1.2h-1.2zM863 892h1.2v1.2h-1.2zM892 723h1.2v1.2h-1.2zM983 865h1.2v1.2h-1.2zM901 913h1.2v1.2h-1.2zM1027 797h1.2v1.2h-1.2zM1028 754h1.2v1.2h-1.2zM1066 849h1.2v1.2h-1.2zM660 786h1.2v1.2h-1.2zM1043 772h1.2v1.2h-1.2zM739 776h1.2v1.2h-1.2zM1110 862h1.2v1.2h-1.2zM1061 838h1.2v1.2h-1.2zM959 739h1.2v1.2h-1.2zM834 849h1.2v1.2h-1.2zM909 794h1.2v1.2h-1.2zM876 756h1.2v1.2h-1.2zM1032 829h1.2v1.2h-1.2zM823 788h1.2v1.2h-1.2zM1014 857h1.2v1.2h-1.2zM1029 908h1.2v1.2h-1.2zM828 874h1.2v1.2h-1.2zM872 814h1.2v1.2h-1.2zM800 905h1.2v1.2h-1.2zM947 913h1.2v1.2h-1.2zM813 896h1.2v1.2h-1.2zM875 693h1.2v1.2h-1.2zM821 719h1.2v1.2h-1.2zM704 818h1.2v1.2h-1.2zM802 880h1.2v1.2h-1.2zM881 871h1.2v1.2h-1.2zM768 724h1.2v1.2h-1.2zM1054 881h1.2v1.2h-1.2zM874 717h1.2v1.2h-1.2zM1001 728h1.2v1.2h-1.2zM784 729h1.2v1.2h-1.2zM1064 775h1.2v1.2h-1.2zM993 714h1.2v1.2h-1.2zM968 714h1.2v1.2h-1.2zM1040 778h1.2v1.2h-1.2zM862 725h1.2v1.2h-1.2zM904 796h1.2v1.2h-1.2zM899 854h1.2v1.2h-1.2zM799 871h1.2v1.2h-1.2zM890 707h1.2v1.2h-1.2zM728 745h1.2v1.2h-1.2zM840 882h1.2v1.2h-1.2zM775 748h1.2v1.2h-1.2zM656 776h1.2v1.2h-1.2zM771 811h1.2v1.2h-1.2zM951 740h1.2v1.2h-1.2zM955 776h1.2v1.2h-1.2zM1086 809h1.2v1.2h-1.2zM836 789h1.2v1.2h-1.2zM1030 713h1.2v1.2h-1.2zM777 809h1.2v1.2h-1.2zM683 812h1.2v1.2h-1.2zM1032 777h1.2v1.2h-1.2zM963 759h1.2v1.2h-1.2zM853 699h1.2v1.2h-1.2zM842 705h1.2v1.2h-1.2zM836 740h1.2v1.2h-1.2zM1086 881h1.2v1.2h-1.2zM1096 765h1.2v1.2h-1.2zM1000 915h1.2v1.2h-1.2zM1080 730h1.2v1.2h-1.2zM873 898h1.2v1.2h-1.2zM915 814h1.2v1.2h-1.2zM713 858h1.2v1.2h-1.2zM974 788h1.2v1.2h-1.2zM951 872h1.2v1.2h-1.2zM856 863h1.2v1.2h-1.2zM848 750h1.2v1.2h-1.2zM971 840h1.2v1.2h-1.2zM952 838h1.2v1.2h-1.2zM805 773h1.2v1.2h-1.2zM914 911h1.2v1.2h-1.2zM1053 848h1.2v1.2h-1.2zM752 835h1.2v1.2h-1.2zM774 790h1.2v1.2h-1.2zM866 907h1.2v1.2h-1.2zM806 700h1.2v1.2h-1.2zM986 838h1.2v1.2h-1.2zM788 834h1.2v1.2h-1.2zM734 829h1.2v1.2h-1.2zM1013 805h1.2v1.2h-1.2zM910 910h1.2v1.2h-1.2zM951 817h1.2v1.2h-1.2zM798 759h1.2v1.2h-1.2zM863 780h1.2v1.2h-1.2zM840 719h1.2v1.2h-1.2zM1003 728h1.2v1.2h-1.2zM721 751h1.2v1.2h-1.2zM1101 869h1.2v1.2h-1.2zM1061 749h1.2v1.2h-1.2zM917 849h1.2v1.2h-1.2zM764 890h1.2v1.2h-1.2zM983 737h1.2v1.2h-1.2zM779 832h1.2v1.2h-1.2zM777 861h1.2v1.2h-1.2zM850 714h1.2v1.2h-1.2zM913 902h1.2v1.2h-1.2zM706 797h1.2v1.2h-1.2zM850 822h1.2v1.2h-1.2zM736 737h1.2v1.2h-1.2zM685 799h1.2v1.2h-1.2zM924 852h1.2v1.2h-1.2zM864 775h1.2v1.2h-1.2zM738 868h1.2v1.2h-1.2zM1054 871h1.2v1.2h-1.2zM904 842h1.2v1.2h-1.2zM790 883h1.2v1.2h-1.2zM663 807h1.2v1.2h-1.2zM942 864h1.2v1.2h-1.2zM1037 827h1.2v1.2h-1.2zM697 838h1.2v1.2h-1.2zM686 781h1.2v1.2h-1.2zM655 775h1.2v1.2h-1.2zM1052 836h1.2v1.2h-1.2zM1088 847h1.2v1.2h-1.2zM932 768h1.2v1.2h-1.2zM770 831h1.2v1.2h-1.2zM1004 827h1.2v1.2h-1.2zM1074 887h1.2v1.2h-1.2zM938 731h1.2v1.2h-1.2zM916 704h1.2v1.2h-1.2zM1012 819h1.2v1.2h-1.2zM907 740h1.2v1.2h-1.2zM793 800h1.2v1.2h-1.2zM815 699h1.2v1.2h-1.2zM801 710h1.2v1.2h-1.2zM1072 711h1.2v1.2h-1.2zM882 732h1.2v1.2h-1.2zM920 852h1.2v1.2h-1.2zM1089 787h1.2v1.2h-1.2zM751 868h1.2v1.2h-1.2zM684 773h1.2v1.2h-1.2zM1025 812h1.2v1.2h-1.2zM1012 831h1.2v1.2h-1.2zM968 786h1.2v1.2h-1.2zM731 816h1.2v1.2h-1.2zM1011 822h1.2v1.2h-1.2zM791 831h1.2v1.2h-1.2zM731 747h1.2v1.2h-1.2zM1021 887h1.2v1.2h-1.2zM860 776h1.2v1.2h-1.2zM986 726h1.2v1.2h-1.2zM705 831h1.2v1.2h-1.2zM982 868h1.2v1.2h-1.2zM815 857h1.2v1.2h-1.2zM776 895h1.2v1.2h-1.2zM744 716h1.2v1.2h-1.2zM873 901h1.2v1.2h-1.2zM1064 889h1.2v1.2h-1.2zM864 728h1.2v1.2h-1.2zM681 747h1.2v1.2h-1.2zM903 748h1.2v1.2h-1.2zM685 793h1.2v1.2h-1.2zM781 763h1.2v1.2h-1.2zM672 751h1.2v1.2h-1.2zM802 775h1.2v1.2h-1.2zM674 806h1.2v1.2h-1.2zM800 861h1.2v1.2h-1.2zM721 790h1.2v1.2h-1.2zM1005 821h1.2v1.2h-1.2zM1084 903h1.2v1.2h-1.2zM776 840h1.2v1.2h-1.2zM1068 750h1.2v1.2h-1.2zM792 725h1.2v1.2h-1.2zM742 780h1.2v1.2h-1.2zM708 761h1.2v1.2h-1.2zM772 805h1.2v1.2h-1.2zM691 835h1.2v1.2h-1.2zM783 779h1.2v1.2h-1.2zM1076 730h1.2v1.2h-1.2zM774 858h1.2v1.2h-1.2zM809 877h1.2v1.2h-1.2zM1025 901h1.2v1.2h-1.2zM833 853h1.2v1.2h-1.2zM731 761h1.2v1.2h-1.2zM976 774h1.2v1.2h-1.2zM895 749h1.2v1.2h-1.2zM808 815h1.2v1.2h-1.2zM1089 724h1.2v1.2h-1.2zM1073 868h1.2v1.2h-1.2zM733 795h1.2v1.2h-1.2zM884 911h1.2v1.2h-1.2zM730 861h1.2v1.2h-1.2zM750 710h1.2v1.2h-1.2zM941 732h1.2v1.2h-1.2zM709 854h1.2v1.2h-1.2zM741 771h1.2v1.2h-1.2zM863 779h1.2v1.2h-1.2zM1083 773h1.2v1.2h-1.2zM1064 830h1.2v1.2h-1.2zM1033 710h1.2v1.2h-1.2zM1020 709h1.2v1.2h-1.2zM682 771h1.2v1.2h-1.2zM1079 850h1.2v1.2h-1.2zM837 749h1.2v1.2h-1.2zM884 804h1.2v1.2h-1.2zM714 842h1.2v1.2h-1.2zM805 751h1.2v1.2h-1.2zM999 849h1.2v1.2h-1.2zM959 887h1.2v1.2h-1.2zM857 731h1.2v1.2h-1.2zM1092 888h1.2v1.2h-1.2zM1073 874h1.2v1.2h-1.2zM917 870h1.2v1.2h-1.2zM845 890h1.2v1.2h-1.2zM1110 857h1.2v1.2h-1.2zM809 696h1.2v1.2h-1.2zM1048 892h1.2v1.2h-1.2zM813 813h1.2v1.2h-1.2zM942 731h1.2v1.2h-1.2zM1033 774h1.2v1.2h-1.2zM821 764h1.2v1.2h-1.2zM901 825h1.2v1.2h-1.2zM976 901h1.2v1.2h-1.2zM966 764h1.2v1.2h-1.2zM848 752h1.2v1.2h-1.2zM850 768h1.2v1.2h-1.2zM692 834h1.2v1.2h-1.2zM1073 789h1.2v1.2h-1.2zM849 902h1.2v1.2h-1.2zM814 893h1.2v1.2h-1.2zM943 802h1.2v1.2h-1.2zM1062 904h1.2v1.2h-1.2zM913 867h1.2v1.2h-1.2zM882 801h1.2v1.2h-1.2zM1018 801h1.2v1.2h-1.2zM925 908h1.2v1.2h-1.2zM829 738h1.2v1.2h-1.2zM976 842h1.2v1.2h-1.2zM798 784h1.2v1.2h-1.2zM781 796h1.2v1.2h-1.2zM1050 748h1.2v1.2h-1.2zM858 802h1.2v1.2h-1.2zM1004 802h1.2v1.2h-1.2zM832 877h1.2v1.2h-1.2zM1102 715h1.2v1.2h-1.2zM1091 879h1.2v1.2h-1.2zM722 805h1.2v1.2h-1.2zM694 820h1.2v1.2h-1.2zM710 788h1.2v1.2h-1.2zM751 842h1.2v1.2h-1.2zM872 840h1.2v1.2h-1.2zM813 800h1.2v1.2h-1.2zM939 711h1.2v1.2h-1.2zM969 720h1.2v1.2h-1.2zM733 773h1.2v1.2h-1.2zM1021 813h1.2v1.2h-1.2zM1016 793h1.2v1.2h-1.2zM793 890h1.2v1.2h-1.2zM775 879h1.2v1.2h-1.2zM963 705h1.2v1.2h-1.2zM763 743h1.2v1.2h-1.2zM1046 904h1.2v1.2h-1.2zM801 794h1.2v1.2h-1.2zM1069 901h1.2v1.2h-1.2zM757 747h1.2v1.2h-1.2zM787 848h1.2v1.2h-1.2zM690 807h1.2v1.2h-1.2zM799 859h1.2v1.2h-1.2zM890 722h1.2v1.2h-1.2zM1019 705h1.2v1.2h-1.2zM679 757h1.2v1.2h-1.2zM772 763h1.2v1.2h-1.2zM757 731h1.2v1.2h-1.2zM850 794h1.2v1.2h-1.2zM1065 740h1.2v1.2h-1.2zM724 730h1.2v1.2h-1.2zM1045 863h1.2v1.2h-1.2zM861 883h1.2v1.2h-1.2zM1006 754h1.2v1.2h-1.2zM917 790h1.2v1.2h-1.2zM1085 747h1.2v1.2h-1.2zM963 706h1.2v1.2h-1.2zM1092 785h1.2v1.2h-1.2zM1013 867h1.2v1.2h-1.2zM1103 904h1.2v1.2h-1.2zM736 802h1.2v1.2h-1.2zM966 894h1.2v1.2h-1.2zM834 772h1.2v1.2h-1.2zM818 767h1.2v1.2h-1.2zM901 747h1.2v1.2h-1.2zM1027 840h1.2v1.2h-1.2zM961 710h1.2v1.2h-1.2zM788 704h1.2v1.2h-1.2zM946 802h1.2v1.2h-1.2zM807 862h1.2v1.2h-1.2zM955 716h1.2v1.2h-1.2zM1038 827h1.2v1.2h-1.2zM1028 810h1.2v1.2h-1.2zM1091 747h1.2v1.2h-1.2zM840 868h1.2v1.2h-1.2zM1108 829h1.2v1.2h-1.2zM925 912h1.2v1.2h-1.2zM1081 716h1.2v1.2h-1.2zM1019 759h1.2v1.2h-1.2zM708 812h1.2v1.2h-1.2zM740 814h1.2v1.2h-1.2zM1097 788h1.2v1.2h-1.2zM879 708h1.2v1.2h-1.2zM746 750h1.2v1.2h-1.2zM864 860h1.2v1.2h-1.2zM877 859h1.2v1.2h-1.2zM903 874h1.2v1.2h-1.2zM1063 829h1.2v1.2h-1.2zM701 841h1.2v1.2h-1.2zM867 855h1.2v1.2h-1.2zM682 819h1.2v1.2h-1.2zM854 823h1.2v1.2h-1.2zM1034 701h1.2v1.2h-1.2zM848 860h1.2v1.2h-1.2zM807 882h1.2v1.2h-1.2zM693 783h1.2v1.2h-1.2zM1053 812h1.2v1.2h-1.2zM799 819h1.2v1.2h-1.2zM1036 904h1.2v1.2h-1.2zM671 804h1.2v1.2h-1.2zM919 809h1.2v1.2h-1.2zM865 752h1.2v1.2h-1.2zM822 882h1.2v1.2h-1.2zM946 801h1.2v1.2h-1.2zM864 729h1.2v1.2h-1.2zM901 860h1.2v1.2h-1.2zM870 695h1.2v1.2h-1.2zM800 873h1.2v1.2h-1.2zM826 876h1.2v1.2h-1.2zM1101 888h1.2v1.2h-1.2zM1002 790h1.2v1.2h-1.2zM827 805h1.2v1.2h-1.2zM1037 916h1.2v1.2h-1.2zM1040 800h1.2v1.2h-1.2zM848 820h1.2v1.2h-1.2zM917 718h1.2v1.2h-1.2zM733 864h1.2v1.2h-1.2zM953 790h1.2v1.2h-1.2zM1064 745h1.2v1.2h-1.2zM918 832h1.2v1.2h-1.2zM1049 756h1.2v1.2h-1.2zM860 698h1.2v1.2h-1.2zM1102 789h1.2v1.2h-1.2zM974 882h1.2v1.2h-1.2zM799 844h1.2v1.2h-1.2zM892 701h1.2v1.2h-1.2zM744 856h1.2v1.2h-1.2zM893 880h1.2v1.2h-1.2zM1075 767h1.2v1.2h-1.2zM894 780h1.2v1.2h-1.2zM1097 791h1.2v1.2h-1.2zM847 900h1.2v1.2h-1.2zM1111 867h1.2v1.2h-1.2zM898 710h1.2v1.2h-1.2zM719 790h1.2v1.2h-1.2zM895 740h1.2v1.2h-1.2zM773 855h1.2v1.2h-1.2zM1015 784h1.2v1.2h-1.2zM897 778h1.2v1.2h-1.2zM1095 747h1.2v1.2h-1.2zM820 740h1.2v1.2h-1.2zM1014 773h1.2v1.2h-1.2zM732 791h1.2v1.2h-1.2zM1080 837h1.2v1.2h-1.2zM931 768h1.2v1.2h-1.2zM1012 910h1.2v1.2h-1.2zM965 739h1.2v1.2h-1.2zM742 725h1.2v1.2h-1.2zM765 868h1.2v1.2h-1.2zM871 706h1.2v1.2h-1.2zM679 769h1.2v1.2h-1.2zM1073 881h1.2v1.2h-1.2zM1019 873h1.2v1.2h-1.2zM703 801h1.2v1.2h-1.2zM736 812h1.2v1.2h-1.2zM1052 774h1.2v1.2h-1.2zM1034 875h1.2v1.2h-1.2zM708 804h1.2v1.2h-1.2zM1012 745h1.2v1.2h-1.2zM961 870h1.2v1.2h-1.2zM950 816h1.2v1.2h-1.2zM877 745h1.2v1.2h-1.2zM811 758h1.2v1.2h-1.2zM972 782h1.2v1.2h-1.2zM747 732h1.2v1.2h-1.2zM1009 780h1.2v1.2h-1.2zM960 772h1.2v1.2h-1.2zM861 840h1.2v1.2h-1.2zM904 848h1.2v1.2h-1.2zM999 871h1.2v1.2h-1.2zM803 890h1.2v1.2h-1.2zM975 699h1.2v1.2h-1.2zM755 794h1.2v1.2h-1.2zM863 803h1.2v1.2h-1.2zM1100 704h1.2v1.2h-1.2zM912 836h1.2v1.2h-1.2zM1036 709h1.2v1.2h-1.2zM740 833h1.2v1.2h-1.2zM793 910h1.2v1.2h-1.2zM941 886h1.2v1.2h-1.2zM1025 893h1.2v1.2h-1.2zM786 724h1.2v1.2h-1.2zM1096 767h1.2v1.2h-1.2zM692 823h1.2v1.2h-1.2zM837 715h1.2v1.2h-1.2zM969 871h1.2v1.2h-1.2zM920 695h1.2v1.2h-1.2zM1026 781h1.2v1.2h-1.2zM881 887h1.2v1.2h-1.2zM853 825h1.2v1.2h-1.2zM879 752h1.2v1.2h-1.2zM808 882h1.2v1.2h-1.2zM998 806h1.2v1.2h-1.2zM833 799h1.2v1.2h-1.2zM1084 777h1.2v1.2h-1.2zM1017 740h1.2v1.2h-1.2zM881 876h1.2v1.2h-1.2zM864 794h1.2v1.2h-1.2zM989 757h1.2v1.2h-1.2zM942 748h1.2v1.2h-1.2zM818 896h1.2v1.2h-1.2zM866 718h1.2v1.2h-1.2zM931 749h1.2v1.2h-1.2zM706 765h1.2v1.2h-1.2zM800 716h1.2v1.2h-1.2zM1104 844h1.2v1.2h-1.2zM703 763h1.2v1.2h-1.2zM792 707h1.2v1.2h-1.2zM957 853h1.2v1.2h-1.2zM1038 823h1.2v1.2h-1.2zM855 746h1.2v1.2h-1.2zM762 716h1.2v1.2h-1.2zM793 778h1.2v1.2h-1.2zM1035 893h1.2v1.2h-1.2zM1047 912h1.2v1.2h-1.2zM794 891h1.2v1.2h-1.2zM808 909h1.2v1.2h-1.2zM882 797h1.2v1.2h-1.2zM936 705h1.2v1.2h-1.2zM1047 873h1.2v1.2h-1.2zM687 788h1.2v1.2h-1.2zM927 724h1.2v1.2h-1.2zM867 755h1.2v1.2h-1.2zM1022 897h1.2v1.2h-1.2zM888 858h1.2v1.2h-1.2zM914 708h1.2v1.2h-1.2zM1025 762h1.2v1.2h-1.2zM1071 861h1.2v1.2h-1.2zM892 892h1.2v1.2h-1.2zM854 836h1.2v1.2h-1.2zM879 693h1.2v1.2h-1.2zM973 837h1.2v1.2h-1.2zM835 836h1.2v1.2h-1.2zM704 784h1.2v1.2h-1.2zM1090 775h1.2v1.2h-1.2zM757 755h1.2v1.2h-1.2zM961 847h1.2v1.2h-1.2zM1011 716h1.2v1.2h-1.2zM1085 840h1.2v1.2h-1.2zM749 863h1.2v1.2h-1.2zM1102 760h1.2v1.2h-1.2zM889 700h1.2v1.2h-1.2zM897 875h1.2v1.2h-1.2zM980 831h1.2v1.2h-1.2zM924 728h1.2v1.2h-1.2zM1000 782h1.2v1.2h-1.2zM1094 918h1.2v1.2h-1.2zM1088 869h1.2v1.2h-1.2zM1080 780h1.2v1.2h-1.2zM801 826h1.2v1.2h-1.2zM909 763h1.2v1.2h-1.2zM826 822h1.2v1.2h-1.2zM1039 792h1.2v1.2h-1.2zM1050 759h1.2v1.2h-1.2zM837 721h1.2v1.2h-1.2zM873 749h1.2v1.2h-1.2zM874 905h1.2v1.2h-1.2zM929 817h1.2v1.2h-1.2zM992 878h1.2v1.2h-1.2zM958 724h1.2v1.2h-1.2zM1059 745h1.2v1.2h-1.2zM1016 864h1.2v1.2h-1.2zM871 879h1.2v1.2h-1.2zM1052 759h1.2v1.2h-1.2zM1030 725h1.2v1.2h-1.2zM814 779h1.2v1.2h-1.2zM745 797h1.2v1.2h-1.2zM724 816h1.2v1.2h-1.2zM905 720h1.2v1.2h-1.2zM743 737h1.2v1.2h-1.2zM902 871h1.2v1.2h-1.2zM870 859h1.2v1.2h-1.2zM974 911h1.2v1.2h-1.2zM744 838h1.2v1.2h-1.2zM950 811h1.2v1.2h-1.2zM817 725h1.2v1.2h-1.2zM753 764h1.2v1.2h-1.2zM782 701h1.2v1.2h-1.2zM746 746h1.2v1.2h-1.2zM983 775h1.2v1.2h-1.2zM1093 797h1.2v1.2h-1.2zM849 884h1.2v1.2h-1.2zM1045 742h1.2v1.2h-1.2zM1048 844h1.2v1.2h-1.2zM941 795h1.2v1.2h-1.2zM836 702h1.2v1.2h-1.2zM872 829h1.2v1.2h-1.2zM726 779h1.2v1.2h-1.2zM838 774h1.2v1.2h-1.2zM807 834h1.2v1.2h-1.2zM1006 866h1.2v1.2h-1.2zM860 839h1.2v1.2h-1.2zM948 785h1.2v1.2h-1.2zM722 802h1.2v1.2h-1.2zM832 708h1.2v1.2h-1.2zM1077 860h1.2v1.2h-1.2zM882 887h1.2v1.2h-1.2zM1088 733h1.2v1.2h-1.2zM690 753h1.2v1.2h-1.2zM830 766h1.2v1.2h-1.2zM954 730h1.2v1.2h-1.2zM1046 709h1.2v1.2h-1.2zM875 808h1.2v1.2h-1.2zM1085 906h1.2v1.2h-1.2zM939 707h1.2v1.2h-1.2zM717 771h1.2v1.2h-1.2zM1064 860h1.2v1.2h-1.2zM1058 763h1.2v1.2h-1.2zM857 773h1.2v1.2h-1.2zM1084 779h1.2v1.2h-1.2zM832 861h1.2v1.2h-1.2zM1043 891h1.2v1.2h-1.2zM758 861h1.2v1.2h-1.2zM720 813h1.2v1.2h-1.2zM989 873h1.2v1.2h-1.2zM886 776h1.2v1.2h-1.2zM992 714h1.2v1.2h-1.2zM851 870h1.2v1.2h-1.2zM778 819h1.2v1.2h-1.2zM776 799h1.2v1.2h-1.2zM833 757h1.2v1.2h-1.2zM1001 717h1.2v1.2h-1.2zM1032 765h1.2v1.2h-1.2zM970 762h1.2v1.2h-1.2zM840 883h1.2v1.2h-1.2zM864 739h1.2v1.2h-1.2zM959 881h1.2v1.2h-1.2zM956 726h1.2v1.2h-1.2zM862 915h1.2v1.2h-1.2zM802 789h1.2v1.2h-1.2zM1001 885h1.2v1.2h-1.2zM913 893h1.2v1.2h-1.2zM965 780h1.2v1.2h-1.2zM889 752h1.2v1.2h-1.2zM772 818h1.2v1.2h-1.2zM1100 908h1.2v1.2h-1.2zM960 880h1.2v1.2h-1.2zM962 758h1.2v1.2h-1.2zM982 712h1.2v1.2h-1.2zM1051 753h1.2v1.2h-1.2zM867 711h1.2v1.2h-1.2zM784 735h1.2v1.2h-1.2zM869 833h1.2v1.2h-1.2zM852 821h1.2v1.2h-1.2zM869 889h1.2v1.2h-1.2zM803 818h1.2v1.2h-1.2zM844 821h1.2v1.2h-1.2zM892 880h1.2v1.2h-1.2zM1019 873h1.2v1.2h-1.2zM922 908h1.2v1.2h-1.2zM924 717h1.2v1.2h-1.2zM985 740h1.2v1.2h-1.2zM935 745h1.2v1.2h-1.2zM1017 757h1.2v1.2h-1.2zM880 756h1.2v1.2h-1.2zM993 817h1.2v1.2h-1.2zM885 789h1.2v1.2h-1.2zM1037 736h1.2v1.2h-1.2zM707 829h1.2v1.2h-1.2zM720 858h1.2v1.2h-1.2zM1058 790h1.2v1.2h-1.2zM742 811h1.2v1.2h-1.2zM748 868h1.2v1.2h-1.2zM951 824h1.2v1.2h-1.2zM1109 810h1.2v1.2h-1.2zM998 876h1.2v1.2h-1.2zM857 910h1.2v1.2h-1.2zM783 798h1.2v1.2h-1.2zM775 896h1.2v1.2h-1.2zM1101 792h1.2v1.2h-1.2zM742 733h1.2v1.2h-1.2zM902 888h1.2v1.2h-1.2zM723 825h1.2v1.2h-1.2zM1107 802h1.2v1.2h-1.2zM910 737h1.2v1.2h-1.2zM977 716h1.2v1.2h-1.2zM1023 859h1.2v1.2h-1.2zM1027 796h1.2v1.2h-1.2zM791 912h1.2v1.2h-1.2zM732 766h1.2v1.2h-1.2zM781 715h1.2v1.2h-1.2zM941 712h1.2v1.2h-1.2zM1091 793h1.2v1.2h-1.2zM879 859h1.2v1.2h-1.2zM777 731h1.2v1.2h-1.2zM988 774h1.2v1.2h-1.2zM876 723h1.2v1.2h-1.2zM699 763h1.2v1.2h-1.2zM853 739h1.2v1.2h-1.2zM716 801h1.2v1.2h-1.2zM895 883h1.2v1.2h-1.2zM976 833h1.2v1.2h-1.2zM970 725h1.2v1.2h-1.2zM1024 882h1.2v1.2h-1.2zM708 819h1.2v1.2h-1.2zM1056 772h1.2v1.2h-1.2zM1074 891h1.2v1.2h-1.2zM877 782h1.2v1.2h-1.2zM820 865h1.2v1.2h-1.2zM968 814h1.2v1.2h-1.2zM845 820h1.2v1.2h-1.2zM825 843h1.2v1.2h-1.2zM1053 716h1.2v1.2h-1.2zM987 725h1.2v1.2h-1.2zM1022 830h1.2v1.2h-1.2zM947 727h1.2v1.2h-1.2zM911 715h1.2v1.2h-1.2zM854 750h1.2v1.2h-1.2zM1003 760h1.2v1.2h-1.2zM707 782h1.2v1.2h-1.2zM940 697h1.2v1.2h-1.2zM814 713h1.2v1.2h-1.2zM1107 902h1.2v1.2h-1.2zM1028 789h1.2v1.2h-1.2zM966 700h1.2v1.2h-1.2zM1051 887h1.2v1.2h-1.2zM884 787h1.2v1.2h-1.2zM1012 778h1.2v1.2h-1.2zM889 695h1.2v1.2h-1.2zM933 723h1.2v1.2h-1.2zM716 824h1.2v1.2h-1.2zM1041 882h1.2v1.2h-1.2zM904 910h1.2v1.2h-1.2zM814 911h1.2v1.2h-1.2zM675 779h1.2v1.2h-1.2zM1108 788h1.2v1.2h-1.2zM907 895h1.2v1.2h-1.2zM937 786h1.2v1.2h-1.2zM801 757h1.2v1.2h-1.2zM1022 794h1.2v1.2h-1.2zM1103 783h1.2v1.2h-1.2zM809 860h1.2v1.2h-1.2zM985 856h1.2v1.2h-1.2zM798 703h1.2v1.2h-1.2zM1001 781h1.2v1.2h-1.2zM777 847h1.2v1.2h-1.2zM976 820h1.2v1.2h-1.2zM1059 741h1.2v1.2h-1.2zM811 762h1.2v1.2h-1.2zM917 854h1.2v1.2h-1.2zM764 822h1.2v1.2h-1.2zM706 745h1.2v1.2h-1.2zM741 780h1.2v1.2h-1.2zM951 892h1.2v1.2h-1.2zM846 823h1.2v1.2h-1.2zM929 889h1.2v1.2h-1.2zM700 754h1.2v1.2h-1.2zM1029 786h1.2v1.2h-1.2zM857 904h1.2v1.2h-1.2zM1083 787h1.2v1.2h-1.2zM1020 749h1.2v1.2h-1.2zM688 763h1.2v1.2h-1.2zM1024 874h1.2v1.2h-1.2zM910 871h1.2v1.2h-1.2zM824 904h1.2v1.2h-1.2zM759 866h1.2v1.2h-1.2zM811 847h1.2v1.2h-1.2zM915 751h1.2v1.2h-1.2zM752 743h1.2v1.2h-1.2zM1052 807h1.2v1.2h-1.2zM833 718h1.2v1.2h-1.2zM749 818h1.2v1.2h-1.2zM1011 728h1.2v1.2h-1.2zM1053 737h1.2v1.2h-1.2zM869 716h1.2v1.2h-1.2zM855 904h1.2v1.2h-1.2zM1086 705h1.2v1.2h-1.2zM730 870h1.2v1.2h-1.2zM717 856h1.2v1.2h-1.2zM1107 863h1.2v1.2h-1.2zM855 735h1.2v1.2h-1.2zM868 810h1.2v1.2h-1.2zM984 744h1.2v1.2h-1.2zM815 738h1.2v1.2h-1.2zM828 894h1.2v1.2h-1.2zM1029 733h1.2v1.2h-1.2zM974 739h1.2v1.2h-1.2zM1097 865h1.2v1.2h-1.2zM789 828h1.2v1.2h-1.2zM836 779h1.2v1.2h-1.2zM1045 832h1.2v1.2h-1.2zM791 877h1.2v1.2h-1.2zM1052 826h1.2v1.2h-1.2zM962 847h1.2v1.2h-1.2zM1002 869h1.2v1.2h-1.2zM736 736h1.2v1.2h-1.2zM841 731h1.2v1.2h-1.2zM667 784h1.2v1.2h-1.2zM904 777h1.2v1.2h-1.2zM1063 907h1.2v1.2h-1.2zM909 757h1.2v1.2h-1.2zM849 800h1.2v1.2h-1.2zM841 726h1.2v1.2h-1.2zM733 799h1.2v1.2h-1.2zM818 733h1.2v1.2h-1.2zM793 782h1.2v1.2h-1.2zM881 778h1.2v1.2h-1.2zM1054 818h1.2v1.2h-1.2zM1058 897h1.2v1.2h-1.2zM1021 809h1.2v1.2h-1.2zM1110 846h1.2v1.2h-1.2zM856 729h1.2v1.2h-1.2zM786 907h1.2v1.2h-1.2zM1084 848h1.2v1.2h-1.2zM840 725h1.2v1.2h-1.2zM1100 724h1.2v1.2h-1.2zM856 695h1.2v1.2h-1.2zM1033 851h1.2v1.2h-1.2zM870 823h1.2v1.2h-1.2zM1024 773h1.2v1.2h-1.2zM732 834h1.2v1.2h-1.2zM1090 777h1.2v1.2h-1.2zM1022 744h1.2v1.2h-1.2zM827 870h1.2v1.2h-1.2zM976 705h1.2v1.2h-1.2zM846 814h1.2v1.2h-1.2zM759 790h1.2v1.2h-1.2zM862 850h1.2v1.2h-1.2zM785 905h1.2v1.2h-1.2zM818 840h1.2v1.2h-1.2zM962 894h1.2v1.2h-1.2zM764 786h1.2v1.2h-1.2zM980 747h1.2v1.2h-1.2zM668 798h1.2v1.2h-1.2zM844 717h1.2v1.2h-1.2zM723 789h1.2v1.2h-1.2zM927 773h1.2v1.2h-1.2zM844 694h1.2v1.2h-1.2zM835 913h1.2v1.2h-1.2zM1102 794h1.2v1.2h-1.2zM1068 761h1.2v1.2h-1.2zM1072 902h1.2v1.2h-1.2zM1044 714h1.2v1.2h-1.2zM730 739h1.2v1.2h-1.2zM839 707h1.2v1.2h-1.2zM880 842h1.2v1.2h-1.2zM649 775h1.2v1.2h-1.2zM1096 913h1.2v1.2h-1.2zM851 721h1.2v1.2h-1.2zM960 831h1.2v1.2h-1.2zM872 830h1.2v1.2h-1.2zM1096 791h1.2v1.2h-1.2zM908 746h1.2v1.2h-1.2zM896 825h1.2v1.2h-1.2zM769 771h1.2v1.2h-1.2zM1032 889h1.2v1.2h-1.2zM1024 768h1.2v1.2h-1.2zM1034 905h1.2v1.2h-1.2zM1104 740h1.2v1.2h-1.2zM788 763h1.2v1.2h-1.2zM879 739h1.2v1.2h-1.2zM1029 711h1.2v1.2h-1.2zM709 743h1.2v1.2h-1.2zM840 712h1.2v1.2h-1.2zM991 826h1.2v1.2h-1.2zM861 874h1.2v1.2h-1.2zM811 715h1.2v1.2h-1.2zM981 858h1.2v1.2h-1.2zM893 811h1.2v1.2h-1.2zM1095 822h1.2v1.2h-1.2zM872 844h1.2v1.2h-1.2zM721 767h1.2v1.2h-1.2zM876 787h1.2v1.2h-1.2zM724 843h1.2v1.2h-1.2zM971 821h1.2v1.2h-1.2zM790 833h1.2v1.2h-1.2zM1044 873h1.2v1.2h-1.2zM686 759h1.2v1.2h-1.2zM973 856h1.2v1.2h-1.2zM782 810h1.2v1.2h-1.2zM903 882h1.2v1.2h-1.2zM761 841h1.2v1.2h-1.2zM915 847h1.2v1.2h-1.2zM1083 820h1.2v1.2h-1.2zM883 851h1.2v1.2h-1.2zM738 846h1.2v1.2h-1.2zM792 835h1.2v1.2h-1.2zM835 856h1.2v1.2h-1.2zM1049 718h1.2v1.2h-1.2zM869 910h1.2v1.2h-1.2zM1008 876h1.2v1.2h-1.2zM723 751h1.2v1.2h-1.2zM827 774h1.2v1.2h-1.2zM1053 895h1.2v1.2h-1.2zM968 848h1.2v1.2h-1.2zM723 817h1.2v1.2h-1.2zM869 724h1.2v1.2h-1.2zM980 868h1.2v1.2h-1.2zM799 868h1.2v1.2h-1.2zM955 773h1.2v1.2h-1.2zM1041 735h1.2v1.2h-1.2zM913 880h1.2v1.2h-1.2zM651 784h1.2v1.2h-1.2zM707 824h1.2v1.2h-1.2zM707 854h1.2v1.2h-1.2zM987 760h1.2v1.2h-1.2zM741 886h1.2v1.2h-1.2zM751 824h1.2v1.2h-1.2zM1009 802h1.2v1.2h-1.2zM816 790h1.2v1.2h-1.2zM1078 913h1.2v1.2h-1.2zM1024 770h1.2v1.2h-1.2zM728 865h1.2v1.2h-1.2zM1044 867h1.2v1.2h-1.2zM668 807h1.2v1.2h-1.2zM1001 805h1.2v1.2h-1.2zM836 915h1.2v1.2h-1.2zM826 768h1.2v1.2h-1.2zM704 742h1.2v1.2h-1.2zM777 862h1.2v1.2h-1.2zM818 702h1.2v1.2h-1.2zM849 829h1.2v1.2h-1.2zM1063 835h1.2v1.2h-1.2zM843 741h1.2v1.2h-1.2zM919 885h1.2v1.2h-1.2zM687 763h1.2v1.2h-1.2zM1079 724h1.2v1.2h-1.2zM877 708h1.2v1.2h-1.2zM922 740h1.2v1.2h-1.2zM932 807h1.2v1.2h-1.2zM933 880h1.2v1.2h-1.2zM1045 882h1.2v1.2h-1.2zM1075 835h1.2v1.2h-1.2zM920 869h1.2v1.2h-1.2zM689 825h1.2v1.2h-1.2zM932 742h1.2v1.2h-1.2zM830 802h1.2v1.2h-1.2zM1019 709h1.2v1.2h-1.2zM1068 915h1.2v1.2h-1.2zM1043 847h1.2v1.2h-1.2zM1025 828h1.2v1.2h-1.2zM771 734h1.2v1.2h-1.2zM814 746h1.2v1.2h-1.2zM1008 814h1.2v1.2h-1.2zM837 874h1.2v1.2h-1.2zM874 914h1.2v1.2h-1.2zM1071 845h1.2v1.2h-1.2zM1094 741h1.2v1.2h-1.2zM794 739h1.2v1.2h-1.2zM838 834h1.2v1.2h-1.2zM1002 806h1.2v1.2h-1.2zM1056 750h1.2v1.2h-1.2zM895 748h1.2v1.2h-1.2zM1000 702h1.2v1.2h-1.2zM674 803h1.2v1.2h-1.2zM799 767h1.2v1.2h-1.2zM988 885h1.2v1.2h-1.2zM1065 787h1.2v1.2h-1.2zM1028 709h1.2v1.2h-1.2zM650 770h1.2v1.2h-1.2zM857 832h1.2v1.2h-1.2zM1078 762h1.2v1.2h-1.2zM942 748h1.2v1.2h-1.2zM899 792h1.2v1.2h-1.2zM1041 812h1.2v1.2h-1.2zM670 810h1.2v1.2h-1.2zM681 824h1.2v1.2h-1.2zM885 798h1.2v1.2h-1.2zM884 815h1.2v1.2h-1.2zM799 913h1.2v1.2h-1.2zM1037 866h1.2v1.2h-1.2zM1020 812h1.2v1.2h-1.2zM994 797h1.2v1.2h-1.2zM900 873h1.2v1.2h-1.2zM803 705h1.2v1.2h-1.2zM938 710h1.2v1.2h-1.2zM779 892h1.2v1.2h-1.2zM1094 780h1.2v1.2h-1.2zM849 779h1.2v1.2h-1.2zM734 851h1.2v1.2h-1.2zM1103 909h1.2v1.2h-1.2zM835 913h1.2v1.2h-1.2zM681 757h1.2v1.2h-1.2zM855 908h1.2v1.2h-1.2zM787 800h1.2v1.2h-1.2zM904 834h1.2v1.2h-1.2zM935 881h1.2v1.2h-1.2zM781 713h1.2v1.2h-1.2zM1069 872h1.2v1.2h-1.2zM877 709h1.2v1.2h-1.2zM666 755h1.2v1.2h-1.2zM880 719h1.2v1.2h-1.2zM988 816h1.2v1.2h-1.2zM977 911h1.2v1.2h-1.2zM988 700h1.2v1.2h-1.2zM777 886h1.2v1.2h-1.2zM836 797h1.2v1.2h-1.2zM964 864h1.2v1.2h-1.2zM974 806h1.2v1.2h-1.2zM933 821h1.2v1.2h-1.2zM674 807h1.2v1.2h-1.2zM1034 799h1.2v1.2h-1.2zM998 808h1.2v1.2h-1.2zM645 773h1.2v1.2h-1.2zM843 767h1.2v1.2h-1.2zM1110 854h1.2v1.2h-1.2zM1050 706h1.2v1.2h-1.2zM833 904h1.2v1.2h-1.2zM674 819h1.2v1.2h-1.2zM928 737h1.2v1.2h-1.2zM943 762h1.2v1.2h-1.2zM1013 874h1.2v1.2h-1.2zM971 701h1.2v1.2h-1.2zM870 703h1.2v1.2h-1.2zM1038 894h1.2v1.2h-1.2zM1084 762h1.2v1.2h-1.2zM891 851h1.2v1.2h-1.2zM878 898h1.2v1.2h-1.2zM852 863h1.2v1.2h-1.2zM1042 909h1.2v1.2h-1.2zM1098 903h1.2v1.2h-1.2zM804 778h1.2v1.2h-1.2zM1023 829h1.2v1.2h-1.2zM887 738h1.2v1.2h-1.2zM903 833h1.2v1.2h-1.2zM953 897h1.2v1.2h-1.2zM940 840h1.2v1.2h-1.2zM810 871h1.2v1.2h-1.2zM869 853h1.2v1.2h-1.2zM949 766h1.2v1.2h-1.2zM803 781h1.2v1.2h-1.2zM842 761h1.2v1.2h-1.2zM971 773h1.2v1.2h-1.2zM1034 822h1.2v1.2h-1.2zM1078 750h1.2v1.2h-1.2zM791 904h1.2v1.2h-1.2zM870 898h1.2v1.2h-1.2zM830 731h1.2v1.2h-1.2zM980 855h1.2v1.2h-1.2zM1033 906h1.2v1.2h-1.2zM870 859h1.2v1.2h-1.2zM1079 809h1.2v1.2h-1.2zM1025 894h1.2v1.2h-1.2zM847 811h1.2v1.2h-1.2zM1106 890h1.2v1.2h-1.2zM841 775h1.2v1.2h-1.2zM809 851h1.2v1.2h-1.2zM978 757h1.2v1.2h-1.2zM993 815h1.2v1.2h-1.2zM997 809h1.2v1.2h-1.2zM812 709h1.2v1.2h-1.2zM980 737h1.2v1.2h-1.2zM765 849h1.2v1.2h-1.2zM642 774h1.2v1.2h-1.2zM1074 753h1.2v1.2h-1.2zM810 737h1.2v1.2h-1.2zM1053 860h1.2v1.2h-1.2zM993 727h1.2v1.2h-1.2zM822 825h1.2v1.2h-1.2zM729 756h1.2v1.2h-1.2zM999 876h1.2v1.2h-1.2zM1028 790h1.2v1.2h-1.2zM870 852h1.2v1.2h-1.2zM785 871h1.2v1.2h-1.2zM708 736h1.2v1.2h-1.2zM857 751h1.2v1.2h-1.2zM1057 724h1.2v1.2h-1.2zM677 805h1.2v1.2h-1.2zM727 716h1.2v1.2h-1.2zM918 875h1.2v1.2h-1.2zM938 764h1.2v1.2h-1.2zM1046 795h1.2v1.2h-1.2zM897 775h1.2v1.2h-1.2zM775 880h1.2v1.2h-1.2zM871 753h1.2v1.2h-1.2zM686 812h1.2v1.2h-1.2zM758 850h1.2v1.2h-1.2zM747 828h1.2v1.2h-1.2zM723 851h1.2v1.2h-1.2zM891 883h1.2v1.2h-1.2zM975 916h1.2v1.2h-1.2zM993 788h1.2v1.2h-1.2zM807 835h1.2v1.2h-1.2zM914 736h1.2v1.2h-1.2zM911 854h1.2v1.2h-1.2zM941 711h1.2v1.2h-1.2zM872 859h1.2v1.2h-1.2zM957 712h1.2v1.2h-1.2zM751 787h1.2v1.2h-1.2zM899 746h1.2v1.2h-1.2zM1012 885h1.2v1.2h-1.2zM921 765h1.2v1.2h-1.2zM981 814h1.2v1.2h-1.2zM1104 745h1.2v1.2h-1.2zM957 734h1.2v1.2h-1.2zM749 798h1.2v1.2h-1.2zM1024 794h1.2v1.2h-1.2zM732 737h1.2v1.2h-1.2zM961 852h1.2v1.2h-1.2zM1101 747h1.2v1.2h-1.2zM1029 776h1.2v1.2h-1.2zM823 741h1.2v1.2h-1.2zM847 791h1.2v1.2h-1.2zM946 753h1.2v1.2h-1.2zM1030 812h1.2v1.2h-1.2zM800 908h1.2v1.2h-1.2zM1078 730h1.2v1.2h-1.2zM950 851h1.2v1.2h-1.2zM922 765h1.2v1.2h-1.2zM1049 913h1.2v1.2h-1.2zM910 783h1.2v1.2h-1.2zM992 888h1.2v1.2h-1.2zM817 809h1.2v1.2h-1.2zM1024 831h1.2v1.2h-1.2zM1058 771h1.2v1.2h-1.2zM725 772h1.2v1.2h-1.2zM877 762h1.2v1.2h-1.2zM934 724h1.2v1.2h-1.2zM858 796h1.2v1.2h-1.2zM711 822h1.2v1.2h-1.2zM845 756h1.2v1.2h-1.2zM928 722h1.2v1.2h-1.2zM715 811h1.2v1.2h-1.2zM919 822h1.2v1.2h-1.2zM766 777h1.2v1.2h-1.2zM1071 843h1.2v1.2h-1.2zM875 913h1.2v1.2h-1.2zM921 788h1.2v1.2h-1.2zM949 698h1.2v1.2h-1.2zM1034 848h1.2v1.2h-1.2zM968 863h1.2v1.2h-1.2zM712 813h1.2v1.2h-1.2zM726 822h1.2v1.2h-1.2zM816 758h1.2v1.2h-1.2zM881 908h1.2v1.2h-1.2zM774 768h1.2v1.2h-1.2zM877 841h1.2v1.2h-1.2zM731 850h1.2v1.2h-1.2zM1084 798h1.2v1.2h-1.2zM789 769h1.2v1.2h-1.2zM1041 817h1.2v1.2h-1.2zM911 851h1.2v1.2h-1.2zM994 859h1.2v1.2h-1.2zM1023 890h1.2v1.2h-1.2zM1003 759h1.2v1.2h-1.2zM838 819h1.2v1.2h-1.2zM979 756h1.2v1.2h-1.2zM743 789h1.2v1.2h-1.2zM897 786h1.2v1.2h-1.2zM993 768h1.2v1.2h-1.2zM1018 884h1.2v1.2h-1.2zM777 716h1.2v1.2h-1.2zM811 742h1.2v1.2h-1.2zM818 803h1.2v1.2h-1.2zM928 849h1.2v1.2h-1.2zM1088 761h1.2v1.2h-1.2zM733 863h1.2v1.2h-1.2zM791 809h1.2v1.2h-1.2zM857 833h1.2v1.2h-1.2zM771 854h1.2v1.2h-1.2zM1052 703h1.2v1.2h-1.2zM938 856h1.2v1.2h-1.2zM1097 753h1.2v1.2h-1.2zM780 735h1.2v1.2h-1.2zM1102 759h1.2v1.2h-1.2zM978 753h1.2v1.2h-1.2zM765 843h1.2v1.2h-1.2zM1007 912h1.2v1.2h-1.2zM1101 702h1.2v1.2h-1.2zM763 846h1.2v1.2h-1.2zM1033 716h1.2v1.2h-1.2zM1044 707h1.2v1.2h-1.2zM783 809h1.2v1.2h-1.2zM975 755h1.2v1.2h-1.2zM1085 731h1.2v1.2h-1.2zM684 766h1.2v1.2h-1.2zM771 869h1.2v1.2h-1.2zM1045 908h1.2v1.2h-1.2zM768 860h1.2v1.2h-1.2zM781 861h1.2v1.2h-1.2zM904 795h1.2v1.2h-1.2zM1037 783h1.2v1.2h-1.2zM699 786h1.2v1.2h-1.2zM1038 700h1.2v1.2h-1.2zM798 806h1.2v1.2h-1.2zM793 788h1.2v1.2h-1.2zM895 730h1.2v1.2h-1.2zM914 724h1.2v1.2h-1.2zM992 745h1.2v1.2h-1.2zM1066 750h1.2v1.2h-1.2zM1103 915h1.2v1.2h-1.2zM981 735h1.2v1.2h-1.2zM1017 916h1.2v1.2h-1.2zM920 806h1.2v1.2h-1.2zM1037 827h1.2v1.2h-1.2zM696 825h1.2v1.2h-1.2zM986 755h1.2v1.2h-1.2zM1015 716h1.2v1.2h-1.2zM760 818h1.2v1.2h-1.2zM957 717h1.2v1.2h-1.2zM836 727h1.2v1.2h-1.2zM1079 742h1.2v1.2h-1.2z" fill="#3a2004" fill-opacity="0.55"/><path d="M1166 597h1.5v1.5h-1.5zM848 524h1.5v1.5h-1.5zM1223 455h1.5v1.5h-1.5zM1287 489h1.5v1.5h-1.5zM739 519h1.5v1.5h-1.5zM768 333h1.5v1.5h-1.5zM1086 539h1.5v1.5h-1.5zM611 371h1.5v1.5h-1.5zM740 472h1.5v1.5h-1.5zM944 470h1.5v1.5h-1.5zM951 557h1.5v1.5h-1.5zM952 422h1.5v1.5h-1.5zM780 316h1.5v1.5h-1.5zM773 438h1.5v1.5h-1.5zM1341 490h1.5v1.5h-1.5zM1079 615h1.5v1.5h-1.5zM1244 392h1.5v1.5h-1.5zM1218 446h1.5v1.5h-1.5zM1183 722h1.5v1.5h-1.5zM785 343h1.5v1.5h-1.5zM1258 520h1.5v1.5h-1.5zM964 357h1.5v1.5h-1.5zM597 341h1.5v1.5h-1.5zM827 524h1.5v1.5h-1.5zM1135 375h1.5v1.5h-1.5zM828 553h1.5v1.5h-1.5zM742 355h1.5v1.5h-1.5zM703 413h1.5v1.5h-1.5zM501 367h1.5v1.5h-1.5zM981 413h1.5v1.5h-1.5zM628 439h1.5v1.5h-1.5zM1306 467h1.5v1.5h-1.5zM1421 457h1.5v1.5h-1.5zM1007 342h1.5v1.5h-1.5zM842 341h1.5v1.5h-1.5zM593 371h1.5v1.5h-1.5zM1279 435h1.5v1.5h-1.5zM1057 408h1.5v1.5h-1.5zM762 440h1.5v1.5h-1.5zM500 329h1.5v1.5h-1.5zM1172 565h1.5v1.5h-1.5zM652 385h1.5v1.5h-1.5zM800 317h1.5v1.5h-1.5zM1144 509h1.5v1.5h-1.5zM911 546h1.5v1.5h-1.5zM1039 635h1.5v1.5h-1.5zM1375 609h1.5v1.5h-1.5zM1312 409h1.5v1.5h-1.5zM691 305h1.5v1.5h-1.5zM1399 506h1.5v1.5h-1.5zM1129 558h1.5v1.5h-1.5zM763 393h1.5v1.5h-1.5zM1341 602h1.5v1.5h-1.5zM1425 458h1.5v1.5h-1.5zM1115 381h1.5v1.5h-1.5zM669 486h1.5v1.5h-1.5zM1413 447h1.5v1.5h-1.5zM1220 505h1.5v1.5h-1.5zM1344 487h1.5v1.5h-1.5zM1104 774h1.5v1.5h-1.5zM865 333h1.5v1.5h-1.5zM955 423h1.5v1.5h-1.5zM939 322h1.5v1.5h-1.5zM993 515h1.5v1.5h-1.5zM731 359h1.5v1.5h-1.5zM559 362h1.5v1.5h-1.5zM1177 771h1.5v1.5h-1.5zM1158 735h1.5v1.5h-1.5zM1223 590h1.5v1.5h-1.5zM1005 403h1.5v1.5h-1.5zM513 313h1.5v1.5h-1.5zM801 453h1.5v1.5h-1.5zM920 411h1.5v1.5h-1.5zM749 492h1.5v1.5h-1.5zM1426 416h1.5v1.5h-1.5zM964 407h1.5v1.5h-1.5zM1309 505h1.5v1.5h-1.5zM1291 372h1.5v1.5h-1.5zM1295 398h1.5v1.5h-1.5zM497 422h1.5v1.5h-1.5zM875 517h1.5v1.5h-1.5zM1056 670h1.5v1.5h-1.5zM1251 443h1.5v1.5h-1.5zM1328 474h1.5v1.5h-1.5zM562 309h1.5v1.5h-1.5zM1034 492h1.5v1.5h-1.5zM914 327h1.5v1.5h-1.5zM1196 561h1.5v1.5h-1.5zM886 486h1.5v1.5h-1.5zM1277 683h1.5v1.5h-1.5zM1080 398h1.5v1.5h-1.5zM876 347h1.5v1.5h-1.5zM894 504h1.5v1.5h-1.5zM1216 646h1.5v1.5h-1.5zM1466 482h1.5v1.5h-1.5zM1003 355h1.5v1.5h-1.5zM1271 465h1.5v1.5h-1.5zM1037 590h1.5v1.5h-1.5zM660 403h1.5v1.5h-1.5zM700 365h1.5v1.5h-1.5zM773 492h1.5v1.5h-1.5zM1157 701h1.5v1.5h-1.5zM1436 511h1.5v1.5h-1.5zM1306 395h1.5v1.5h-1.5zM1291 413h1.5v1.5h-1.5zM803 460h1.5v1.5h-1.5zM1375 491h1.5v1.5h-1.5zM1225 478h1.5v1.5h-1.5zM1232 526h1.5v1.5h-1.5zM970 313h1.5v1.5h-1.5zM1069 620h1.5v1.5h-1.5zM1241 404h1.5v1.5h-1.5zM734 302h1.5v1.5h-1.5zM1135 510h1.5v1.5h-1.5zM781 319h1.5v1.5h-1.5zM1155 510h1.5v1.5h-1.5zM1103 539h1.5v1.5h-1.5zM634 403h1.5v1.5h-1.5zM1153 425h1.5v1.5h-1.5zM620 376h1.5v1.5h-1.5zM1286 394h1.5v1.5h-1.5zM861 401h1.5v1.5h-1.5zM753 341h1.5v1.5h-1.5zM1063 517h1.5v1.5h-1.5zM1093 738h1.5v1.5h-1.5zM1142 489h1.5v1.5h-1.5zM1331 519h1.5v1.5h-1.5zM1171 379h1.5v1.5h-1.5zM1359 431h1.5v1.5h-1.5zM1432 491h1.5v1.5h-1.5zM859 382h1.5v1.5h-1.5zM935 520h1.5v1.5h-1.5zM1456 447h1.5v1.5h-1.5zM986 505h1.5v1.5h-1.5zM743 370h1.5v1.5h-1.5zM949 526h1.5v1.5h-1.5zM526 350h1.5v1.5h-1.5zM1311 557h1.5v1.5h-1.5zM1365 529h1.5v1.5h-1.5zM912 497h1.5v1.5h-1.5zM931 328h1.5v1.5h-1.5zM565 347h1.5v1.5h-1.5zM618 399h1.5v1.5h-1.5zM999 355h1.5v1.5h-1.5zM770 315h1.5v1.5h-1.5zM1086 523h1.5v1.5h-1.5zM1246 417h1.5v1.5h-1.5zM659 389h1.5v1.5h-1.5zM930 337h1.5v1.5h-1.5zM1372 489h1.5v1.5h-1.5zM1284 434h1.5v1.5h-1.5zM880 550h1.5v1.5h-1.5zM1158 340h1.5v1.5h-1.5zM1443 516h1.5v1.5h-1.5zM1204 588h1.5v1.5h-1.5zM1296 539h1.5v1.5h-1.5zM1339 476h1.5v1.5h-1.5zM1124 763h1.5v1.5h-1.5zM1038 454h1.5v1.5h-1.5zM977 394h1.5v1.5h-1.5z" fill="#2a1604" fill-opacity="0.6"/></g></g></svg>
<div class="a" style="left:2px;top:27px;width:1582px;height:21px;background:#434343;border-radius:6px;border-bottom-left-radius:0;border-bottom-right-radius:0"></div><div class="a" style="left:2px;top:48px;width:1582px;height:5px;background:linear-gradient(rgba(67,67,67,0.75),rgba(67,67,67,0))"></div><div class="a" style="left:9px;top:31px;width:29px;height:18px;background:#303030;border-radius:4px;"></div><svg width="26" height="15" viewBox="0 0 26 15" style="left:12px;top:33px;"><path d="M2 9.5H12M2 13H12M4 7V15M9 7V15" stroke="#d8d8d8" stroke-width="1.1"/><circle cx="10" cy="5" r="3.3" fill="#d8d8d8"/><path d="M18 6.5L20.5 9L23 6.5" stroke="#bbb" stroke-width="1.2" fill="none"/></svg><svg width="26" height="22" viewBox="0 0 26 22" style="left:50px;top:29px;"><path d="M13 2L15.5 5.5H10.5ZM13 20L15.5 16.5H10.5ZM2 11L5.5 8.5V13.5ZM24 11L20.5 8.5V13.5Z" fill="#e0e0e0"/><path d="M13 6V9M13 13V16M6 11H9M17 11H20" stroke="#e0e0e0" stroke-width="1.6"/></svg><div class="t" style="left:96px;top:33px;color:#e0e0e0;">Orientation:</div><div class="a" style="left:183px;top:31px;width:98px;height:18px;background:#2c2c2c;border-radius:4px;"></div><svg width="20" height="16" viewBox="0 0 20 16" style="left:186px;top:32px;"><path d="M4 3V12H15" stroke="#d8d8d8" stroke-width="1.2" fill="none"/><path d="M4 1L6 4H2ZM17 12L14 10V14Z" fill="#d8d8d8"/><circle cx="4" cy="12" r="2" fill="#d8d8d8"/><circle cx="9" cy="7.5" r="1.3" fill="#d8d8d8"/></svg><div class="t" style="left:208px;top:33px;color:#e0e0e0;">Default</div><svg width="9" height="6" viewBox="0 0 9 6" style="left:268px;top:37px;"><path d="M1 1L4.5 4.5L8 1" stroke="#bdbdbd" stroke-width="1.4" fill="none"/></svg><div class="t" style="left:295px;top:33px;color:#e0e0e0;">Drag:</div><div class="a" style="left:340px;top:31px;width:89px;height:18px;background:#2c2c2c;border-radius:4px;"></div><div class="t" style="left:347px;top:33px;color:#e0e0e0;">Select Box</div><svg width="9" height="6" viewBox="0 0 9 6" style="left:417px;top:37px;"><path d="M1 1L4.5 4.5L8 1" stroke="#bdbdbd" stroke-width="1.4" fill="none"/></svg><div class="a" style="left:668px;top:31px;width:77px;height:17px;background:#2c2c2c;border-radius:4px;"></div><svg width="20" height="16" viewBox="0 0 20 16" style="left:671px;top:32px;"><path d="M3 2V14H16M3 14L12 5" stroke="#d8d8d8" stroke-width="1.2" fill="none"/><circle cx="3" cy="14" r="1.8" fill="none" stroke="#d8d8d8"/><path d="M17 14L13.5 12V16ZM3 0.5L5 3.5H1Z" fill="#d8d8d8"/></svg><div class="t" style="left:693px;top:33px;color:#e0e0e0;">Global</div><svg width="9" height="6" viewBox="0 0 9 6" style="left:735px;top:37px;"><path d="M1 1L4.5 4.5L8 1" stroke="#bdbdbd" stroke-width="1.4" fill="none"/></svg><div class="a" style="left:753px;top:31px;width:30px;height:17px;background:#2c2c2c;border-radius:4px;"></div><svg width="26" height="16" viewBox="0 0 26 16" style="left:756px;top:32px;"><path d="M8.5 4.5a3 3 0 0 1 4 4l-2 2M5.5 7.5l-2 2a3 3 0 0 0 4 4l2-2" stroke="#d8d8d8" stroke-width="1.3" fill="none"/><circle cx="8" cy="8" r="1.2" fill="#d8d8d8"/><path d="M16 6.5L18.5 9L21 6.5" stroke="#bbb" stroke-width="1.2" fill="none"/></svg><div class="a" style="left:791px;top:31px;width:17px;height:17px;background:#565656;border-radius:4px;border-top-right-radius:0;border-bottom-right-radius:0"></div><svg width="16" height="16" viewBox="0 0 16 16" style="left:792px;top:32px;"><path d="M4 9V7a4 4 0 0 1 8 0V9M4 9V13M12 9V13" stroke="#9a9a9a" stroke-width="2" fill="none"/></svg><div class="a" style="left:808px;top:31px;width:31px;height:17px;background:#2c2c2c;border-radius:4px;border-top-left-radius:0;border-bottom-left-radius:0"></div><svg width="28" height="16" viewBox="0 0 28 16" style="left:810px;top:32px;"><path d="M2 9V14M5 11V14M8 11V14M11 9V14M2 12H11" stroke="#d8d8d8" stroke-width="1"/><rect x="9" y="2" width="3" height="3" fill="#d8d8d8"/><path d="M18 6.5L20.5 9L23 6.5" stroke="#bbb" stroke-width="1.2" fill="none"/></svg><div class="a" style="left:847px;top:31px;width:18px;height:17px;background:#565656;border-radius:4px;border-top-right-radius:0;border-bottom-right-radius:0"></div><svg width="16" height="16" viewBox="0 0 16 16" style="left:848px;top:32px;"><circle cx="8" cy="8" r="5.5" stroke="#777" stroke-width="1" fill="none"/><circle cx="8" cy="8" r="2" fill="#cfcfcf"/></svg><div class="a" style="left:865px;top:31px;width:31px;height:17px;background:#2c2c2c;border-radius:4px;border-top-left-radius:0;border-bottom-left-radius:0"></div><svg width="28" height="16" viewBox="0 0 28 16" style="left:867px;top:32px;"><path d="M2 14C5 14 5 3 7.5 3S10 14 13 14" stroke="#9a9a9a" stroke-width="1.2" fill="none"/><path d="M19 6.5L21.5 9L24 6.5" stroke="#888" stroke-width="1.2" fill="none"/></svg><div class="a" style="left:1516px;top:31px;width:60px;height:18px;background:#2c2c2c;border-radius:4px;"></div><div class="t" style="left:1523px;top:33px;color:#e0e0e0;">Options</div><svg width="9" height="6" viewBox="0 0 9 6" style="left:1564px;top:37px;"><path d="M1 1L4.5 4.5L8 1" stroke="#bdbdbd" stroke-width="1.4" fill="none"/></svg>
<div class="a" style="left:10px;top:56px;width:108px;height:18px;background:rgba(35,35,35,0.82);border-radius:4px;"></div><svg width="16" height="16" viewBox="0 0 16 16" style="left:13px;top:57px;"><path d="M1.5 4V1.5H4M12 1.5H14.5V4M14.5 12V14.5H12M4 14.5H1.5V12" stroke="#e0e0e0" stroke-width="1.1" fill="none"/><rect x="4" y="4" width="8" height="8" fill="#e6e6e6"/></svg><div class="t" style="left:35px;top:58px;color:#e6e6e6;">Object Mode</div><svg width="9" height="6" viewBox="0 0 9 6" style="left:106px;top:62px;"><path d="M1 1L4.5 4.5L8 1" stroke="#bdbdbd" stroke-width="1.4" fill="none"/></svg><div class="a" style="left:126px;top:56px;width:35px;height:18px;background:rgba(35,35,35,0.55);border-radius:4px;"></div><div class="t" style="left:131px;top:58px;color:#e6e6e6;">View</div><div class="a" style="left:166px;top:56px;width:41px;height:18px;background:rgba(35,35,35,0.55);border-radius:4px;"></div><div class="t" style="left:171px;top:58px;color:#e6e6e6;">Select</div><div class="a" style="left:212px;top:56px;width:29px;height:18px;background:rgba(35,35,35,0.55);border-radius:4px;"></div><div class="t" style="left:217px;top:58px;color:#e6e6e6;">Add</div><div class="a" style="left:246px;top:56px;width:44px;height:18px;background:rgba(35,35,35,0.55);border-radius:4px;"></div><div class="t" style="left:251px;top:58px;color:#e6e6e6;">Object</div><div class="t" style="left:77px;top:87px;color:#f0f0f0;text-shadow:0 0 2px #000">Camera Perspective</div><div class="t" style="left:77px;top:107px;color:#f0f0f0;text-shadow:0 0 2px #000">(119) Scene Collection | terrain</div><div class="a" style="left:8px;top:87px;width:40px;height:69px;background:#2d2d2d;border-radius:5px;"></div><div class="a" style="left:8px;top:161px;width:40px;height:138px;background:#2d2d2d;border-radius:5px;"></div><div class="a" style="left:8px;top:306px;width:40px;height:68px;background:#2d2d2d;border-radius:5px;"></div><div class="a" style="left:8px;top:161px;width:40px;height:34px;background:#4772b3;border-radius:5px;border-bottom-left-radius:0;border-bottom-right-radius:0"></div><div class="a" style="left:10px;top:229px;width:36px;height:1px;background:#3a3a3a;border-radius:0px;"></div><div class="a" style="left:10px;top:264px;width:36px;height:1px;background:#3a3a3a;border-radius:0px;"></div><div class="a" style="left:10px;top:339px;width:36px;height:1px;background:#3a3a3a;border-radius:0px;"></div><svg width="32" height="28" viewBox="0 0 32 28" style="left:16px;top:92px;"><rect x="1.5" y="1.5" width="21" height="21" stroke="#e6cfa8" stroke-width="1.4" stroke-dasharray="3.2 2.2" fill="none"/><path d="M8.5 6.5V17.5L11.3 15L13.3 19.5L15.3 18.6L13.4 14.3H17.3Z" fill="#efefef"/><path d="M30 22V26H26Z" fill="#9a9a9a"/></svg><svg width="24" height="24" viewBox="0 0 24 24" style="left:16px;top:126px;"><circle cx="12" cy="12" r="10.5" stroke="#f0f0f0" stroke-width="1.8" fill="none"/><circle cx="12" cy="12" r="10.5" stroke="#b0404a" stroke-width="1.8" stroke-dasharray="4 12.5" stroke-dashoffset="2" fill="none"/><path d="M12 4.5V9.5M12 14.5V19.5M4.5 12H9.5M14.5 12H19.5" stroke="#a8a8a8" stroke-width="1.6"/></svg><svg width="24" height="24" viewBox="0 0 24 24" style="left:16px;top:166px;"><path d="M12 0.8L15.2 4.8H8.8ZM12 23.2L15.2 19.2H8.8ZM0.8 12L4.8 8.8V15.2ZM23.2 12L19.2 8.8V15.2Z" fill="#e8eefa"/><path d="M12 6V9.5M12 14.5V18M6 12H9.5M14.5 12H18" stroke="#e8eefa" stroke-width="1.8"/></svg><svg width="24" height="24" viewBox="0 0 24 24" style="left:16px;top:200px;"><path d="M3.5 10A9 9 0 0 1 19.5 6M20.5 14A9 9 0 0 1 4.5 18" stroke="#e6e6e6" stroke-width="1.7" fill="none"/><path d="M22.5 11.5L22 5L17 8.5ZM1.5 12.5L2 19L7 15.5Z" fill="#e6e6e6"/><path d="M12 8.5L15.5 12L12 15.5L8.5 12Z" fill="#c8c8c8"/></svg><svg width="28" height="24" viewBox="0 0 28 24" style="left:16px;top:235px;"><rect x="6.5" y="3.5" width="16" height="16" stroke="#e0e0e0" stroke-width="1.3" fill="none"/><rect x="3" y="11" width="10" height="10" fill="#e6e6e6"/><path d="M13 11L20 4.5M15.5 4.5H20.5V9.5" stroke="#e6e6e6" stroke-width="1.5" fill="none"/><path d="M27 20V24H23Z" fill="#9a9a9a"/></svg><svg width="24" height="24" viewBox="0 0 24 24" style="left:16px;top:271px;"><circle cx="12" cy="12" r="8.8" stroke="#e6e6e6" stroke-width="1.5" fill="none"/><rect x="8" y="8" width="8" height="8" fill="#e6e6e6"/><path d="M12 0.5L14.5 3.5H9.5ZM12 23.5L14.5 20.5H9.5ZM0.5 12L3.5 9.5V14.5ZM23.5 12L20.5 9.5V14.5Z" fill="#e6e6e6"/></svg><svg width="28" height="26" viewBox="0 0 28 26" style="left:16px;top:311px;"><path d="M5 16L17.5 3.5L21 7L8.5 19.5L4 21Z" fill="#e6e6e6"/><path d="M17.5 3.5L21 7" stroke="#2d2d2d" stroke-width="1"/><path d="M3 22C9 15 14 26 23 17" stroke="#6fc0a0" stroke-width="1.5" fill="none"/><path d="M27 22V26H23Z" fill="#9a9a9a"/></svg><svg width="26" height="26" viewBox="0 0 26 26" style="left:16px;top:345px;"><path d="M4.5 2V22.5H24" stroke="#e6e6e6" stroke-width="2.2" fill="none"/><path d="M6.5 21V9A12 12 0 0 1 18.5 21Z" fill="#7ad0a8"/><path d="M6.5 9A12 12 0 0 1 18.5 21" stroke="#e6e6e6" stroke-width="1.2" fill="none"/><path d="M2 6H5M2 10H5M2 14H5M2 18H5M8 23V25M12 23V25M16 23V25" stroke="#e6e6e6" stroke-width="1"/></svg><svg width="1920" height="1015" style="left:0;top:0"><path d="M836 100L834.8 230" stroke="#3a2a1a" stroke-width="1.1"/><path d="M846.0 86.0L856.0 86.0" stroke="#3a0c08" stroke-width="2.2" stroke-dasharray="3.5 3"/><path d="M844.8 90.5L853.5 95.5" stroke="#3a0c08" stroke-width="2.2" stroke-dasharray="3.5 3"/><path d="M841.5 93.8L846.5 102.5" stroke="#3a0c08" stroke-width="2.2" stroke-dasharray="3.5 3"/><path d="M837.0 95.0L837.0 105.0" stroke="#3a0c08" stroke-width="2.2" stroke-dasharray="3.5 3"/><path d="M832.5 93.8L827.5 102.5" stroke="#3a0c08" stroke-width="2.2" stroke-dasharray="3.5 3"/><path d="M829.2 90.5L820.5 95.5" stroke="#3a0c08" stroke-width="2.2" stroke-dasharray="3.5 3"/><path d="M828.0 86.0L818.0 86.0" stroke="#3a0c08" stroke-width="2.2" stroke-dasharray="3.5 3"/><path d="M829.2 81.5L820.5 76.5" stroke="#3a0c08" stroke-width="2.2" stroke-dasharray="3.5 3"/><path d="M832.5 78.2L827.5 69.5" stroke="#3a0c08" stroke-width="2.2" stroke-dasharray="3.5 3"/><path d="M837.0 77.0L837.0 67.0" stroke="#3a0c08" stroke-width="2.2" stroke-dasharray="3.5 3"/><path d="M841.5 78.2L846.5 69.5" stroke="#3a0c08" stroke-width="2.2" stroke-dasharray="3.5 3"/><path d="M844.8 81.5L853.5 76.5" stroke="#3a0c08" stroke-width="2.2" stroke-dasharray="3.5 3"/><circle cx="837" cy="86" r="3" stroke="#3a0c08" stroke-width="1.5" fill="none"/><path d="M845 68L858 58" stroke="#2a2a2a" stroke-width="1.6" stroke-dasharray="4 3"/><path d="M834.6 294V238" stroke="#6a8fb8" stroke-width="2.2"/><path d="M834.6 216L839.5 240H829.7Z" fill="#5b95dc"/><path d="M820 305L785 293" stroke="#d8607a" stroke-width="2" opacity="0.85"/><path d="M768 291L786 286L783 298Z" fill="#e8506c" opacity="0.85"/><path d="M820 315L788 328" stroke="#8ccc3a" stroke-width="2" opacity="0.9"/><path d="M771 335L785 323L789 334Z" fill="#86d234"/><ellipse cx="809" cy="281" rx="5" ry="7" fill="#e8607a" opacity="0.55"/><ellipse cx="806" cy="265" rx="5" ry="6" fill="#b8d040" opacity="0.55"/><ellipse cx="782" cy="310" rx="9" ry="3.5" fill="#7a8aa0" opacity="0.7"/><circle cx="834.6" cy="309.4" r="14.5" stroke="#f4dcc0" stroke-width="2.4" fill="rgba(230,150,80,0.25)"/><circle cx="834.6" cy="309.4" r="9" stroke="#e0603a" stroke-width="1.6" stroke-dasharray="2.5 2.2" fill="none"/><path d="M834.6 324.9L834.6 293.9" stroke="#1a1008" stroke-width="1.6"/><path d="M848.6 316.0L820.6 302.8" stroke="#1a1008" stroke-width="1.6"/><path d="M820.6 316.0L848.6 302.8" stroke="#1a1008" stroke-width="1.6"/><circle cx="834.6" cy="309.4" r="2.3" stroke="#2a1a0a" stroke-width="1" fill="#f0a060"/></svg><div class="a" style="left:1330px;top:56px;width:31px;height:17px;background:rgba(35,35,35,0.82);border-radius:4px;"></div><svg width="28" height="16" viewBox="0 0 28 16" style="left:1332px;top:57px;"><path d="M3 5C6 1.5 10 1.5 13 5C10 8.5 6 8.5 3 5Z" stroke="#e0e0e0" stroke-width="1.2" fill="none"/><circle cx="8" cy="5" r="1.7" fill="#e0e0e0"/><path d="M2 8L8 11L5 12L6.5 15.5Z" fill="#e0e0e0"/><path d="M19 6.5L21.5 9L24 6.5" stroke="#bbb" stroke-width="1.2" fill="none"/></svg><div class="a" style="left:1367px;top:56px;width:19px;height:17px;background:#4772b3;border-radius:4px;border-top-right-radius:0;border-bottom-right-radius:0"></div><svg width="18" height="16" viewBox="0 0 18 16" style="left:1368px;top:57px;"><path d="M3 13C4 7 9 4 14 3M10.5 2.5H14.5V6.5" stroke="#e8eef8" stroke-width="1.2" fill="none"/><circle cx="3.5" cy="13" r="1.6" stroke="#e8eef8" fill="none"/></svg><div class="a" style="left:1386px;top:56px;width:18px;height:17px;background:rgba(35,35,35,0.82);border-radius:4px;border-top-left-radius:0;border-bottom-left-radius:0"></div><svg width="9" height="6" viewBox="0 0 9 6" style="left:1390px;top:62px;"><path d="M1 1L4.5 4.5L8 1" stroke="#bdbdbd" stroke-width="1.4" fill="none"/></svg><div class="a" style="left:1412px;top:56px;width:18px;height:17px;background:#4772b3;border-radius:4px;border-top-right-radius:0;border-bottom-right-radius:0"></div><svg width="18" height="16" viewBox="0 0 18 16" style="left:1412px;top:57px;"><circle cx="7.5" cy="10" r="4.5" stroke="#e8eef8" stroke-width="1.3" fill="none"/><circle cx="11" cy="6.5" r="4.2" fill="#e8eef8"/></svg><div class="a" style="left:1430px;top:56px;width:20px;height:17px;background:rgba(35,35,35,0.82);border-radius:4px;border-top-left-radius:0;border-bottom-left-radius:0"></div><svg width="9" height="6" viewBox="0 0 9 6" style="left:1435px;top:62px;"><path d="M1 1L4.5 4.5L8 1" stroke="#bdbdbd" stroke-width="1.4" fill="none"/></svg><div class="a" style="left:1456px;top:56px;width:19px;height:17px;background:#4772b3;border-radius:4px;"></div><svg width="18" height="16" viewBox="0 0 18 16" style="left:1457px;top:57px;"><rect x="5.5" y="5.5" width="9" height="9" stroke="#e8eef8" fill="none"/><path d="M3.5 12.5V3.5H12.5" stroke="#e8eef8" fill="none"/></svg><div class="a" style="left:1482px;top:56px;width:94px;height:17px;background:rgba(35,35,35,0.82);border-radius:4px;"></div><div class="a" style="left:1482px;top:56px;width:18px;height:17px;background:#4772b3;border-radius:4px;border-top-right-radius:0;border-bottom-right-radius:0"></div><svg width="18" height="16" viewBox="0 0 18 16" style="left:1482px;top:57px;"><circle cx="9" cy="8" r="6" stroke="#e8eef8" stroke-width="1.2" fill="none"/><path d="M3 8H15M9 2C6.5 5 6.5 11 9 14C11.5 11 11.5 5 9 2" stroke="#e8eef8" stroke-width="1" fill="none"/></svg><div class="a" style="left:1501px;top:56px;width:17px;height:17px;background:#5a5a5a;border-radius:0px;"></div><svg width="18" height="16" viewBox="0 0 18 16" style="left:1501px;top:57px;"><circle cx="8.5" cy="8" r="6" fill="#d6d6d6"/></svg><div class="a" style="left:1519px;top:56px;width:18px;height:17px;background:#5a5a5a;border-radius:0px;"></div><svg width="18" height="16" viewBox="0 0 18 16" style="left:1519px;top:57px;"><circle cx="9" cy="8" r="6" stroke="#d6d6d6" stroke-width="1.2" fill="#6a6a6a"/><path d="M9 2A6 6 0 0 1 15 8H9Z" fill="#d6d6d6"/><path d="M9 8H3A6 6 0 0 0 9 14Z" fill="#d6d6d6"/></svg><div class="a" style="left:1538px;top:56px;width:19px;height:17px;background:#5a5a5a;border-radius:0px;"></div><svg width="18" height="16" viewBox="0 0 18 16" style="left:1538px;top:57px;"><circle cx="9" cy="8" r="6" stroke="#d6d6d6" stroke-width="1.2" fill="#777"/><path d="M5 10A4 4 0 0 1 11 4" stroke="#ddd" stroke-width="1" fill="none"/></svg><svg width="9" height="6" viewBox="0 0 9 6" style="left:1562px;top:62px;"><path d="M1 1L4.5 4.5L8 1" stroke="#bdbdbd" stroke-width="1.4" fill="none"/></svg><svg width="80" height="85" viewBox="0 0 80 85" style="left:1495px;top:85px;"><path d="M40 42L40 14" stroke="#4a8be0" stroke-width="2"/><path d="M40 42L16 32" stroke="#b43a4a" stroke-width="2"/><path d="M40 42L18 53" stroke="#7ab832" stroke-width="2"/><circle cx="40" cy="14" r="7.5" fill="#3f8ae8"/><text x="40" y="18.3" font-family="Liberation Sans" font-size="11" font-weight="bold" fill="#112" text-anchor="middle">Z</text><circle cx="16" cy="32" r="7.5" fill="#b43648"/><text x="16" y="36.3" font-family="Liberation Sans" font-size="11" font-weight="bold" fill="#311" text-anchor="middle">X</text><circle cx="18" cy="53" r="7.5" fill="#7ac22a"/><text x="18" y="57.3" font-family="Liberation Sans" font-size="11" font-weight="bold" fill="#131" text-anchor="middle">Y</text><circle cx="62" cy="32" r="6.5" fill="#5f8f2e"/><circle cx="64" cy="53" r="6.5" fill="#e0304c"/><circle cx="40" cy="71" r="6.5" fill="#2f5e9a"/></svg><svg width="9" height="14" viewBox="0 0 9 14" style="left:1576px;top:93px;"><path d="M7 2L2.5 7L7 12" stroke="#9a9a9a" stroke-width="1.3" fill="none"/></svg><svg width="26" height="26" viewBox="0 0 26 26" style="left:1549px;top:170px;"><circle cx="13" cy="13" r="12.5" fill="rgba(30,30,30,0.75)"/></svg><svg width="26" height="26" viewBox="0 0 26 26" style="left:1549px;top:200px;"><circle cx="13" cy="13" r="12.5" fill="rgba(30,30,30,0.75)"/></svg><svg width="26" height="26" viewBox="0 0 26 26" style="left:1549px;top:230px;"><circle cx="13" cy="13" r="12.5" fill="rgba(30,30,30,0.75)"/></svg><svg width="20" height="20" viewBox="0 0 20 20" style="left:1552px;top:173px;"><circle cx="11.5" cy="8" r="5" stroke="#e6e6e6" stroke-width="1.5" fill="none"/><path d="M8 11.5L3 16.5" stroke="#e6e6e6" stroke-width="2.4" stroke-linecap="round"/><path d="M11.5 5.5V10.5M9 8H14" stroke="#e6e6e6" stroke-width="1.2"/></svg><svg width="20" height="20" viewBox="0 0 20 20" style="left:1552px;top:203px;"><path d="M5 10V5.5a1 1 0 0 1 2 0V9V3.5a1 1 0 0 1 2 0V9V3a1 1 0 0 1 2 0V9V4.5a1 1 0 0 1 2 0V11L14.5 8.5a1 1 0 0 1 1.6 1.2L12 16H7C5.5 16 5 14 5 12Z" fill="#e6e6e6"/></svg><svg width="20" height="20" viewBox="0 0 20 20" style="left:1552px;top:233px;"><circle cx="6.5" cy="6" r="3" fill="#e6e6e6"/><circle cx="12.5" cy="6" r="3" fill="#e6e6e6"/><rect x="4" y="9" width="10" height="7" rx="1" fill="#e6e6e6"/><path d="M14 11L18 9V16L14 14Z" fill="#e6e6e6"/></svg>
<div class="a" style="left:1588px;top:27px;width:332px;height:568px;background:#282828;border-radius:6px;border-top-right-radius:0;border-bottom-right-radius:0"></div><div class="a" style="left:1588px;top:73px;width:332px;height:20px;background:#2b2b2b;border-radius:0px;"></div><div class="a" style="left:1588px;top:113px;width:332px;height:20px;background:#2b2b2b;border-radius:0px;"></div><div class="a" style="left:1588px;top:153px;width:332px;height:20px;background:#2b2b2b;border-radius:0px;"></div><div class="a" style="left:1588px;top:193px;width:332px;height:20px;background:#2b2b2b;border-radius:0px;"></div><div class="a" style="left:1588px;top:233px;width:332px;height:20px;background:#2b2b2b;border-radius:0px;"></div><div class="a" style="left:1588px;top:273px;width:332px;height:20px;background:#2b2b2b;border-radius:0px;"></div><div class="a" style="left:1588px;top:313px;width:332px;height:20px;background:#2b2b2b;border-radius:0px;"></div><div class="a" style="left:1588px;top:353px;width:332px;height:20px;background:#2b2b2b;border-radius:0px;"></div><div class="a" style="left:1588px;top:393px;width:332px;height:20px;background:#2b2b2b;border-radius:0px;"></div><div class="a" style="left:1588px;top:433px;width:332px;height:20px;background:#2b2b2b;border-radius:0px;"></div><div class="a" style="left:1588px;top:473px;width:332px;height:20px;background:#2b2b2b;border-radius:0px;"></div><div class="a" style="left:1588px;top:513px;width:332px;height:20px;background:#2b2b2b;border-radius:0px;"></div><div class="a" style="left:1588px;top:553px;width:332px;height:20px;background:#2b2b2b;border-radius:0px;"></div><div class="a" style="left:1588px;top:27px;width:332px;height:25px;background:#3d3d3d;border-radius:6px;border-top-right-radius:0;border-bottom-left-radius:0;border-bottom-right-radius:0"></div><div class="a" style="left:1597px;top:31px;width:29px;height:17px;background:#2c2c2c;border-radius:4px;"></div><svg width="26" height="16" viewBox="0 0 26 16" style="left:1599px;top:32px;"><rect x="2" y="1.5" width="4" height="2" fill="#ddd"/><path d="M3.5 3.5V13.5H6M3.5 8.5H6" stroke="#ddd" fill="none"/><rect x="7" y="7" width="7" height="3" fill="#ddd"/><rect x="7" y="12" width="7" height="3" fill="#ddd"/><path d="M17 6.5L19.5 9L22 6.5" stroke="#bbb" stroke-width="1.2" fill="none"/></svg><div class="a" style="left:1634px;top:31px;width:30px;height:17px;background:#2c2c2c;border-radius:4px;"></div><svg width="28" height="16" viewBox="0 0 28 16" style="left:1636px;top:32px;"><rect x="5.5" y="1.5" width="8" height="8" stroke="#d8d8d8" fill="none"/><path d="M3.5 3.5V11.5H11.5M1.5 5.5V13.5H9.5" stroke="#d8d8d8" fill="none"/><path d="M7 8L9.3 4L11.5 8Z" fill="#d8d8d8"/><path d="M18 6.5L20.5 9L23 6.5" stroke="#bbb" stroke-width="1.2" fill="none"/></svg><div class="a" style="left:1687px;top:30px;width:110px;height:18px;background:#1d1d1d;border-radius:4px;"></div><svg width="16" height="16" viewBox="0 0 16 16" style="left:1690px;top:32px;"><circle cx="9.5" cy="6" r="4.3" stroke="#ddd" stroke-width="1.3" fill="none"/><path d="M6.5 9L2 13.5" stroke="#ddd" stroke-width="1.6"/></svg><div class="a" style="left:1856px;top:31px;width:30px;height:17px;background:#2c2c2c;border-radius:4px;"></div><svg width="28" height="16" viewBox="0 0 28 16" style="left:1858px;top:32px;"><path d="M1.5 2H13.5L9 8V14L6 12V8Z" stroke="#ddd" stroke-width="1.2" fill="none"/><path d="M17 6.5L19.5 9L22 6.5" stroke="#bbb" stroke-width="1.2" fill="none"/></svg><div class="a" style="left:1892px;top:31px;width:20px;height:17px;background:#3a3a3a;border-radius:4px;"></div><svg width="16" height="16" viewBox="0 0 16 16" style="left:1894px;top:32px;"><path d="M2.5 6.5H10V14.5H2.5Z" stroke="#ddd" fill="none"/><circle cx="11" cy="5" r="3.5" fill="#ddd"/><path d="M11 3V7M9 5H13" stroke="#3a3a3a" stroke-width="1.2"/></svg><div class="a" style="left:1606px;top:54px;width:23px;height:19px;background:#3a3a3a;border-radius:4px;"></div><svg width="16" height="16" viewBox="0 0 16 16" style="left:1609px;top:55px;"><g opacity="1"><rect x="1.5" y="2.5" width="13" height="3" stroke="#e0e0e0" fill="none"/><path d="M2.5 5.5V14.5H13.5V5.5" stroke="#e0e0e0" fill="none"/><rect x="6" y="8" width="4" height="1.5" fill="#e0e0e0"/></g></svg><div class="t" style="left:1632px;top:57px;color:#e6e6e6;">Scene Collection</div><svg width="10" height="8" viewBox="0 0 10 8" style="left:1613px;top:79px;"><path d="M1 1H9L5 7Z" fill="#cfcfcf"/></svg><div class="a" style="left:1633px;top:77px;width:11px;height:11px;background:#e6e6e6;border-radius:2px;"></div><svg width="11" height="11" viewBox="0 0 11 11" style="left:1633px;top:77px;"><path d="M2.5 5.5L4.5 7.5L8.5 3" stroke="#222" stroke-width="1.6" fill="none"/></svg><svg width="16" height="16" viewBox="0 0 16 16" style="left:1650px;top:75px;"><g opacity="1"><rect x="1.5" y="2.5" width="13" height="3" stroke="#e0e0e0" fill="none"/><path d="M2.5 5.5V14.5H13.5V5.5" stroke="#e0e0e0" fill="none"/><rect x="6" y="8" width="4" height="1.5" fill="#e0e0e0"/></g></svg><div class="t" style="left:1672px;top:77px;color:#e6e6e6;">Collection</div><svg width="16" height="12" viewBox="0 0 16 12" style="left:1895px;top:77px;"><path d="M1.5 6C4.5 1.5 11.5 1.5 14.5 6C11.5 10.5 4.5 10.5 1.5 6Z" stroke="#e6e6e6" stroke-width="1.5" fill="none"/><circle cx="8" cy="6" r="2.3" fill="#e6e6e6"/></svg><div class="a" style="left:1636px;top:93px;width:1px;height:390px;background:#7a7a7a;border-radius:0px;"></div><div class="a" style="left:1637px;top:103px;width:11px;height:1px;background:#7a7a7a;border-radius:0px;"></div><svg width="8" height="10" viewBox="0 0 8 10" style="left:1634px;top:99px;"><path d="M1 1L7 5L1 9Z" fill="#6a6a6a"/></svg><svg width="16" height="16" viewBox="0 0 16 16" style="left:1650px;top:95px;"><path d="M2 3H14L8 14Z" stroke="#e6964a" stroke-width="2" fill="none" stroke-linejoin="round" opacity="0.55"/><path d="M5.5 5.5H10.5L8 10Z" fill="#e6964a" opacity="0.55"/></svg><div class="t" style="left:1672px;top:97px;color:#8a8a8a;">background</div><svg width="16" height="16" viewBox="0 0 16 16" style="left:1752px;top:95px;"><g opacity="0.75"><path d="M3 3H13L8 13Z" stroke="#2fb5a0" stroke-width="1.1" fill="none"/><rect x="1" y="1" width="4" height="4" stroke="#2fb5a0" fill="#282828"/><rect x="11" y="1" width="4" height="4" stroke="#2fb5a0" fill="#282828"/><rect x="6" y="11" width="4" height="4" stroke="#2fb5a0" fill="#282828"/></g></svg><svg width="16" height="12" viewBox="0 0 16 12" style="left:1895px;top:98px;"><path d="M1.5 4C4.5 8.5 11.5 8.5 14.5 4" stroke="#9a9a9a" stroke-width="1.3" fill="none"/></svg><div class="a" style="left:1637px;top:123px;width:11px;height:1px;background:#7a7a7a;border-radius:0px;"></div><svg width="8" height="10" viewBox="0 0 8 10" style="left:1634px;top:119px;"><path d="M1 1L7 5L1 9Z" fill="#cfcfcf"/></svg><svg width="16" height="16" viewBox="0 0 16 16" style="left:1650px;top:115px;"><circle cx="4.5" cy="4.5" r="3.2" fill="#e6964a"/><circle cx="10.5" cy="4.5" r="3.2" fill="#e6964a"/><rect x="2" y="8" width="10" height="6" rx="1" fill="#e6964a"/><path d="M12 10L15.5 8V14L12 12Z" fill="#e6964a"/><circle cx="4.5" cy="4.5" r="1.2" fill="#282828"/><circle cx="10.5" cy="4.5" r="1.2" fill="#282828"/><rect x="4" y="10" width="6" height="2" fill="#282828"/></svg><div class="t" style="left:1672px;top:117px;color:#e6e6e6;">Camera000 - sun rotation X0, Y72, Z262</div><svg width="16" height="12" viewBox="0 0 16 12" style="left:1895px;top:117px;"><path d="M1.5 6C4.5 1.5 11.5 1.5 14.5 6C11.5 10.5 4.5 10.5 1.5 6Z" stroke="#e6e6e6" stroke-width="1.5" fill="none"/><circle cx="8" cy="6" r="2.3" fill="#e6e6e6"/></svg><div class="a" style="left:1637px;top:143px;width:11px;height:1px;background:#7a7a7a;border-radius:0px;"></div><svg width="8" height="10" viewBox="0 0 8 10" style="left:1634px;top:139px;"><path d="M1 1L7 5L1 9Z" fill="#cfcfcf"/></svg><svg width="16" height="16" viewBox="0 0 16 16" style="left:1650px;top:135px;"><circle cx="4.5" cy="4.5" r="3.2" fill="#e6964a"/><circle cx="10.5" cy="4.5" r="3.2" fill="#e6964a"/><rect x="2" y="8" width="10" height="6" rx="1" fill="#e6964a"/><path d="M12 10L15.5 8V14L12 12Z" fill="#e6964a"/><circle cx="4.5" cy="4.5" r="1.2" fill="#282828"/><circle cx="10.5" cy="4.5" r="1.2" fill="#282828"/><rect x="4" y="10" width="6" height="2" fill="#282828"/></svg><div class="t" style="left:1672px;top:137px;color:#e6e6e6;">Camera001 - sun rotation X0, Y72, Z240</div><svg width="16" height="12" viewBox="0 0 16 12" style="left:1895px;top:137px;"><path d="M1.5 6C4.5 1.5 11.5 1.5 14.5 6C11.5 10.5 4.5 10.5 1.5 6Z" stroke="#e6e6e6" stroke-width="1.5" fill="none"/><circle cx="8" cy="6" r="2.3" fill="#e6e6e6"/></svg><div class="a" style="left:1637px;top:163px;width:11px;height:1px;background:#7a7a7a;border-radius:0px;"></div><svg width="8" height="10" viewBox="0 0 8 10" style="left:1634px;top:159px;"><path d="M1 1L7 5L1 9Z" fill="#cfcfcf"/></svg><svg width="16" height="16" viewBox="0 0 16 16" style="left:1650px;top:155px;"><circle cx="4.5" cy="4.5" r="3.2" fill="#e6964a"/><circle cx="10.5" cy="4.5" r="3.2" fill="#e6964a"/><rect x="2" y="8" width="10" height="6" rx="1" fill="#e6964a"/><path d="M12 10L15.5 8V14L12 12Z" fill="#e6964a"/><circle cx="4.5" cy="4.5" r="1.2" fill="#282828"/><circle cx="10.5" cy="4.5" r="1.2" fill="#282828"/><rect x="4" y="10" width="6" height="2" fill="#282828"/></svg><div class="t" style="left:1672px;top:157px;color:#e6e6e6;">Camera002 - sun rotation X0, Y72, Z240</div><svg width="16" height="12" viewBox="0 0 16 12" style="left:1895px;top:157px;"><path d="M1.5 6C4.5 1.5 11.5 1.5 14.5 6C11.5 10.5 4.5 10.5 1.5 6Z" stroke="#e6e6e6" stroke-width="1.5" fill="none"/><circle cx="8" cy="6" r="2.3" fill="#e6e6e6"/></svg><div class="a" style="left:1637px;top:183px;width:11px;height:1px;background:#7a7a7a;border-radius:0px;"></div><svg width="8" height="10" viewBox="0 0 8 10" style="left:1634px;top:179px;"><path d="M1 1L7 5L1 9Z" fill="#cfcfcf"/></svg><svg width="16" height="16" viewBox="0 0 16 16" style="left:1650px;top:175px;"><circle cx="4.5" cy="4.5" r="3.2" fill="#e6964a"/><circle cx="10.5" cy="4.5" r="3.2" fill="#e6964a"/><rect x="2" y="8" width="10" height="6" rx="1" fill="#e6964a"/><path d="M12 10L15.5 8V14L12 12Z" fill="#e6964a"/><circle cx="4.5" cy="4.5" r="1.2" fill="#282828"/><circle cx="10.5" cy="4.5" r="1.2" fill="#282828"/><rect x="4" y="10" width="6" height="2" fill="#282828"/></svg><div class="t" style="left:1672px;top:177px;color:#e6e6e6;">Camera003 - sun rotation X0, Y72, Z170</div><svg width="16" height="12" viewBox="0 0 16 12" style="left:1895px;top:177px;"><path d="M1.5 6C4.5 1.5 11.5 1.5 14.5 6C11.5 10.5 4.5 10.5 1.5 6Z" stroke="#e6e6e6" stroke-width="1.5" fill="none"/><circle cx="8" cy="6" r="2.3" fill="#e6e6e6"/></svg><div class="a" style="left:1637px;top:203px;width:11px;height:1px;background:#7a7a7a;border-radius:0px;"></div><svg width="8" height="10" viewBox="0 0 8 10" style="left:1634px;top:199px;"><path d="M1 1L7 5L1 9Z" fill="#cfcfcf"/></svg><svg width="16" height="16" viewBox="0 0 16 16" style="left:1650px;top:195px;"><circle cx="4.5" cy="4.5" r="3.2" fill="#e6964a"/><circle cx="10.5" cy="4.5" r="3.2" fill="#e6964a"/><rect x="2" y="8" width="10" height="6" rx="1" fill="#e6964a"/><path d="M12 10L15.5 8V14L12 12Z" fill="#e6964a"/><circle cx="4.5" cy="4.5" r="1.2" fill="#282828"/><circle cx="10.5" cy="4.5" r="1.2" fill="#282828"/><rect x="4" y="10" width="6" height="2" fill="#282828"/></svg><div class="t" style="left:1672px;top:197px;color:#e6e6e6;">Camera004 - sun rotation X0, Y72, Z240</div><svg width="16" height="12" viewBox="0 0 16 12" style="left:1895px;top:197px;"><path d="M1.5 6C4.5 1.5 11.5 1.5 14.5 6C11.5 10.5 4.5 10.5 1.5 6Z" stroke="#e6e6e6" stroke-width="1.5" fill="none"/><circle cx="8" cy="6" r="2.3" fill="#e6e6e6"/></svg><div class="a" style="left:1637px;top:223px;width:11px;height:1px;background:#7a7a7a;border-radius:0px;"></div><svg width="8" height="10" viewBox="0 0 8 10" style="left:1634px;top:219px;"><path d="M1 1L7 5L1 9Z" fill="#cfcfcf"/></svg><svg width="16" height="16" viewBox="0 0 16 16" style="left:1650px;top:215px;"><circle cx="4.5" cy="4.5" r="3.2" fill="#e6964a"/><circle cx="10.5" cy="4.5" r="3.2" fill="#e6964a"/><rect x="2" y="8" width="10" height="6" rx="1" fill="#e6964a"/><path d="M12 10L15.5 8V14L12 12Z" fill="#e6964a"/><circle cx="4.5" cy="4.5" r="1.2" fill="#282828"/><circle cx="10.5" cy="4.5" r="1.2" fill="#282828"/><rect x="4" y="10" width="6" height="2" fill="#282828"/></svg><div class="t" style="left:1672px;top:217px;color:#e6e6e6;">Camera005 - sun rotation X0, Y72, Z220</div><svg width="16" height="12" viewBox="0 0 16 12" style="left:1895px;top:217px;"><path d="M1.5 6C4.5 1.5 11.5 1.5 14.5 6C11.5 10.5 4.5 10.5 1.5 6Z" stroke="#e6e6e6" stroke-width="1.5" fill="none"/><circle cx="8" cy="6" r="2.3" fill="#e6e6e6"/></svg><div class="a" style="left:1637px;top:243px;width:11px;height:1px;background:#7a7a7a;border-radius:0px;"></div><svg width="8" height="10" viewBox="0 0 8 10" style="left:1634px;top:239px;"><path d="M1 1L7 5L1 9Z" fill="#cfcfcf"/></svg><svg width="16" height="16" viewBox="0 0 16 16" style="left:1650px;top:235px;"><circle cx="4.5" cy="4.5" r="3.2" fill="#e6964a"/><circle cx="10.5" cy="4.5" r="3.2" fill="#e6964a"/><rect x="2" y="8" width="10" height="6" rx="1" fill="#e6964a"/><path d="M12 10L15.5 8V14L12 12Z" fill="#e6964a"/><circle cx="4.5" cy="4.5" r="1.2" fill="#282828"/><circle cx="10.5" cy="4.5" r="1.2" fill="#282828"/><rect x="4" y="10" width="6" height="2" fill="#282828"/></svg><div class="t" style="left:1672px;top:237px;color:#e6e6e6;">Camera006 - sun rotation X0, Y72, Z290</div><svg width="16" height="12" viewBox="0 0 16 12" style="left:1895px;top:237px;"><path d="M1.5 6C4.5 1.5 11.5 1.5 14.5 6C11.5 10.5 4.5 10.5 1.5 6Z" stroke="#e6e6e6" stroke-width="1.5" fill="none"/><circle cx="8" cy="6" r="2.3" fill="#e6e6e6"/></svg><div class="a" style="left:1637px;top:263px;width:11px;height:1px;background:#7a7a7a;border-radius:0px;"></div><svg width="8" height="10" viewBox="0 0 8 10" style="left:1634px;top:259px;"><path d="M1 1L7 5L1 9Z" fill="#cfcfcf"/></svg><svg width="16" height="16" viewBox="0 0 16 16" style="left:1650px;top:255px;"><circle cx="4.5" cy="4.5" r="3.2" fill="#e6964a"/><circle cx="10.5" cy="4.5" r="3.2" fill="#e6964a"/><rect x="2" y="8" width="10" height="6" rx="1" fill="#e6964a"/><path d="M12 10L15.5 8V14L12 12Z" fill="#e6964a"/><circle cx="4.5" cy="4.5" r="1.2" fill="#282828"/><circle cx="10.5" cy="4.5" r="1.2" fill="#282828"/><rect x="4" y="10" width="6" height="2" fill="#282828"/></svg><div class="t" style="left:1672px;top:257px;color:#e6e6e6;">Camera007 - sun rotation X0, Y72, Z240</div><svg width="16" height="12" viewBox="0 0 16 12" style="left:1895px;top:257px;"><path d="M1.5 6C4.5 1.5 11.5 1.5 14.5 6C11.5 10.5 4.5 10.5 1.5 6Z" stroke="#e6e6e6" stroke-width="1.5" fill="none"/><circle cx="8" cy="6" r="2.3" fill="#e6e6e6"/></svg><div class="a" style="left:1637px;top:283px;width:11px;height:1px;background:#7a7a7a;border-radius:0px;"></div><svg width="8" height="10" viewBox="0 0 8 10" style="left:1634px;top:279px;"><path d="M1 1L7 5L1 9Z" fill="#cfcfcf"/></svg><svg width="16" height="16" viewBox="0 0 16 16" style="left:1650px;top:275px;"><circle cx="4.5" cy="4.5" r="3.2" fill="#e6964a"/><circle cx="10.5" cy="4.5" r="3.2" fill="#e6964a"/><rect x="2" y="8" width="10" height="6" rx="1" fill="#e6964a"/><path d="M12 10L15.5 8V14L12 12Z" fill="#e6964a"/><circle cx="4.5" cy="4.5" r="1.2" fill="#282828"/><circle cx="10.5" cy="4.5" r="1.2" fill="#282828"/><rect x="4" y="10" width="6" height="2" fill="#282828"/></svg><div class="t" style="left:1672px;top:277px;color:#e6e6e6;">Camera008 - sun rotation X0, Y72, Z125</div><svg width="16" height="12" viewBox="0 0 16 12" style="left:1895px;top:277px;"><path d="M1.5 6C4.5 1.5 11.5 1.5 14.5 6C11.5 10.5 4.5 10.5 1.5 6Z" stroke="#e6e6e6" stroke-width="1.5" fill="none"/><circle cx="8" cy="6" r="2.3" fill="#e6e6e6"/></svg><div class="a" style="left:1637px;top:303px;width:11px;height:1px;background:#7a7a7a;border-radius:0px;"></div><svg width="8" height="10" viewBox="0 0 8 10" style="left:1634px;top:299px;"><path d="M1 1L7 5L1 9Z" fill="#cfcfcf"/></svg><svg width="16" height="16" viewBox="0 0 16 16" style="left:1650px;top:295px;"><circle cx="4.5" cy="4.5" r="3.2" fill="#e6964a"/><circle cx="10.5" cy="4.5" r="3.2" fill="#e6964a"/><rect x="2" y="8" width="10" height="6" rx="1" fill="#e6964a"/><path d="M12 10L15.5 8V14L12 12Z" fill="#e6964a"/><circle cx="4.5" cy="4.5" r="1.2" fill="#282828"/><circle cx="10.5" cy="4.5" r="1.2" fill="#282828"/><rect x="4" y="10" width="6" height="2" fill="#282828"/></svg><div class="t" style="left:1672px;top:297px;color:#e6e6e6;">Camera009 - sun rotation X0, Y72, Z170</div><svg width="16" height="12" viewBox="0 0 16 12" style="left:1895px;top:297px;"><path d="M1.5 6C4.5 1.5 11.5 1.5 14.5 6C11.5 10.5 4.5 10.5 1.5 6Z" stroke="#e6e6e6" stroke-width="1.5" fill="none"/><circle cx="8" cy="6" r="2.3" fill="#e6e6e6"/></svg><div class="a" style="left:1637px;top:323px;width:11px;height:1px;background:#7a7a7a;border-radius:0px;"></div><svg width="8" height="10" viewBox="0 0 8 10" style="left:1634px;top:319px;"><path d="M1 1L7 5L1 9Z" fill="#cfcfcf"/></svg><svg width="16" height="16" viewBox="0 0 16 16" style="left:1650px;top:315px;"><circle cx="4.5" cy="4.5" r="3.2" fill="#e6964a"/><circle cx="10.5" cy="4.5" r="3.2" fill="#e6964a"/><rect x="2" y="8" width="10" height="6" rx="1" fill="#e6964a"/><path d="M12 10L15.5 8V14L12 12Z" fill="#e6964a"/><circle cx="4.5" cy="4.5" r="1.2" fill="#282828"/><circle cx="10.5" cy="4.5" r="1.2" fill="#282828"/><rect x="4" y="10" width="6" height="2" fill="#282828"/></svg><div class="t" style="left:1672px;top:317px;color:#e6e6e6;">Camera010 - sun rotation X0, Y72, Z210</div><svg width="16" height="12" viewBox="0 0 16 12" style="left:1895px;top:317px;"><path d="M1.5 6C4.5 1.5 11.5 1.5 14.5 6C11.5 10.5 4.5 10.5 1.5 6Z" stroke="#e6e6e6" stroke-width="1.5" fill="none"/><circle cx="8" cy="6" r="2.3" fill="#e6e6e6"/></svg><div class="a" style="left:1637px;top:343px;width:11px;height:1px;background:#7a7a7a;border-radius:0px;"></div><svg width="8" height="10" viewBox="0 0 8 10" style="left:1634px;top:339px;"><path d="M1 1L7 5L1 9Z" fill="#cfcfcf"/></svg><svg width="16" height="16" viewBox="0 0 16 16" style="left:1650px;top:335px;"><circle cx="4.5" cy="4.5" r="3.2" fill="#e6964a"/><circle cx="10.5" cy="4.5" r="3.2" fill="#e6964a"/><rect x="2" y="8" width="10" height="6" rx="1" fill="#e6964a"/><path d="M12 10L15.5 8V14L12 12Z" fill="#e6964a"/><circle cx="4.5" cy="4.5" r="1.2" fill="#282828"/><circle cx="10.5" cy="4.5" r="1.2" fill="#282828"/><rect x="4" y="10" width="6" height="2" fill="#282828"/></svg><div class="t" style="left:1672px;top:337px;color:#e6e6e6;">Camera011 - sun rotation X0, Y72, Z240</div><svg width="16" height="12" viewBox="0 0 16 12" style="left:1895px;top:337px;"><path d="M1.5 6C4.5 1.5 11.5 1.5 14.5 6C11.5 10.5 4.5 10.5 1.5 6Z" stroke="#e6e6e6" stroke-width="1.5" fill="none"/><circle cx="8" cy="6" r="2.3" fill="#e6e6e6"/></svg><div class="a" style="left:1637px;top:363px;width:11px;height:1px;background:#7a7a7a;border-radius:0px;"></div><svg width="8" height="10" viewBox="0 0 8 10" style="left:1634px;top:359px;"><path d="M1 1L7 5L1 9Z" fill="#cfcfcf"/></svg><svg width="16" height="16" viewBox="0 0 16 16" style="left:1650px;top:355px;"><circle cx="4.5" cy="4.5" r="3.2" fill="#e6964a"/><circle cx="10.5" cy="4.5" r="3.2" fill="#e6964a"/><rect x="2" y="8" width="10" height="6" rx="1" fill="#e6964a"/><path d="M12 10L15.5 8V14L12 12Z" fill="#e6964a"/><circle cx="4.5" cy="4.5" r="1.2" fill="#282828"/><circle cx="10.5" cy="4.5" r="1.2" fill="#282828"/><rect x="4" y="10" width="6" height="2" fill="#282828"/></svg><div class="t" style="left:1672px;top:357px;color:#e6e6e6;">Camera012 - sun rotation X0, Y72, Z155</div><svg width="16" height="12" viewBox="0 0 16 12" style="left:1895px;top:357px;"><path d="M1.5 6C4.5 1.5 11.5 1.5 14.5 6C11.5 10.5 4.5 10.5 1.5 6Z" stroke="#e6e6e6" stroke-width="1.5" fill="none"/><circle cx="8" cy="6" r="2.3" fill="#e6e6e6"/></svg><div class="a" style="left:1637px;top:383px;width:11px;height:1px;background:#7a7a7a;border-radius:0px;"></div><svg width="8" height="10" viewBox="0 0 8 10" style="left:1634px;top:379px;"><path d="M1 1L7 5L1 9Z" fill="#6a6a6a"/></svg><svg width="16" height="16" viewBox="0 0 16 16" style="left:1650px;top:375px;"><path d="M2 3H14L8 14Z" stroke="#e6964a" stroke-width="2" fill="none" stroke-linejoin="round" opacity="0.55"/><path d="M5.5 5.5H10.5L8 10Z" fill="#e6964a" opacity="0.55"/></svg><div class="t" style="left:1672px;top:377px;color:#8a8a8a;">garden</div><svg width="16" height="16" viewBox="0 0 16 16" style="left:1727px;top:375px;"><g opacity="1"><path d="M2.5 13.5L8.5 7.5" stroke="#4f6f9f" stroke-width="2.6" stroke-linecap="round"/><path d="M8 8.5A4.2 4.2 0 0 1 9.5 2.2L9 5L11 7L13.8 6.5A4.2 4.2 0 0 1 7.5 8Z" stroke="#4f6f9f" stroke-width="1.4" fill="none" stroke-linejoin="round"/></g></svg><svg width="16" height="16" viewBox="0 0 16 16" style="left:1747px;top:375px;"><g opacity="0.75"><path d="M3 3H13L8 13Z" stroke="#2fb5a0" stroke-width="1.1" fill="none"/><rect x="1" y="1" width="4" height="4" stroke="#2fb5a0" fill="#282828"/><rect x="11" y="1" width="4" height="4" stroke="#2fb5a0" fill="#282828"/><rect x="6" y="11" width="4" height="4" stroke="#2fb5a0" fill="#282828"/></g></svg><svg width="16" height="12" viewBox="0 0 16 12" style="left:1895px;top:378px;"><path d="M1.5 4C4.5 8.5 11.5 8.5 14.5 4" stroke="#9a9a9a" stroke-width="1.3" fill="none"/></svg><div class="a" style="left:1637px;top:403px;width:11px;height:1px;background:#7a7a7a;border-radius:0px;"></div><svg width="8" height="10" viewBox="0 0 8 10" style="left:1634px;top:399px;"><path d="M1 1L7 5L1 9Z" fill="#6a6a6a"/></svg><svg width="16" height="16" viewBox="0 0 16 16" style="left:1650px;top:395px;"><path d="M2 3H14L8 14Z" stroke="#e6964a" stroke-width="2" fill="none" stroke-linejoin="round" opacity="0.55"/><path d="M5.5 5.5H10.5L8 10Z" fill="#e6964a" opacity="0.55"/></svg><div class="t" style="left:1672px;top:397px;color:#8a8a8a;">lake</div><svg width="16" height="16" viewBox="0 0 16 16" style="left:1715px;top:395px;"><g opacity="0.75"><path d="M3 3H13L8 13Z" stroke="#2fb5a0" stroke-width="1.1" fill="none"/><rect x="1" y="1" width="4" height="4" stroke="#2fb5a0" fill="#282828"/><rect x="11" y="1" width="4" height="4" stroke="#2fb5a0" fill="#282828"/><rect x="6" y="11" width="4" height="4" stroke="#2fb5a0" fill="#282828"/></g></svg><svg width="16" height="12" viewBox="0 0 16 12" style="left:1895px;top:398px;"><path d="M1.5 4C4.5 8.5 11.5 8.5 14.5 4" stroke="#9a9a9a" stroke-width="1.3" fill="none"/></svg><div class="a" style="left:1637px;top:423px;width:11px;height:1px;background:#7a7a7a;border-radius:0px;"></div><svg width="8" height="10" viewBox="0 0 8 10" style="left:1634px;top:419px;"><path d="M1 1L7 5L1 9Z" fill="#6a6a6a"/></svg><svg width="16" height="16" viewBox="0 0 16 16" style="left:1650px;top:415px;"><path d="M2 3H14L8 14Z" stroke="#e6964a" stroke-width="2" fill="none" stroke-linejoin="round" opacity="0.55"/><path d="M5.5 5.5H10.5L8 10Z" fill="#e6964a" opacity="0.55"/></svg><div class="t" style="left:1672px;top:417px;color:#8a8a8a;">river</div><svg width="16" height="16" viewBox="0 0 16 16" style="left:1717px;top:415px;"><g opacity="0.75"><path d="M3 3H13L8 13Z" stroke="#2fb5a0" stroke-width="1.1" fill="none"/><rect x="1" y="1" width="4" height="4" stroke="#2fb5a0" fill="#282828"/><rect x="11" y="1" width="4" height="4" stroke="#2fb5a0" fill="#282828"/><rect x="6" y="11" width="4" height="4" stroke="#2fb5a0" fill="#282828"/></g></svg><svg width="16" height="12" viewBox="0 0 16 12" style="left:1895px;top:418px;"><path d="M1.5 4C4.5 8.5 11.5 8.5 14.5 4" stroke="#9a9a9a" stroke-width="1.3" fill="none"/></svg><div class="a" style="left:1637px;top:443px;width:11px;height:1px;background:#7a7a7a;border-radius:0px;"></div><svg width="8" height="10" viewBox="0 0 8 10" style="left:1634px;top:439px;"><path d="M1 1L7 5L1 9Z" fill="#6a6a6a"/></svg><svg width="16" height="16" viewBox="0 0 16 16" style="left:1650px;top:435px;"><path d="M2 3H14L8 14Z" stroke="#e6964a" stroke-width="2" fill="none" stroke-linejoin="round" opacity="0.55"/><path d="M5.5 5.5H10.5L8 10Z" fill="#e6964a" opacity="0.55"/></svg><div class="t" style="left:1672px;top:437px;color:#8a8a8a;">rivers</div><svg width="16" height="16" viewBox="0 0 16 16" style="left:1722px;top:435px;"><g opacity="0.75"><path d="M3 3H13L8 13Z" stroke="#2fb5a0" stroke-width="1.1" fill="none"/><rect x="1" y="1" width="4" height="4" stroke="#2fb5a0" fill="#282828"/><rect x="11" y="1" width="4" height="4" stroke="#2fb5a0" fill="#282828"/><rect x="6" y="11" width="4" height="4" stroke="#2fb5a0" fill="#282828"/></g></svg><svg width="16" height="12" viewBox="0 0 16 12" style="left:1895px;top:438px;"><path d="M1.5 4C4.5 8.5 11.5 8.5 14.5 4" stroke="#9a9a9a" stroke-width="1.3" fill="none"/></svg><div class="a" style="left:1637px;top:463px;width:11px;height:1px;background:#7a7a7a;border-radius:0px;"></div><svg width="8" height="10" viewBox="0 0 8 10" style="left:1634px;top:459px;"><path d="M1 1L7 5L1 9Z" fill="#cfcfcf"/></svg><svg width="16" height="16" viewBox="0 0 16 16" style="left:1650px;top:455px;"><circle cx="8" cy="6.5" r="5" fill="#e6964a"/><rect x="5.5" y="10" width="5" height="2" fill="#e6964a"/><rect x="6" y="13" width="4" height="1.5" fill="#e6964a"/><path d="M6.5 5V8M9.5 5V8M6.5 8H9.5" stroke="#282828" stroke-width="0.9"/></svg><div class="t" style="left:1672px;top:457px;color:#e6e6e6;">sun</div><svg width="16" height="16" viewBox="0 0 16 16" style="left:1711px;top:455px;"><circle cx="8" cy="8" r="3.5" stroke="#2fc08a" stroke-width="1.4" fill="none"/><path d="M8 1V3.5M8 12.5V15M1 8H3.5M12.5 8H15M3 3L4.8 4.8M11.2 11.2L13 13M13 3L11.2 4.8M4.8 11.2L3 13" stroke="#2fc08a" stroke-width="1.3"/></svg><svg width="16" height="12" viewBox="0 0 16 12" style="left:1895px;top:457px;"><path d="M1.5 6C4.5 1.5 11.5 1.5 14.5 6C11.5 10.5 4.5 10.5 1.5 6Z" stroke="#e6e6e6" stroke-width="1.5" fill="none"/><circle cx="8" cy="6" r="2.3" fill="#e6e6e6"/></svg><div class="a" style="left:1588px;top:473px;width:332px;height:20px;background:#334d80;border-radius:0px;"></div><div class="a" style="left:1637px;top:483px;width:11px;height:1px;background:#7a7a7a;border-radius:0px;"></div><svg width="8" height="10" viewBox="0 0 8 10" style="left:1634px;top:479px;"><path d="M1 1L7 5L1 9Z" fill="#dfe6f0"/></svg><div class="a" style="left:1648px;top:474px;width:20px;height:18px;background:rgba(255,255,255,0.25);border-radius:4px;"></div><svg width="16" height="16" viewBox="0 0 16 16" style="left:1650px;top:475px;"><path d="M2 3H14L8 14Z" stroke="#e6964a" stroke-width="2" fill="none" stroke-linejoin="round" opacity="1"/><path d="M5.5 5.5H10.5L8 10Z" fill="#e6964a" opacity="1"/></svg><div class="t" style="left:1672px;top:477px;color:#f5b461;">terrain</div><svg width="16" height="16" viewBox="0 0 16 16" style="left:1727px;top:475px;"><g opacity="1"><path d="M2.5 13.5L8.5 7.5" stroke="#6aa0f0" stroke-width="2.6" stroke-linecap="round"/><path d="M8 8.5A4.2 4.2 0 0 1 9.5 2.2L9 5L11 7L13.8 6.5A4.2 4.2 0 0 1 7.5 8Z" stroke="#6aa0f0" stroke-width="1.4" fill="none" stroke-linejoin="round"/></g></svg><svg width="16" height="16" viewBox="0 0 16 16" style="left:1747px;top:475px;"><g opacity="1"><path d="M3 3H13L8 13Z" stroke="#33c8d8" stroke-width="1.1" fill="none"/><rect x="1" y="1" width="4" height="4" stroke="#33c8d8" fill="#282828"/><rect x="11" y="1" width="4" height="4" stroke="#33c8d8" fill="#282828"/><rect x="6" y="11" width="4" height="4" stroke="#33c8d8" fill="#282828"/></g></svg><svg width="16" height="12" viewBox="0 0 16 12" style="left:1895px;top:477px;"><path d="M1.5 6C4.5 1.5 11.5 1.5 14.5 6C11.5 10.5 4.5 10.5 1.5 6Z" stroke="#e6e6e6" stroke-width="1.5" fill="none"/><circle cx="8" cy="6" r="2.3" fill="#e6e6e6"/></svg><svg width="8" height="10" viewBox="0 0 8 10" style="left:1615px;top:499px;"><path d="M1 1L7 5L1 9Z" fill="#8a8a8a"/></svg><div class="a" style="left:1633px;top:498px;width:11px;height:11px;background:transparent;border-radius:1px;border:1px solid #9a9a9a"></div><svg width="16" height="16" viewBox="0 0 16 16" style="left:1650px;top:495px;"><g opacity="1"><rect x="1.5" y="2.5" width="13" height="3" stroke="#a0a0a0" fill="none"/><path d="M2.5 5.5V14.5H13.5V5.5" stroke="#a0a0a0" fill="none"/><rect x="6" y="8" width="4" height="1.5" fill="#a0a0a0"/></g></svg><div class="t" style="left:1672px;top:497px;color:#8a8a8a;">assets</div><svg width="16" height="16" viewBox="0 0 16 16" style="left:1726px;top:495px;"><g opacity="1"><rect x="1.5" y="2.5" width="13" height="3" stroke="#a0a0a0" fill="none"/><path d="M2.5 5.5V14.5H13.5V5.5" stroke="#a0a0a0" fill="none"/><rect x="6" y="8" width="4" height="1.5" fill="#a0a0a0"/></g></svg><svg width="11" height="11" viewBox="0 0 11 11" style="left:1735px;top:501px;"><circle cx="5.5" cy="5.5" r="5" fill="#111"/><text x="5.5" y="9" font-family="Liberation Sans" font-size="9" fill="#ddd" text-anchor="middle">8</text></svg>
<div class="a" style="left:1588px;top:598px;width:332px;height:396px;background:#3d3d3d;border-radius:6px;border-top-right-radius:0;border-bottom-right-radius:0"></div><div class="a" style="left:1588px;top:598px;width:332px;height:23px;background:#3d3d3d;border-radius:6px;border-top-right-radius:0;border-bottom-left-radius:0;border-bottom-right-radius:0"></div><div class="a" style="left:1599px;top:600px;width:28px;height:17px;background:#2c2c2c;border-radius:4px;"></div><svg width="26" height="16" viewBox="0 0 26 16" style="left:1600px;top:601px;"><rect x="1.5" y="1.5" width="13" height="5" rx="2.5" fill="#e6e6e6"/><rect x="1.5" y="9" width="13" height="5" rx="2.5" fill="#e6e6e6"/><rect x="8" y="2.5" width="5" height="3" rx="1.5" fill="#2c2c2c"/><rect x="8" y="10" width="5" height="3" rx="1.5" fill="#2c2c2c"/><path d="M17.5 6.5L20 9L22.5 6.5" stroke="#bbb" stroke-width="1.2" fill="none"/></svg><svg width="18" height="16" viewBox="0 0 18 16" style="left:1640px;top:601px;"><path d="M5 1.5C3 5 2 7 2 8.5a3 3 0 0 0 6 0C8 7 7 5 5 1.5Z" fill="#dcdcdc"/><circle cx="10.5" cy="10.5" r="3.2" stroke="#dcdcdc" stroke-width="1.2" fill="#3d3d3d"/><rect x="10" y="1.5" width="3" height="3" fill="#dcdcdc"/></svg><div class="t" style="left:1665px;top:603px;color:#e6e6e6;">Scene</div><svg width="18" height="16" viewBox="0 0 18 16" style="left:1893px;top:601px;"><path d="M11 1.5L16 6.5M12.5 3L8 6L5 6L11.5 12.5L11.5 9.5L14.5 5M8 10L2 16" stroke="#9a9a9a" stroke-width="1.2" fill="none"/></svg><div class="a" style="left:1590px;top:621px;width:26px;height:373px;background:#232323;border-radius:0px;"></div><div class="a" style="left:1591px;top:630px;width:25px;height:26px;background:#2a2a2a;border-radius:4px;border-top-right-radius:0;border-bottom-right-radius:0"></div><div class="a" style="left:1591px;top:666px;width:25px;height:26px;background:#2a2a2a;border-radius:4px;border-top-right-radius:0;border-bottom-right-radius:0"></div><div class="a" style="left:1591px;top:694px;width:25px;height:26px;background:#3d3d3d;border-radius:4px;border-top-right-radius:0;border-bottom-right-radius:0"></div><div class="a" style="left:1591px;top:722px;width:25px;height:26px;background:#2a2a2a;border-radius:4px;border-top-right-radius:0;border-bottom-right-radius:0"></div><div class="a" style="left:1591px;top:750px;width:25px;height:26px;background:#2a2a2a;border-radius:4px;border-top-right-radius:0;border-bottom-right-radius:0"></div><div class="a" style="left:1591px;top:779px;width:25px;height:26px;background:#2a2a2a;border-radius:4px;border-top-right-radius:0;border-bottom-right-radius:0"></div><div class="a" style="left:1591px;top:815px;width:25px;height:26px;background:#2a2a2a;border-radius:4px;border-top-right-radius:0;border-bottom-right-radius:0"></div><div class="a" style="left:1591px;top:843px;width:25px;height:26px;background:#2a2a2a;border-radius:4px;border-top-right-radius:0;border-bottom-right-radius:0"></div><div class="a" style="left:1591px;top:871px;width:25px;height:26px;background:#2a2a2a;border-radius:4px;border-top-right-radius:0;border-bottom-right-radius:0"></div><div class="a" style="left:1591px;top:899px;width:25px;height:26px;background:#2a2a2a;border-radius:4px;border-top-right-radius:0;border-bottom-right-radius:0"></div><div class="a" style="left:1591px;top:927px;width:25px;height:26px;background:#2a2a2a;border-radius:4px;border-top-right-radius:0;border-bottom-right-radius:0"></div><div class="a" style="left:1591px;top:954px;width:25px;height:26px;background:#2a2a2a;border-radius:4px;border-top-right-radius:0;border-bottom-right-radius:0"></div><div class="a" style="left:1591px;top:980px;width:25px;height:26px;background:#2a2a2a;border-radius:4px;border-top-right-radius:0;border-bottom-right-radius:0"></div><svg width="16" height="16" viewBox="0 0 16 16" style="left:1595px;top:635px;"><path d="M4 2V8M10 3V14M7 3C7 5 8.5 6 10 6S13 5 13 3" stroke="#e6e6e6" stroke-width="1.6" fill="none"/><circle cx="4" cy="11" r="2.2" fill="#e6e6e6"/></svg><svg width="16" height="16" viewBox="0 0 16 16" style="left:1595px;top:671px;"><rect x="2" y="5" width="12" height="9" rx="1" stroke="#e6e6e6" stroke-width="1.3" fill="none"/><path d="M5 5V3H8V5M9 5V2.5H12V5M2 9H14" stroke="#e6e6e6" stroke-width="1.2" fill="none"/></svg><svg width="16" height="16" viewBox="0 0 16 16" style="left:1595px;top:699px;"><path d="M2 3H14V8H2Z" fill="#e6e6e6"/><rect x="4" y="8" width="8" height="6" stroke="#e6e6e6" stroke-width="1.2" fill="none"/><path d="M5.5 13L8 10L10.5 13Z" fill="#e6e6e6"/></svg><svg width="16" height="16" viewBox="0 0 16 16" style="left:1595px;top:727px;"><rect x="5.5" y="1.5" width="9" height="9" stroke="#ddd" fill="none"/><path d="M3.5 3.5V12.5H12.5M1.5 5.5V14.5H10.5" stroke="#ddd" fill="none"/><path d="M7 9L10 5L13 9Z" fill="#ddd"/></svg><svg width="16" height="16" viewBox="0 0 16 16" style="left:1595px;top:755px;"><path d="M5 2.5C3 6 2 8 2 9.5a3 3 0 0 0 6 0C8 8 7 6 5 2.5Z" fill="#dcdcdc"/><circle cx="10.5" cy="11" r="3.2" stroke="#dcdcdc" stroke-width="1.2" fill="#2b2b2b"/><circle cx="12.5" cy="3" r="1.8" fill="#dcdcdc"/></svg><svg width="16" height="16" viewBox="0 0 16 16" style="left:1595px;top:784px;"><circle cx="8" cy="8" r="6.5" fill="#c8424a"/><path d="M3 6C6 5 7 8 5 10M9 2C10 5 13 5 14 7M8 14C9 11 12 11 12.5 12" stroke="#2b2b2b" stroke-width="1.2" fill="none"/></svg><svg width="16" height="16" viewBox="0 0 16 16" style="left:1595px;top:820px;"><rect x="2" y="2" width="12" height="12" stroke="#d08a4a" stroke-width="1" stroke-dasharray="3 6" fill="none"/><rect x="4" y="4" width="8" height="8" fill="#e8964a"/></svg><svg width="16" height="16" viewBox="0 0 16 16" style="left:1595px;top:848px;"><path d="M3 13L9 7" stroke="#6f9fe6" stroke-width="2.6" stroke-linecap="round"/><circle cx="10.5" cy="5.5" r="3.6" fill="#6f9fe6"/><path d="M11 2L14 5" stroke="#2b2b2b" stroke-width="2"/></svg><svg width="16" height="16" viewBox="0 0 16 16" style="left:1595px;top:876px;"><circle cx="3.5" cy="3.5" r="2" fill="#6f9fe6"/><circle cx="13" cy="4" r="1.5" fill="#6f9fe6"/><circle cx="12" cy="13" r="1.5" fill="#6f9fe6"/><circle cx="4" cy="13" r="1.5" fill="#6f9fe6"/><path d="M3.5 3.5L12 13M3.5 3.5V13M3.5 3.5L13 4" stroke="#ddd" stroke-width="1"/></svg><svg width="16" height="16" viewBox="0 0 16 16" style="left:1595px;top:904px;"><circle cx="8" cy="8" r="5.5" stroke="#6f9fe6" stroke-width="1.8" fill="none"/><circle cx="8" cy="8" r="2" fill="#ddd"/><circle cx="12.5" cy="3.5" r="1.6" fill="#ddd"/></svg><svg width="16" height="16" viewBox="0 0 16 16" style="left:1595px;top:932px;"><ellipse cx="8" cy="9" rx="6" ry="5" transform="rotate(-35 8 9)" stroke="#6f9fe6" stroke-width="1.8" fill="none"/><circle cx="7" cy="10" r="2.2" fill="#6f9fe6"/></svg><svg width="16" height="16" viewBox="0 0 16 16" style="left:1595px;top:959px;"><path d="M3 3H13L8 13Z" stroke="#33d0a0" stroke-width="1.3" fill="none"/><rect x="1" y="1" width="4" height="4" stroke="#33d0a0" fill="#2b2b2b"/><rect x="11" y="1" width="4" height="4" stroke="#33d0a0" fill="#2b2b2b"/><rect x="6" y="11" width="4" height="4" stroke="#33d0a0" fill="#2b2b2b"/></svg><svg width="16" height="16" viewBox="0 0 16 16" style="left:1595px;top:985px;"><circle cx="8" cy="8" r="6.5" fill="#d05060"/><path d="M2 8A6 6 0 0 1 14 8" fill="#e8a0a8"/></svg><div class="a" style="left:1617px;top:622px;width:295px;height:24px;background:#424242;border-radius:4px;border-bottom-left-radius:0;border-bottom-right-radius:0"></div><div class="a" style="left:1617px;top:646px;width:295px;height:272px;background:#3a3a3a;border-radius:0px;"></div><svg width="10" height="8" viewBox="0 0 10 8" style="left:1625px;top:630px;"><path d="M1 1H9L5 7Z" fill="#bdbdbd"/></svg><div class="t" style="left:1638px;top:627px;color:#e6e6e6;font-size:12px;">Dimensions</div><svg width="18" height="14" viewBox="0 0 18 14" style="left:1869px;top:627px;"><circle cx="3" cy="2.5" r="1.6" fill="#ddd"/><circle cx="3" cy="7" r="1.6" fill="#ddd"/><circle cx="3" cy="11.5" r="1.6" fill="#ddd"/><path d="M7 2.5H16M7 7H16M7 11.5H16" stroke="#ddd" stroke-width="1.2"/></svg><svg width="14" height="8" viewBox="0 0 14 8" style="left:1899px;top:630px;"><rect x="1" y="1" width="1.3" height="1.3" fill="#8a8a8a"/><rect x="1" y="4" width="1.3" height="1.3" fill="#8a8a8a"/><rect x="4" y="1" width="1.3" height="1.3" fill="#8a8a8a"/><rect x="4" y="4" width="1.3" height="1.3" fill="#8a8a8a"/><rect x="7" y="1" width="1.3" height="1.3" fill="#8a8a8a"/><rect x="7" y="4" width="1.3" height="1.3" fill="#8a8a8a"/><rect x="10" y="1" width="1.3" height="1.3" fill="#8a8a8a"/><rect x="10" y="4" width="1.3" height="1.3" fill="#8a8a8a"/></svg><div class="t" style="right:161px;top:657px;color:#e6e6e6;">Resolution X</div><div class="t" style="right:161px;top:676px;color:#e6e6e6;">Y</div><div class="t" style="right:161px;top:696px;color:#e6e6e6;">%</div><div class="a" style="left:1769px;top:655px;width:142px;height:19px;background:#545454;border-radius:4px 4px 0 0"></div><div class="a" style="left:1769px;top:675px;width:142px;height:18px;background:#545454;border-radius:0 0 0 0"></div><div class="a" style="left:1769px;top:694px;width:142px;height:19px;background:#545454;border-radius:0 0 4px 4px"></div><div class="a" style="left:1769px;top:694px;width:98px;height:19px;background:#4772b3;border-radius:4px;border-top-left-radius:0;border-top-right-radius:0;border-bottom-right-radius:0"></div><div class="t" style="left:1769px;width:142px;top:657px;text-align:center;color:#e6e6e6;">1920 px</div><div class="t" style="left:1769px;width:142px;top:676px;text-align:center;color:#e6e6e6;">1080 px</div><div class="t" style="left:1769px;width:142px;top:696px;text-align:center;color:#e6e6e6;">70%</div><div class="t" style="right:161px;top:722px;color:#e6e6e6;">Aspect X</div><div class="t" style="right:161px;top:741px;color:#e6e6e6;">Y</div><div class="a" style="left:1769px;top:720px;width:142px;height:18px;background:#545454;border-radius:4px 4px 0 0"></div><div class="a" style="left:1769px;top:739px;width:142px;height:19px;background:#545454;border-radius:0 0 4px 4px"></div><div class="t" style="left:1769px;width:142px;top:722px;text-align:center;color:#e6e6e6;">1.000</div><div class="t" style="left:1769px;width:142px;top:741px;text-align:center;color:#e6e6e6;">1.000</div><div class="t" style="right:34px;top:767px;color:#e6e6e6;">Render Region</div><div class="a" style="left:1896px;top:768px;width:13px;height:13px;background:#4772b3;border-radius:3px;"></div><svg width="13" height="13" viewBox="0 0 13 13" style="left:1896px;top:768px;"><path d="M3 6.5L5.5 9L10 3.5" stroke="#fff" stroke-width="1.6" fill="none"/></svg><div class="t" style="right:34px;top:787px;color:#e6e6e6;">Crop to Render Region</div><div class="a" style="left:1896px;top:788px;width:13px;height:13px;background:#545454;border-radius:3px;"></div><div class="t" style="right:161px;top:812px;color:#e6e6e6;">Frame Start</div><div class="t" style="right:161px;top:831px;color:#e6e6e6;">End</div><div class="t" style="right:161px;top:851px;color:#e6e6e6;">Step</div><div class="a" style="left:1769px;top:810px;width:142px;height:19px;background:#545454;border-radius:4px 4px 0 0"></div><div class="a" style="left:1769px;top:830px;width:142px;height:18px;background:#545454;border-radius:0 0 0 0"></div><div class="a" style="left:1769px;top:849px;width:142px;height:19px;background:#545454;border-radius:0 0 4px 4px"></div><div class="t" style="left:1769px;width:142px;top:812px;text-align:center;color:#e6e6e6;">1</div><div class="t" style="left:1769px;width:142px;top:831px;text-align:center;color:#e6e6e6;">250</div><div class="t" style="left:1769px;width:142px;top:851px;text-align:center;color:#e6e6e6;">1</div><div class="t" style="right:165px;top:877px;color:#e6e6e6;">Frame Rate</div><div class="a" style="left:1775px;top:875px;width:136px;height:18px;background:#2c2c2c;border-radius:4px;"></div><div class="t" style="left:1780px;top:877px;color:#e6e6e6;">24 fps</div><svg width="9" height="6" viewBox="0 0 9 6" style="left:1898px;top:881px;"><path d="M1 1L4.5 4.5L8 1" stroke="#bdbdbd" stroke-width="1.4" fill="none"/></svg><svg width="8" height="10" viewBox="0 0 8 10" style="left:1638px;top:909px;"><path d="M1 1L7 5L1 9Z" fill="#bdbdbd"/></svg><div class="t" style="left:1652px;top:908px;color:#e6e6e6;">Time Remapping</div><div class="a" style="left:1617px;top:926px;width:295px;height:24px;background:#424242;border-radius:4px;"></div><svg width="8" height="10" viewBox="0 0 8 10" style="left:1624px;top:933px;"><path d="M1 1L7 5L1 9Z" fill="#bdbdbd"/></svg><div class="a" style="left:1640px;top:932px;width:13px;height:13px;background:#545454;border-radius:3px;"></div><div class="t" style="left:1658px;top:931px;color:#e6e6e6;font-size:12px;">Stereoscopy</div><svg width="14" height="8" viewBox="0 0 14 8" style="left:1899px;top:934px;"><rect x="1" y="1" width="1.3" height="1.3" fill="#8a8a8a"/><rect x="1" y="4" width="1.3" height="1.3" fill="#8a8a8a"/><rect x="4" y="1" width="1.3" height="1.3" fill="#8a8a8a"/><rect x="4" y="4" width="1.3" height="1.3" fill="#8a8a8a"/><rect x="7" y="1" width="1.3" height="1.3" fill="#8a8a8a"/><rect x="7" y="4" width="1.3" height="1.3" fill="#8a8a8a"/><rect x="10" y="1" width="1.3" height="1.3" fill="#8a8a8a"/><rect x="10" y="4" width="1.3" height="1.3" fill="#8a8a8a"/></svg><div class="a" style="left:1617px;top:951px;width:295px;height:24px;background:#424242;border-radius:4px;border-bottom-left-radius:0;border-bottom-right-radius:0"></div><svg width="10" height="8" viewBox="0 0 10 8" style="left:1625px;top:959px;"><path d="M1 1H9L5 7Z" fill="#bdbdbd"/></svg><div class="t" style="left:1638px;top:956px;color:#e6e6e6;font-size:12px;">Output</div><svg width="14" height="8" viewBox="0 0 14 8" style="left:1899px;top:958px;"><rect x="1" y="1" width="1.3" height="1.3" fill="#8a8a8a"/><rect x="1" y="4" width="1.3" height="1.3" fill="#8a8a8a"/><rect x="4" y="1" width="1.3" height="1.3" fill="#8a8a8a"/><rect x="4" y="4" width="1.3" height="1.3" fill="#8a8a8a"/><rect x="7" y="1" width="1.3" height="1.3" fill="#8a8a8a"/><rect x="7" y="4" width="1.3" height="1.3" fill="#8a8a8a"/><rect x="10" y="1" width="1.3" height="1.3" fill="#8a8a8a"/><rect x="10" y="4" width="1.3" height="1.3" fill="#8a8a8a"/></svg><div class="a" style="left:1617px;top:975px;width:295px;height:19px;background:#3a3a3a;border-radius:0px;"></div><div class="a" style="left:1625px;top:983px;width:265px;height:13px;background:#1d1d1d;border-radius:4px;"></div><div class="t" style="left:1632px;top:985px;color:#e6e6e6;">/tmp\</div><div class="a" style="left:1891px;top:983px;width:20px;height:13px;background:#545454;border-radius:4px;"></div>
<div class="a" style="left:2px;top:922px;width:1582px;height:72px;background:#2b2b2b;border-radius:6px;"></div><div class="a" style="left:2px;top:922px;width:1582px;height:25px;background:#3b3b3b;border-radius:6px;border-bottom-left-radius:0;border-bottom-right-radius:0"></div><div class="a" style="left:9px;top:926px;width:29px;height:17px;background:#2c2c2c;border-radius:4px;"></div><svg width="28" height="17" viewBox="0 0 28 17" style="left:11px;top:926px;"><circle cx="7.5" cy="8.5" r="6" fill="#e6e6e6"/><path d="M9 5L6 8.5L9 12" stroke="#2c2c2c" stroke-width="1.6" fill="none"/><path d="M17.5 7L20 9.5L22.5 7" stroke="#bbb" stroke-width="1.2" fill="none"/></svg><div class="a" style="left:47px;top:926px;width:66px;height:17px;background:#2c2c2c;border-radius:4px;opacity:0.6"></div><div class="t" style="left:53px;top:928px;color:#e6e6e6;">Playback</div><svg width="9" height="6" viewBox="0 0 9 6" style="left:103px;top:932px;"><path d="M1 1L4.5 4.5L8 1" stroke="#bdbdbd" stroke-width="1.4" fill="none"/></svg><div class="a" style="left:115px;top:926px;width:58px;height:17px;background:#2c2c2c;border-radius:4px;opacity:0.6"></div><div class="t" style="left:122px;top:928px;color:#e6e6e6;">Keying</div><svg width="9" height="6" viewBox="0 0 9 6" style="left:162px;top:932px;"><path d="M1 1L4.5 4.5L8 1" stroke="#bdbdbd" stroke-width="1.4" fill="none"/></svg><div class="t" style="left:181px;top:928px;color:#e6e6e6;">View</div><div class="t" style="left:221px;top:928px;color:#e6e6e6;">Marker</div><div class="a" style="left:711px;top:926px;width:17px;height:17px;background:#545454;border-radius:4px;"></div><svg width="17" height="17" viewBox="0 0 17 17" style="left:711px;top:926px;"><circle cx="8.5" cy="8.5" r="4" fill="#e6e6e6"/></svg><div class="a" style="left:736px;top:926px;width:118px;height:17px;background:#545454;border-radius:4px;"></div><div class="a" style="left:754px;top:926px;width:1px;height:17px;background:#3d3d3d;border-radius:0px;"></div><div class="a" style="left:773px;top:926px;width:1px;height:17px;background:#3d3d3d;border-radius:0px;"></div><div class="a" style="left:792px;top:926px;width:1px;height:17px;background:#3d3d3d;border-radius:0px;"></div><div class="a" style="left:812px;top:926px;width:1px;height:17px;background:#3d3d3d;border-radius:0px;"></div><div class="a" style="left:833px;top:926px;width:1px;height:17px;background:#3d3d3d;border-radius:0px;"></div><svg width="118" height="17" viewBox="0 0 118 17" style="left:736px;top:926px;"><path d="M4 4V13" stroke="#e6e6e6" stroke-width="1.6"/><path d="M13 4V13L6 8.5Z" fill="#e6e6e6"/><path d="M19.5 8.5L23 5L26.5 8.5L23 12Z" fill="#e6e6e6"/><path d="M34 4V13L28 8.5Z" fill="#e6e6e6"/><path d="M50 3.5V13.5L42 8.5Z" fill="#e6e6e6"/><path d="M63 3.5V13.5L71 8.5Z" fill="#e6e6e6"/><path d="M81 4V13L87 8.5Z" fill="#e6e6e6"/><path d="M88.5 8.5L92 5L95.5 8.5L92 12Z" fill="#e6e6e6"/><path d="M101 4V13L108 8.5Z" fill="#e6e6e6"/><path d="M110 4V13" stroke="#e6e6e6" stroke-width="1.6"/></svg><div class="a" style="left:1296px;top:926px;width:73px;height:18px;background:#545454;border-radius:4px;"></div><div class="t" style="left:1296px;width:73px;top:928px;text-align:center;color:#e6e6e6;">119</div><div class="a" style="left:1376px;top:926px;width:106px;height:18px;background:#545454;border-radius:4px;"></div><div class="a" style="left:1376px;top:926px;width:19px;height:18px;background:#3d3d3d;border-radius:4px;opacity:0.5;border-top-right-radius:0;border-bottom-right-radius:0"></div><svg width="17" height="17" viewBox="0 0 17 17" style="left:1377px;top:927px;"><circle cx="8.5" cy="9.5" r="5.2" stroke="#e6e6e6" stroke-width="1.3" fill="none"/><path d="M8.5 6.5V9.5H11M7 2.5H10M13 4L14.5 5.5" stroke="#e6e6e6" stroke-width="1.2" fill="none"/></svg><div class="t" style="left:1410px;top:928px;color:#e6e6e6;">Start</div><div class="t" style="left:1462px;top:928px;color:#e6e6e6;">1</div><div class="a" style="left:1485px;top:926px;width:81px;height:18px;background:#545454;border-radius:4px;"></div><div class="t" style="left:1498px;top:928px;color:#e6e6e6;">End</div><div class="t" style="left:1532px;top:928px;color:#e6e6e6;">250</div><div class="a" style="left:2px;top:947px;width:1582px;height:21px;background:#2c2a2a;border-radius:0px;"></div><div class="a" style="left:2px;top:968px;width:1582px;height:16px;background:#303030;border-radius:0px;"></div><div class="a" style="left:52px;top:968px;width:1475px;height:16px;background:#553d3e;border-radius:0px;"></div><svg width="1920" height="1015" style="left:0;top:0"><rect x="52.0" y="968" width="1" height="16" fill="#3a2828"/><rect x="81.5" y="968" width="1" height="16" fill="#4a3434"/><rect x="111.0" y="968" width="1" height="16" fill="#3a2828"/><rect x="140.5" y="968" width="1" height="16" fill="#4a3434"/><rect x="170.0" y="968" width="1" height="16" fill="#3a2828"/><rect x="199.5" y="968" width="1" height="16" fill="#4a3434"/><rect x="229.0" y="968" width="1" height="16" fill="#3a2828"/><rect x="258.5" y="968" width="1" height="16" fill="#4a3434"/><rect x="288.0" y="968" width="1" height="16" fill="#3a2828"/><rect x="317.5" y="968" width="1" height="16" fill="#4a3434"/><rect x="347.0" y="968" width="1" height="16" fill="#3a2828"/><rect x="376.5" y="968" width="1" height="16" fill="#4a3434"/><rect x="406.0" y="968" width="1" height="16" fill="#3a2828"/><rect x="435.5" y="968" width="1" height="16" fill="#4a3434"/><rect x="465.0" y="968" width="1" height="16" fill="#3a2828"/><rect x="494.5" y="968" width="1" height="16" fill="#4a3434"/><rect x="524.0" y="968" width="1" height="16" fill="#3a2828"/><rect x="553.5" y="968" width="1" height="16" fill="#4a3434"/><rect x="583.0" y="968" width="1" height="16" fill="#3a2828"/><rect x="612.5" y="968" width="1" height="16" fill="#4a3434"/><rect x="642.0" y="968" width="1" height="16" fill="#3a2828"/><rect x="671.5" y="968" width="1" height="16" fill="#4a3434"/><rect x="701.0" y="968" width="1" height="16" fill="#3a2828"/><rect x="730.5" y="968" width="1" height="16" fill="#4a3434"/><rect x="760.0" y="968" width="1" height="16" fill="#3a2828"/><rect x="789.5" y="968" width="1" height="16" fill="#4a3434"/><rect x="819.0" y="968" width="1" height="16" fill="#3a2828"/><rect x="848.5" y="968" width="1" height="16" fill="#4a3434"/><rect x="878.0" y="968" width="1" height="16" fill="#3a2828"/><rect x="907.5" y="968" width="1" height="16" fill="#4a3434"/><rect x="937.0" y="968" width="1" height="16" fill="#3a2828"/><rect x="966.5" y="968" width="1" height="16" fill="#4a3434"/><rect x="996.0" y="968" width="1" height="16" fill="#3a2828"/><rect x="1025.5" y="968" width="1" height="16" fill="#4a3434"/><rect x="1055.0" y="968" width="1" height="16" fill="#3a2828"/><rect x="1084.5" y="968" width="1" height="16" fill="#4a3434"/><rect x="1114.0" y="968" width="1" height="16" fill="#3a2828"/><rect x="1143.5" y="968" width="1" height="16" fill="#4a3434"/><rect x="1173.0" y="968" width="1" height="16" fill="#3a2828"/><rect x="1202.5" y="968" width="1" height="16" fill="#4a3434"/><rect x="1232.0" y="968" width="1" height="16" fill="#3a2828"/><rect x="1261.5" y="968" width="1" height="16" fill="#4a3434"/><rect x="1291.0" y="968" width="1" height="16" fill="#3a2828"/><rect x="1320.5" y="968" width="1" height="16" fill="#4a3434"/><rect x="1350.0" y="968" width="1" height="16" fill="#3a2828"/><rect x="1379.5" y="968" width="1" height="16" fill="#4a3434"/><rect x="1409.0" y="968" width="1" height="16" fill="#3a2828"/><rect x="1438.5" y="968" width="1" height="16" fill="#4a3434"/><rect x="1468.0" y="968" width="1" height="16" fill="#3a2828"/><rect x="1497.5" y="968" width="1" height="16" fill="#4a3434"/><rect x="1527.0" y="968" width="1" height="16" fill="#3a2828"/><rect x="1556.5" y="968" width="1" height="16" fill="#4a3434"/></svg><div class="t" style="left:32px;width:40px;top:952px;text-align:center;color:#cfcfcf;">0</div><div class="t" style="left:91px;width:40px;top:952px;text-align:center;color:#cfcfcf;">10</div><div class="t" style="left:150px;width:40px;top:952px;text-align:center;color:#cfcfcf;">20</div><div class="t" style="left:209px;width:40px;top:952px;text-align:center;color:#cfcfcf;">30</div><div class="t" style="left:268px;width:40px;top:952px;text-align:center;color:#cfcfcf;">40</div><div class="t" style="left:327px;width:40px;top:952px;text-align:center;color:#cfcfcf;">50</div><div class="t" style="left:386px;width:40px;top:952px;text-align:center;color:#cfcfcf;">60</div><div class="t" style="left:445px;width:40px;top:952px;text-align:center;color:#cfcfcf;">70</div><div class="t" style="left:504px;width:40px;top:952px;text-align:center;color:#cfcfcf;">80</div><div class="t" style="left:563px;width:40px;top:952px;text-align:center;color:#cfcfcf;">90</div><div class="t" style="left:622px;width:40px;top:952px;text-align:center;color:#cfcfcf;">100</div><div class="t" style="left:681px;width:40px;top:952px;text-align:center;color:#cfcfcf;">110</div><div class="t" style="left:799px;width:40px;top:952px;text-align:center;color:#cfcfcf;">130</div><div class="t" style="left:858px;width:40px;top:952px;text-align:center;color:#cfcfcf;">140</div><div class="t" style="left:917px;width:40px;top:952px;text-align:center;color:#cfcfcf;">150</div><div class="t" style="left:976px;width:40px;top:952px;text-align:center;color:#cfcfcf;">160</div><div class="t" style="left:1035px;width:40px;top:952px;text-align:center;color:#cfcfcf;">170</div><div class="t" style="left:1094px;width:40px;top:952px;text-align:center;color:#cfcfcf;">180</div><div class="t" style="left:1153px;width:40px;top:952px;text-align:center;color:#cfcfcf;">190</div><div class="t" style="left:1212px;width:40px;top:952px;text-align:center;color:#cfcfcf;">200</div><div class="t" style="left:1271px;width:40px;top:952px;text-align:center;color:#cfcfcf;">210</div><div class="t" style="left:1330px;width:40px;top:952px;text-align:center;color:#cfcfcf;">220</div><div class="t" style="left:1389px;width:40px;top:952px;text-align:center;color:#cfcfcf;">230</div><div class="t" style="left:1448px;width:40px;top:952px;text-align:center;color:#cfcfcf;">240</div><div class="t" style="left:1507px;width:40px;top:952px;text-align:center;color:#cfcfcf;">250</div><div class="a" style="left:8px;top:984px;width:1572px;height:8px;background:#686e69;border-radius:4px;"></div><svg width="10" height="9" viewBox="0 0 10 9" style="left:9px;top:984px;"><circle cx="5" cy="4.5" r="3" fill="#7a7a7a" stroke="#555"/></svg><svg width="10" height="9" viewBox="0 0 10 9" style="left:1567px;top:984px;"><circle cx="5" cy="4.5" r="3" fill="#7a7a7a" stroke="#555"/></svg><div class="a" style="left:754px;top:968px;width:2px;height:16px;background:#d0485a;border-radius:0px;"></div><div class="a" style="left:739px;top:949px;width:31px;height:19px;background:#4772b3;border-radius:5px;"></div><div class="t" style="left:739px;width:31px;top:952px;text-align:center;color:#ffffff;">119</div><svg width="8" height="14" viewBox="0 0 8 14" style="left:0px;top:962px;"><path d="M2 2L6 7L2 12" stroke="#9a9a9a" stroke-width="1.2" fill="none"/></svg><svg width="8" height="14" viewBox="0 0 8 14" style="left:1577px;top:955px;"><path d="M6 2L2 7L6 12" stroke="#9a9a9a" stroke-width="1.2" fill="none"/></svg>
<div class="a" style="left:0px;top:994px;width:1920px;height:21px;background:#2e2e2e;border-radius:0px;"></div><svg width="12" height="16" viewBox="0 0 12 16" style="left:11px;top:997px;"><rect x="1.5" y="1.5" width="9" height="13" rx="3.5" stroke="#d0d0d0" stroke-width="1.1" fill="none"/><path d="M1.5 7H10.5M6 1.5V7" stroke="#d0d0d0" stroke-width="1"/><path d="M2 5A3.5 3.5 0 0 1 5.5 2V6.5H2Z" fill="#d0d0d0"/></svg><div class="t" style="left:34px;top:999px;color:#d0d0d0;">Select</div><svg width="12" height="16" viewBox="0 0 12 16" style="left:76px;top:997px;"><rect x="1.5" y="1.5" width="9" height="13" rx="3.5" stroke="#d0d0d0" stroke-width="1.1" fill="none"/><path d="M1.5 7H10.5M6 1.5V7" stroke="#d0d0d0" stroke-width="1"/><path d="M2 5A3.5 3.5 0 0 1 5.5 2V6.5H2Z" fill="#d0d0d0"/></svg><svg width="6" height="10" viewBox="0 0 6 10" style="left:88px;top:996px;"><path d="M1.5 1V8M4 1V6" stroke="#d0d0d0" stroke-width="0.9"/></svg><div class="t" style="left:100px;top:999px;color:#d0d0d0;">Box Select</div><svg width="12" height="16" viewBox="0 0 12 16" style="left:247px;top:997px;"><rect x="1.5" y="1.5" width="9" height="13" rx="3.5" stroke="#d0d0d0" stroke-width="1.1" fill="none"/><path d="M1.5 7H10.5M6 1.5V7" stroke="#d0d0d0" stroke-width="1"/><rect x="4.5" y="3" width="2" height="4" fill="#d0d0d0"/></svg><div class="t" style="left:270px;top:999px;color:#d0d0d0;">Rotate View</div><svg width="12" height="16" viewBox="0 0 12 16" style="left:483px;top:997px;"><rect x="1.5" y="1.5" width="9" height="13" rx="3.5" stroke="#d0d0d0" stroke-width="1.1" fill="none"/><path d="M1.5 7H10.5M6 1.5V7" stroke="#d0d0d0" stroke-width="1"/><path d="M10 5A3.5 3.5 0 0 0 6.5 2V6.5H10Z" fill="#d0d0d0"/></svg><div class="t" style="left:506px;top:999px;color:#d0d0d0;">Object Context Menu</div><div class="t" style="right:30px;top:999px;color:#d0d0d0;font-size:11.55px;">Scene Collection | terrain | Verts:4,198,401 | Faces:4,194,304 | Tris:8,388,608 | Objects:1/15 | Mem: 2.44 GiB | v2.82.7</div>
</body></html>
